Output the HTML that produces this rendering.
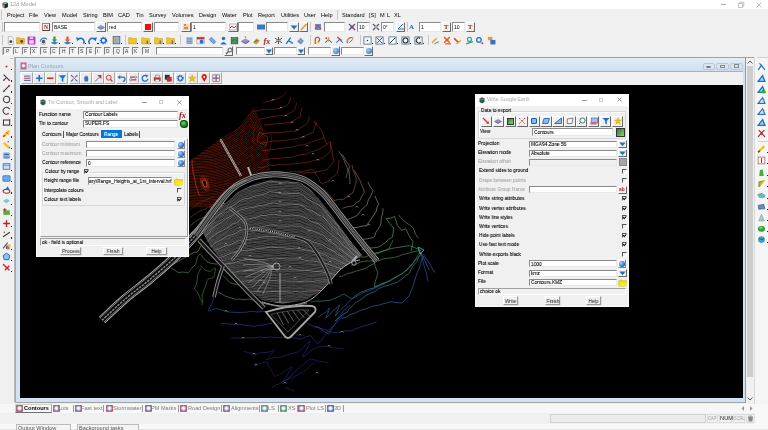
<!DOCTYPE html><html><head><meta charset="utf-8"><style>
html,body{margin:0;padding:0;width:768px;height:430px;overflow:hidden;background:#f0f0f0;}
body{position:relative;font-family:"Liberation Sans",sans-serif;}
div{position:absolute;box-sizing:border-box;}
.t{white-space:nowrap;line-height:1.2;will-change:transform;}
</style></head><body>
<div style="left:0px;top:0px;width:768px;height:9px;background:#fff"></div>
<svg style="position:absolute;left:0.5px;top:1px" width="8" height="8" viewBox="0 0 8 8"><path d="M1.5 2 L4.5 0.8 L7 2 L7 6 L4 7.5 L1.5 6Z" fill="#2f5a48"/><path d="M1.5 2 L4.5 0.8 L7 2 L4 3.2Z" fill="#8fb8a0"/><path d="M1 3 L3.5 4 L3.5 7 L1 6Z" fill="#d8a0a0" opacity="0.7"/><path d="M4 3.5 L6.5 2.5 L6.5 6 L4 7Z" fill="#1a2a22"/></svg>
<div class="t" style="left:10px;top:1.24px;font-size:5.6px;color:#9a9a9a;">12d Model</div>
<div style="left:720.5px;top:4px;width:5px;height:0.7px;background:#aaa"></div>
<svg style="position:absolute;left:737px;top:1px" width="8" height="7"><path d="M1.5 2.5 H5.5 V6.5 H1.5Z M2.8 2.5 V1.2 H6.8 V5.2 H5.5" stroke="#999" stroke-width="0.6" fill="none"/></svg>
<svg style="position:absolute;left:756px;top:1.5px" width="6" height="6"><path d="M0.5 0.5 L5.5 5.5 M5.5 0.5 L0.5 5.5" stroke="#999" stroke-width="0.6"/></svg>
<div style="left:0px;top:9px;width:768px;height:12px;background:#f0f0f0"></div>
<div style="left:1px;top:10px;width:1px;height:10px;background:#c8c8c8"></div>
<div class="t" style="left:6.5px;top:11.64px;font-size:5.6px;color:#000;">Project</div>
<div class="t" style="left:29.4px;top:11.64px;font-size:5.6px;color:#000;">File</div>
<div class="t" style="left:44px;top:11.64px;font-size:5.6px;color:#000;">View</div>
<div class="t" style="left:62px;top:11.64px;font-size:5.6px;color:#000;">Model</div>
<div class="t" style="left:83px;top:11.64px;font-size:5.6px;color:#000;">String</div>
<div class="t" style="left:103px;top:11.64px;font-size:5.6px;color:#000;">BIM</div>
<div class="t" style="left:118px;top:11.64px;font-size:5.6px;color:#000;">CAD</div>
<div class="t" style="left:136px;top:11.64px;font-size:5.6px;color:#000;">Tin</div>
<div class="t" style="left:149px;top:11.64px;font-size:5.6px;color:#000;">Survey</div>
<div class="t" style="left:172px;top:11.64px;font-size:5.6px;color:#000;">Volumes</div>
<div class="t" style="left:198.8px;top:11.64px;font-size:5.6px;color:#000;">Design</div>
<div class="t" style="left:222px;top:11.64px;font-size:5.6px;color:#000;">Water</div>
<div class="t" style="left:242.5px;top:11.64px;font-size:5.6px;color:#000;">Plot</div>
<div class="t" style="left:258px;top:11.64px;font-size:5.6px;color:#000;">Report</div>
<div class="t" style="left:280.8px;top:11.64px;font-size:5.6px;color:#000;">Utilities</div>
<div class="t" style="left:303.7px;top:11.64px;font-size:5.6px;color:#000;">User</div>
<div class="t" style="left:321.4px;top:11.64px;font-size:5.6px;color:#000;">Help</div>
<div class="t" style="left:342px;top:11.64px;font-size:5.6px;color:#000;">Standard</div>
<div class="t" style="left:369px;top:11.64px;font-size:5.6px;color:#000;">[S]</div>
<div class="t" style="left:379.5px;top:11.64px;font-size:5.6px;color:#000;">M</div>
<div class="t" style="left:387.3px;top:11.64px;font-size:5.6px;color:#000;">L</div>
<div class="t" style="left:394px;top:11.64px;font-size:5.6px;color:#000;">XL</div>
<div style="left:337px;top:10px;width:1px;height:10px;background:#c8c8c8"></div>
<div style="left:1.5px;top:22px;width:1px;height:10px;background:#c4c4c4"></div>
<div style="left:4px;top:22px;width:36px;height:10px;background:#fff;border-top:1px solid #8a8a8a;border-left:1px solid #8a8a8a;border-bottom:1px solid #e8e8e8;border-right:1px solid #e8e8e8;box-sizing:border-box;"></div>
<div style="left:42px;top:23px;width:8px;height:8px;background:#f4eeee;border:1px solid #a88080;border-right-color:#604040;border-bottom-color:#604040"></div>
<div class="t" style="left:43.6px;top:23.70px;font-size:5.5px;color:#a01010;font-weight:bold;font-family:'Liberation Serif',serif">N</div>
<div style="left:52px;top:22px;width:43px;height:10px;background:#fff;border-top:1px solid #8a8a8a;border-left:1px solid #8a8a8a;border-bottom:1px solid #e8e8e8;border-right:1px solid #e8e8e8;box-sizing:border-box;"></div>
<div class="t" style="left:54px;top:23.50px;font-size:5px;color:#000;">BASE</div>
<div style="left:96px;top:22px;width:10px;height:10px;background:#f0f0f0;border-top:1px solid #fff;border-left:1px solid #fff;border-bottom:1px solid #696969;border-right:1px solid #696969;box-sizing:border-box;"></div>
<svg style="position:absolute;left:97.0px;top:23.0px" width="8" height="8" viewBox="0 0 8 8"><path d="M0.5 4 L4 2 L7.5 4 L4 6Z" fill="#7a9ad0"/><path d="M0.5 4.8 L4 6.8 L7.5 4.8 L7.5 4 L4 6 L0.5 4Z" fill="#4a3a70"/></svg>
<div style="left:107px;top:22px;width:35px;height:10px;background:#fff;border-top:1px solid #8a8a8a;border-left:1px solid #8a8a8a;border-bottom:1px solid #e8e8e8;border-right:1px solid #e8e8e8;box-sizing:border-box;"></div>
<div class="t" style="left:109px;top:23.50px;font-size:5px;color:#000;">red</div>
<div style="left:143px;top:22px;width:10px;height:10px;background:#f0f0f0;border-top:1px solid #fff;border-left:1px solid #fff;border-bottom:1px solid #696969;border-right:1px solid #696969;box-sizing:border-box;"></div>
<div style="left:145px;top:24px;width:6px;height:6px;background:#ee1111"></div>
<div style="left:154px;top:22px;width:25px;height:10px;background:#fff;border-top:1px solid #8a8a8a;border-left:1px solid #8a8a8a;border-bottom:1px solid #e8e8e8;border-right:1px solid #e8e8e8;box-sizing:border-box;"></div>
<div style="left:181px;top:22px;width:10px;height:10px;background:#f0f0f0;border-top:1px solid #fff;border-left:1px solid #fff;border-bottom:1px solid #696969;border-right:1px solid #696969;box-sizing:border-box;"></div>
<svg style="position:absolute;left:182.0px;top:23.0px" width="8" height="8" viewBox="0 0 8 8"><rect x="1" y="1" width="6" height="6" fill="#f6d7a0"/><path d="M2 2h2M2 5h4" stroke="#c03020" stroke-width="1"/></svg>
<div style="left:191px;top:22px;width:35px;height:10px;background:#fff;border-top:1px solid #8a8a8a;border-left:1px solid #8a8a8a;border-bottom:1px solid #e8e8e8;border-right:1px solid #e8e8e8;box-sizing:border-box;"></div>
<div class="t" style="left:193px;top:23.50px;font-size:5px;color:#000;">1</div>
<div style="left:228px;top:22px;width:10px;height:10px;background:#f0f0f0;border-top:1px solid #fff;border-left:1px solid #fff;border-bottom:1px solid #696969;border-right:1px solid #696969;box-sizing:border-box;"></div>
<svg style="position:absolute;left:229.0px;top:23.0px" width="8" height="8" viewBox="0 0 8 8"><rect x="0.5" y="1" width="7" height="6" fill="#f4f4f4" stroke="#888" stroke-width="0.5"/><path d="M1 5 Q3 2 4 4 T7 3" stroke="#d02020" fill="none"/></svg>
<div style="left:238px;top:22px;width:16px;height:10px;background:#fff;border-top:1px solid #8a8a8a;border-left:1px solid #8a8a8a;border-bottom:1px solid #e8e8e8;border-right:1px solid #e8e8e8;box-sizing:border-box;"></div>
<svg style="position:absolute;left:256.5px;top:23.0px" width="8" height="8" viewBox="0 0 8 8"><rect x="0" y="1.5" width="8" height="5" fill="#3a78c0"/></svg>
<div style="left:266px;top:22px;width:22px;height:10px;background:#fff;border-top:1px solid #8a8a8a;border-left:1px solid #8a8a8a;border-bottom:1px solid #e8e8e8;border-right:1px solid #e8e8e8;box-sizing:border-box;"></div>
<div style="left:289px;top:22px;width:10px;height:10px;background:#f0f0f0;border-top:1px solid #fff;border-left:1px solid #fff;border-bottom:1px solid #696969;border-right:1px solid #696969;box-sizing:border-box;"></div>
<svg style="position:absolute;left:290px;top:24px" width="8" height="6"><path d="M0.5 1.5 L7.5 1.5 L4 5.5Z" fill="#1f6fc0"/></svg>
<div style="left:299px;top:22px;width:9px;height:10px;background:#f0f0f0;border-top:1px solid #fff;border-left:1px solid #fff;border-bottom:1px solid #696969;border-right:1px solid #696969;box-sizing:border-box;"></div>
<svg style="position:absolute;left:300px;top:23px" width="8" height="8"><path d="M1 7 L6.5 1" stroke="#d8a020" stroke-width="1.5"/></svg>
<div style="left:310px;top:22px;width:1px;height:10px;background:#c8c8c8"></div>
<svg style="position:absolute;left:314.0px;top:23.0px" width="8" height="8" viewBox="0 0 8 8"><rect x="1" y="1" width="6" height="6" fill="#6a8ad0"/><path d="M1 6 L4 2 L7 6" stroke="#e03020" fill="none"/></svg>
<div style="left:324px;top:22px;width:21px;height:10px;background:#fff;border-top:1px solid #8a8a8a;border-left:1px solid #8a8a8a;border-bottom:1px solid #e8e8e8;border-right:1px solid #e8e8e8;box-sizing:border-box;"></div>
<svg style="position:absolute;left:347.5px;top:23.0px" width="8" height="8" viewBox="0 0 8 8"><path d="M1 1 L7 7 M7 1 L1 7" stroke="#3060c0" stroke-width="1.3"/><circle cx="4" cy="4" r="1.5" fill="#e02020"/></svg>
<div style="left:357px;top:22px;width:13px;height:10px;background:#fff;border-top:1px solid #8a8a8a;border-left:1px solid #8a8a8a;border-bottom:1px solid #e8e8e8;border-right:1px solid #e8e8e8;box-sizing:border-box;"></div>
<div class="t" style="left:358.5px;top:23.50px;font-size:5px;color:#000;">10</div>
<svg style="position:absolute;left:372.0px;top:23.0px" width="8" height="8" viewBox="0 0 8 8"><path d="M1 1 L7 7 M7 1 L1 7" stroke="#3060c0" stroke-width="1.3"/><circle cx="4" cy="4" r="1.5" fill="#e0a020"/></svg>
<div style="left:381px;top:22px;width:13px;height:10px;background:#fff;border-top:1px solid #8a8a8a;border-left:1px solid #8a8a8a;border-bottom:1px solid #e8e8e8;border-right:1px solid #e8e8e8;box-sizing:border-box;"></div>
<div class="t" style="left:382.5px;top:23.50px;font-size:5px;color:#000;">0&deg;</div>
<div style="left:396px;top:22px;width:9px;height:10px;background:#f0f0f0;border-top:1px solid #fff;border-left:1px solid #fff;border-bottom:1px solid #696969;border-right:1px solid #696969;box-sizing:border-box;"></div>
<svg style="position:absolute;left:396.5px;top:23.0px" width="8" height="8" viewBox="0 0 8 8"><path d="M1 6 L7 6 M1 6 L6 1" stroke="#4070b0" stroke-width="1"/></svg>
<div style="left:407px;top:22px;width:1px;height:10px;background:#c8c8c8"></div>
<div class="t" style="left:409px;top:22.80px;font-size:7px;color:#1f5fb0;font-weight:bold;font-family:'Liberation Serif',serif">A</div>
<div style="left:419px;top:22px;width:22px;height:10px;background:#fff;border-top:1px solid #8a8a8a;border-left:1px solid #8a8a8a;border-bottom:1px solid #e8e8e8;border-right:1px solid #e8e8e8;box-sizing:border-box;"></div>
<div class="t" style="left:421px;top:23.50px;font-size:5px;color:#000;">1</div>
<div style="left:442px;top:22px;width:9px;height:10px;background:#f0f0f0;border-top:1px solid #fff;border-left:1px solid #fff;border-bottom:1px solid #696969;border-right:1px solid #696969;box-sizing:border-box;"></div>
<div class="t" style="left:443.5px;top:23.10px;font-size:6.5px;color:#a02010;font-weight:bold;font-family:'Liberation Serif',serif">T</div>
<div style="left:452px;top:22px;width:13px;height:10px;background:#fff;border-top:1px solid #8a8a8a;border-left:1px solid #8a8a8a;border-bottom:1px solid #e8e8e8;border-right:1px solid #e8e8e8;box-sizing:border-box;"></div>
<div class="t" style="left:453.5px;top:23.50px;font-size:5px;color:#000;">10</div>
<div style="left:466px;top:22px;width:9px;height:10px;background:#f0f0f0;border-top:1px solid #fff;border-left:1px solid #fff;border-bottom:1px solid #696969;border-right:1px solid #696969;box-sizing:border-box;"></div>
<div class="t" style="left:467.5px;top:23.10px;font-size:6.5px;color:#a02010;font-weight:bold;font-family:'Liberation Serif',serif">T</div>
<div style="left:1.5px;top:35px;width:1px;height:10px;background:#c4c4c4"></div>
<svg style="position:absolute;left:5.699999999999999px;top:35.5px" width="9" height="9" viewBox="0 0 8 8"><path d="M2 0.5 L5 0.5 L6.5 2 L6.5 7.5 L2 7.5Z" fill="#f4f4f4" stroke="#999" stroke-width="0.5"/><circle cx="4.3" cy="5" r="1.3" fill="#444"/></svg>
<svg style="position:absolute;left:15.8px;top:35.5px" width="9" height="9" viewBox="0 0 8 8"><path d="M0.5 1.5 L3 1.5 L3.5 2.2 L7.5 2.2 L7.5 7 L0.5 7Z" fill="#f0b830" stroke="#c09010" stroke-width="0.4"/><circle cx="5" cy="4.8" r="1.2" fill="#444"/></svg>
<svg style="position:absolute;left:26.9px;top:35.5px" width="9" height="9" viewBox="0 0 8 8"><rect x="0.5" y="0.5" width="7" height="7" rx="0.8" fill="#b040c0"/><rect x="2" y="3.8" width="4" height="3" fill="#f4d8f8"/><rect x="2.5" y="0.8" width="3" height="2" fill="#e8c0f0"/></svg>
<svg style="position:absolute;left:38.7px;top:35.5px" width="9" height="9" viewBox="0 0 8 8"><path d="M1 5 A3.5 3.5 0 0 1 7 3" stroke="#2a80d0" stroke-width="1" fill="none"/><circle cx="4" cy="5" r="1.6" fill="#555"/><path d="M1.5 6.5 A3 3 0 0 0 6 6.5" stroke="#aaa" stroke-width="0.8" fill="none"/></svg>
<svg style="position:absolute;left:49.7px;top:35.5px" width="9" height="9" viewBox="0 0 8 8"><path d="M0.5 6 L4 7.5 L7.5 6 L4 4.8Z" fill="#3a7ad0"/><path d="M3 0.5 L5 0.5 L5 3 L6.5 3 L4 5.5 L1.5 3 L3 3Z" fill="#30a040"/></svg>
<div style="left:58.7px;top:43px;width:1.2px;height:1.2px;background:#222"></div>
<svg style="position:absolute;left:63.0px;top:35.5px" width="9" height="9" viewBox="0 0 8 8"><path d="M0.5 6 L4 7.5 L7.5 6 L4 4.8Z" fill="#3a7ad0"/><path d="M3 0.5 L5 0.5 L5 3 L6.5 3 L4 5.5 L1.5 3 L3 3Z" fill="#e06020"/></svg>
<div style="left:72.0px;top:43px;width:1.2px;height:1.2px;background:#222"></div>
<svg style="position:absolute;left:76.0px;top:35.5px" width="9" height="9" viewBox="0 0 8 8"><path d="M6.5 7 A3 3 0 1 0 1.8 3.2" stroke="#1f6fd0" stroke-width="1.4" fill="none"/><path d="M0 1.2 L3.8 2 L1.2 4.6Z" fill="#1f6fd0"/></svg>
<div style="left:85.0px;top:43px;width:1.2px;height:1.2px;background:#222"></div>
<svg style="position:absolute;left:88.4px;top:35.5px" width="9" height="9" viewBox="0 0 8 8"><path d="M1.5 7 A3 3 0 1 1 6.2 3.2" stroke="#1f6fd0" stroke-width="1.4" fill="none"/><path d="M8 1.2 L4.2 2 L6.8 4.6Z" fill="#1f6fd0"/></svg>
<div style="left:97.4px;top:43px;width:1.2px;height:1.2px;background:#222"></div>
<svg style="position:absolute;left:99.2px;top:35.5px" width="9" height="9" viewBox="0 0 8 8"><circle cx="4" cy="4" r="2.4" stroke="#1f6fd0" stroke-width="1.8" fill="none" stroke-dasharray="1.1 0.6"/><circle cx="4" cy="4" r="2" stroke="#1f6fd0" stroke-width="0.9" fill="none"/></svg>
<svg style="position:absolute;left:111.6px;top:35.5px" width="9" height="9" viewBox="0 0 8 8"><rect x="1" y="0.5" width="6" height="6.5" fill="#80b8e8" stroke="#405070" stroke-width="0.6"/><rect x="2" y="2" width="3" height="3" fill="#e0a030"/></svg>
<div style="left:120.6px;top:43px;width:1.2px;height:1.2px;background:#222"></div>
<svg style="position:absolute;left:128.3px;top:35.5px" width="9" height="9" viewBox="0 0 8 8"><path d="M0.5 1.5 L3 1.5 L3.5 2.2 L7.5 2.2 L7.5 7 L0.5 7Z" fill="#f2c428" stroke="#c09010" stroke-width="0.4"/></svg>
<div style="left:137.3px;top:43px;width:1.2px;height:1.2px;background:#222"></div>
<svg style="position:absolute;left:141.3px;top:35.5px" width="9" height="9" viewBox="0 0 8 8"><path d="M0.5 1.5 L3 1.5 L3.5 2.2 L7.5 2.2 L7.5 7 L0.5 7Z" fill="#f2c428" stroke="#c09010" stroke-width="0.4"/><path d="M5.5 4 L5.5 7" stroke="#2050b0" stroke-width="0.9"/></svg>
<div style="left:150.3px;top:43px;width:1.2px;height:1.2px;background:#222"></div>
<svg style="position:absolute;left:153.8px;top:35.5px" width="9" height="9" viewBox="0 0 8 8"><path d="M0.5 1.5 L3 1.5 L3.5 2.2 L7.5 2.2 L7.5 7 L0.5 7Z" fill="#f2c428" stroke="#c09010" stroke-width="0.4"/><path d="M5.5 4 L5.5 7" stroke="#2050b0" stroke-width="0.9"/></svg>
<div style="left:162.8px;top:43px;width:1.2px;height:1.2px;background:#222"></div>
<svg style="position:absolute;left:166.1px;top:35.5px" width="9" height="9" viewBox="0 0 8 8"><path d="M0.5 1.5 L3 1.5 L3.5 2.2 L7.5 2.2 L7.5 7 L0.5 7Z" fill="#f2c428" stroke="#c09010" stroke-width="0.4"/><path d="M5.5 4 L5.5 7" stroke="#2050b0" stroke-width="0.9"/></svg>
<div style="left:175.1px;top:43px;width:1.2px;height:1.2px;background:#222"></div>
<svg style="position:absolute;left:184.5px;top:35.5px" width="9" height="9" viewBox="0 0 8 8"><rect x="1" y="1" width="6" height="6" fill="#c0d0e8"/><path d="M1.5 2 L6.5 2 M1.5 3.5 L6.5 3.5 M1.5 5 L6.5 5 M1.5 6.5 L6.5 6.5" stroke="#3a6aa0" stroke-width="0.6"/></svg>
<svg style="position:absolute;left:195.5px;top:35.5px" width="9" height="9" viewBox="0 0 8 8"><rect x="0.8" y="1" width="6.5" height="6" fill="#f0f0f0" stroke="#888" stroke-width="0.4"/><rect x="0.8" y="1" width="6.5" height="2" fill="#d03030"/><circle cx="5" cy="5" r="1.8" fill="#3070d0"/></svg>
<svg style="position:absolute;left:207.5px;top:35.5px" width="9" height="9" viewBox="0 0 8 8"><path d="M1 3 L3 1 L7 5 L5 7Z" fill="#70a8e8" stroke="#3a70c0" stroke-width="0.5"/></svg>
<svg style="position:absolute;left:218.5px;top:35.5px" width="9" height="9" viewBox="0 0 8 8"><circle cx="4" cy="2.2" r="1.6" fill="#2a70c0"/><path d="M1 7.5 Q4 3 7 7.5Z" fill="#2a70c0"/></svg>
<svg style="position:absolute;left:229.5px;top:35.5px" width="9" height="9" viewBox="0 0 8 8"><rect x="1" y="1.5" width="6" height="5.5" fill="#40a040" stroke="#334" stroke-width="0.5"/><path d="M1 5 L4 3 L7 5" stroke="#2060c0" stroke-width="0.8" fill="none"/></svg>
<svg style="position:absolute;left:240.5px;top:35.5px" width="9" height="9" viewBox="0 0 8 8"><path d="M0.5 4.2 L4 2.2 L7.5 4.2 L4 6.2Z" fill="#9a8acb"/><path d="M0.5 5 L4 7 L7.5 5 L7.5 4.2 L4 6.2 L0.5 4.2Z" fill="#503a80"/><path d="M3 0.5 L5 0.5 L4 2Z" fill="#888"/></svg>
<svg style="position:absolute;left:251.5px;top:35.5px" width="9" height="9" viewBox="0 0 8 8"><path d="M1 6 L4 2 L7 4 L4 7.5Z" fill="#c0a040"/><path d="M2 5 L5 4" stroke="#604020" stroke-width="0.6"/></svg>
<svg style="position:absolute;left:262.5px;top:35.5px" width="9" height="9" viewBox="0 0 8 8"><text x="0.5" y="6.8" font-size="7" font-family="Liberation Serif" font-style="italic" font-weight="bold" fill="#a02020">fx</text></svg>
<svg style="position:absolute;left:273.9px;top:35.5px" width="9" height="9" viewBox="0 0 8 8"><path d="M1 2 L7 6 M1 6 L7 2 M4 1 L4 7" stroke="#333" stroke-width="0.8"/><path d="M2 4 L6 4" stroke="#aaa" stroke-width="1.2"/></svg>
<svg style="position:absolute;left:284.5px;top:35.5px" width="9" height="9" viewBox="0 0 8 8"><path d="M1 7 L5 1.5 M3 4 L7 6.5" stroke="#1f6fd0" stroke-width="1.2"/></svg>
<svg style="position:absolute;left:295.5px;top:35.5px" width="9" height="9" viewBox="0 0 8 8"><path d="M1 5 L4 1.5 L7 4.5 L4.5 7.5Z" fill="#7090c0"/><path d="M2 2 L6 6" stroke="#c0c0d0" stroke-width="0.6"/></svg>
<svg style="position:absolute;left:313.0px;top:35.5px" width="9" height="9" viewBox="0 0 8 8"><path d="M2 7 L2 2.5 A2 2 0 1 1 4.5 5" stroke="#d05020" stroke-width="1.1" fill="none"/><path d="M1 6 L6 6" stroke="#e0a030" stroke-width="0.6"/></svg>
<svg style="position:absolute;left:323.5px;top:35.5px" width="9" height="9" viewBox="0 0 8 8"><path d="M1 6 L4 3 L7 6" stroke="#1f6fd0" stroke-width="0.9" fill="none"/><path d="M4 1 L4 5" stroke="#e0a030" stroke-width="1.2"/><circle cx="2" cy="2" r="0.8" fill="#d03030"/></svg>
<svg style="position:absolute;left:334.5px;top:35.5px" width="9" height="9" viewBox="0 0 8 8"><path d="M1 6 L4 3 L7 6" stroke="#1f6fd0" stroke-width="0.9" fill="none"/><path d="M2 1 L6 4" stroke="#e04020" stroke-width="1.2"/></svg>
<svg style="position:absolute;left:346.1px;top:35.5px" width="9" height="9" viewBox="0 0 8 8"><path d="M1.5 6.5 A3.5 3.5 0 0 1 6.5 2" stroke="#e06020" stroke-width="1.1" fill="none"/><path d="M3 6 L6 3" stroke="#1f6fd0" stroke-width="0.8"/></svg>
<svg style="position:absolute;left:362.8px;top:35.5px" width="9" height="9" viewBox="0 0 8 8"><rect x="0.8" y="0.8" width="6.4" height="6.4" fill="#f8f8f8" stroke="#4a6a90" stroke-width="0.7"/><circle cx="4" cy="4" r="0.7" fill="#333"/></svg>
<div style="left:371.8px;top:43px;width:1.2px;height:1.2px;background:#222"></div>
<svg style="position:absolute;left:375.0px;top:35.5px" width="9" height="9" viewBox="0 0 8 8"><rect x="0.8" y="0.8" width="6.4" height="6.4" fill="#f8f8f8" stroke="#4a6a90" stroke-width="0.7"/><path d="M1.5 1.5 L6.5 6.5 M6.5 1.5 L1.5 6.5" stroke="#222" stroke-width="0.7"/></svg>
<div style="left:384.0px;top:43px;width:1.2px;height:1.2px;background:#222"></div>
<svg style="position:absolute;left:388.0px;top:35.5px" width="9" height="9" viewBox="0 0 8 8"><rect x="0.8" y="0.8" width="6.4" height="6.4" fill="#f8f8f8" stroke="#4a6a90" stroke-width="0.7"/><path d="M1.5 6.5 L6.5 1.5" stroke="#222" stroke-width="0.8"/></svg>
<div style="left:397.0px;top:43px;width:1.2px;height:1.2px;background:#222"></div>
<svg style="position:absolute;left:401.1px;top:35.5px" width="9" height="9" viewBox="0 0 8 8"><rect x="0.8" y="0.8" width="6.4" height="6.4" fill="#f8f8f8" stroke="#4a6a90" stroke-width="0.7"/><circle cx="4" cy="4" r="2.2" stroke="#222" stroke-width="0.9" fill="none"/></svg>
<div style="left:410.1px;top:43px;width:1.2px;height:1.2px;background:#222"></div>
<svg style="position:absolute;left:414.1px;top:35.5px" width="9" height="9" viewBox="0 0 8 8"><rect x="0.8" y="0.8" width="6.4" height="6.4" fill="#f8f8f8" stroke="#4a6a90" stroke-width="0.7"/><path d="M5.5 2 A2.3 2.3 0 1 0 6 5.5" stroke="#222" stroke-width="0.9" fill="none"/></svg>
<div style="left:423.1px;top:43px;width:1.2px;height:1.2px;background:#222"></div>
<svg style="position:absolute;left:431.0px;top:35.5px" width="9" height="9" viewBox="0 0 8 8"><path d="M1 6 L5 2" stroke="#e0a020" stroke-width="1.3"/><path d="M3 7 L7 5" stroke="#1f6fd0" stroke-width="0.8"/></svg>
<svg style="position:absolute;left:442.5px;top:35.5px" width="9" height="9" viewBox="0 0 8 8"><path d="M1 1 L6 6 M1 6 L6 1" stroke="#e06020" stroke-width="1.3"/><path d="M2 7 L7 7" stroke="#b03020" stroke-width="0.8"/></svg>
<svg style="position:absolute;left:453.2px;top:35.5px" width="9" height="9" viewBox="0 0 8 8"><path d="M1 2 L5 6" stroke="#e04020" stroke-width="1.5"/><path d="M3 7 L7 4" stroke="#d0a030" stroke-width="1.0"/></svg>
<svg style="position:absolute;left:464.9px;top:35.5px" width="9" height="9" viewBox="0 0 8 8"><circle cx="4" cy="3" r="1.8" stroke="#30a0d0" stroke-width="1" fill="none"/><path d="M1 7 L7 5" stroke="#30a040" stroke-width="1.2"/></svg>
<svg style="position:absolute;left:475.3px;top:35.5px" width="9" height="9" viewBox="0 0 8 8"><circle cx="3.5" cy="3.5" r="2" stroke="#1f6fd0" stroke-width="1.1" fill="none"/><circle cx="6.5" cy="6.5" r="0.9" fill="#d03030"/></svg>
<svg style="position:absolute;left:487.0px;top:35.5px" width="9" height="9" viewBox="0 0 8 8"><rect x="0.8" y="0.8" width="4" height="3" fill="#e0a030"/><rect x="3" y="3.5" width="4.5" height="4" fill="#3a70c0"/></svg>
<div style="left:125px;top:35px;width:1px;height:10px;background:#c8c8c8"></div>
<div style="left:179.7px;top:35px;width:1px;height:10px;background:#c8c8c8"></div>
<div style="left:310px;top:35px;width:1px;height:10px;background:#c8c8c8"></div>
<div style="left:359.7px;top:35px;width:1px;height:10px;background:#c8c8c8"></div>
<div style="left:428px;top:35px;width:1px;height:10px;background:#c8c8c8"></div>
<div style="left:1.5px;top:47px;width:1px;height:8px;background:#c4c4c4"></div>
<div style="left:3px;top:47px;width:9px;height:7.5px;background:#f0f0f0;border-top:1px solid #808080;border-left:1px solid #808080;border-right:1px solid #fff;border-bottom:1px solid #fff"></div>
<div class="t" style="left:5.75px;top:49.26px;font-size:4.9px;color:#404040;">P</div>
<div style="left:13px;top:47px;width:7px;height:7.5px;background:#f0f0f0;border-top:1px solid #808080;border-left:1px solid #808080;border-right:1px solid #fff;border-bottom:1px solid #fff"></div>
<div class="t" style="left:14.9px;top:49.26px;font-size:4.9px;color:#404040;">L</div>
<div style="left:22px;top:47px;width:7px;height:7.5px;background:#f0f0f0;border-top:1px solid #808080;border-left:1px solid #808080;border-right:1px solid #fff;border-bottom:1px solid #fff"></div>
<div class="t" style="left:23.5px;top:49.26px;font-size:4.9px;color:#404040;">F</div>
<div style="left:30px;top:47px;width:8px;height:7.5px;background:#f0f0f0;border-top:1px solid #808080;border-left:1px solid #808080;border-right:1px solid #fff;border-bottom:1px solid #fff"></div>
<div class="t" style="left:32.3px;top:49.26px;font-size:4.9px;color:#404040;">X</div>
<div style="left:40px;top:47px;width:8px;height:7.5px;background:#f0f0f0;border-top:1px solid #808080;border-left:1px solid #808080;border-right:1px solid #fff;border-bottom:1px solid #fff"></div>
<div class="t" style="left:42.6px;top:49.26px;font-size:4.9px;color:#404040;">G</div>
<div style="left:50px;top:47px;width:8px;height:7.5px;background:#f0f0f0;border-top:1px solid #808080;border-left:1px solid #808080;border-right:1px solid #fff;border-bottom:1px solid #fff"></div>
<div class="t" style="left:51.8px;top:49.26px;font-size:4.9px;color:#404040;">C</div>
<div style="left:59px;top:47px;width:8px;height:7.5px;background:#f0f0f0;border-top:1px solid #808080;border-left:1px solid #808080;border-right:1px solid #fff;border-bottom:1px solid #fff"></div>
<div class="t" style="left:61.699999999999996px;top:49.26px;font-size:4.9px;color:#404040;">H</div>
<div style="left:69px;top:47px;width:8px;height:7.5px;background:#f0f0f0;border-top:1px solid #808080;border-left:1px solid #808080;border-right:1px solid #fff;border-bottom:1px solid #fff"></div>
<div class="t" style="left:71.30000000000001px;top:49.26px;font-size:4.9px;color:#404040;">T</div>
<div style="left:78px;top:47px;width:7px;height:7.5px;background:#f0f0f0;border-top:1px solid #808080;border-left:1px solid #808080;border-right:1px solid #fff;border-bottom:1px solid #fff"></div>
<div class="t" style="left:79.7px;top:49.26px;font-size:4.9px;color:#404040;">S</div>
<div style="left:86px;top:47px;width:7px;height:7.5px;background:#f0f0f0;border-top:1px solid #808080;border-left:1px solid #808080;border-right:1px solid #fff;border-bottom:1px solid #fff"></div>
<div class="t" style="left:88.525px;top:49.26px;font-size:4.9px;color:#404040;">E</div>
<div style="left:95px;top:47px;width:7px;height:7.5px;background:#f0f0f0;border-top:1px solid #808080;border-left:1px solid #808080;border-right:1px solid #fff;border-bottom:1px solid #fff"></div>
<div class="t" style="left:96.9px;top:49.26px;font-size:4.9px;color:#404040;">I</div>
<div style="left:104px;top:47px;width:7px;height:7.5px;background:#f0f0f0;border-top:1px solid #808080;border-left:1px solid #808080;border-right:1px solid #fff;border-bottom:1px solid #fff"></div>
<div class="t" style="left:105.55000000000001px;top:49.26px;font-size:4.9px;color:#404040;">D</div>
<div style="left:113px;top:47px;width:8px;height:7.5px;background:#f0f0f0;border-top:1px solid #808080;border-left:1px solid #808080;border-right:1px solid #fff;border-bottom:1px solid #fff"></div>
<div class="t" style="left:115.55000000000001px;top:49.26px;font-size:4.9px;color:#404040;">Q</div>
<div style="left:123px;top:47px;width:7px;height:7.5px;background:#f0f0f0;border-top:1px solid #808080;border-left:1px solid #808080;border-right:1px solid #fff;border-bottom:1px solid #fff"></div>
<div class="t" style="left:124.9px;top:49.26px;font-size:4.9px;color:#404040;">A</div>
<div style="left:132px;top:47px;width:7px;height:7.5px;background:#f0f0f0;border-top:1px solid #808080;border-left:1px solid #808080;border-right:1px solid #fff;border-bottom:1px solid #fff"></div>
<div class="t" style="left:134.20000000000002px;top:49.26px;font-size:4.9px;color:#404040;">K</div>
<div style="left:142px;top:47px;width:8px;height:7.5px;background:#f0f0f0;border-top:1px solid #808080;border-left:1px solid #808080;border-right:1px solid #fff;border-bottom:1px solid #fff"></div>
<div class="t" style="left:144.65px;top:49.26px;font-size:4.9px;color:#404040;">M</div>
<div style="left:156px;top:47px;width:67px;height:8px;background:#fff;border-top:1px solid #8a8a8a;border-left:1px solid #8a8a8a;border-bottom:1px solid #e8e8e8;border-right:1px solid #e8e8e8;box-sizing:border-box;"></div>
<div style="left:224px;top:46px;width:9px;height:10px;background:#f0f0f0;border-top:1px solid #fff;border-left:1px solid #fff;border-bottom:1px solid #696969;border-right:1px solid #696969;box-sizing:border-box;"></div>
<svg style="position:absolute;left:225px;top:47px" width="8" height="8"><circle cx="5" cy="3" r="2" fill="none" stroke="#555"/><path d="M3.5 4.5 L1 7" stroke="#555" stroke-width="1.2"/></svg>
<div style="left:236px;top:47px;width:29px;height:8px;background:#fff;border-top:1px solid #8a8a8a;border-left:1px solid #8a8a8a;border-bottom:1px solid #e8e8e8;border-right:1px solid #e8e8e8;box-sizing:border-box;"></div>
<div style="left:265px;top:47px;width:8px;height:8px;background:#f0f0f0;border-top:1px solid #fff;border-left:1px solid #fff;border-bottom:1px solid #696969;border-right:1px solid #696969;box-sizing:border-box;"></div>
<svg style="position:absolute;left:266px;top:49px" width="6" height="5"><path d="M0 0.5 L6 0.5 L3 4.5Z" fill="#1f6fc0"/></svg>
<div style="left:274px;top:47px;width:23px;height:8px;background:#fff;border-top:1px solid #8a8a8a;border-left:1px solid #8a8a8a;border-bottom:1px solid #e8e8e8;border-right:1px solid #e8e8e8;box-sizing:border-box;"></div>
<div style="left:297px;top:47px;width:8px;height:8px;background:#f0f0f0;border-top:1px solid #fff;border-left:1px solid #fff;border-bottom:1px solid #696969;border-right:1px solid #696969;box-sizing:border-box;"></div>
<svg style="position:absolute;left:298px;top:49px" width="6" height="5"><path d="M0 0.5 L6 0.5 L3 4.5Z" fill="#1f6fc0"/></svg>
<div style="left:307.6px;top:47px;width:23px;height:8px;background:#fff;border-top:1px solid #8a8a8a;border-left:1px solid #8a8a8a;border-bottom:1px solid #e8e8e8;border-right:1px solid #e8e8e8;box-sizing:border-box;"></div>
<div style="left:331px;top:46px;width:9px;height:10px;background:#f0f0f0;border-top:1px solid #fff;border-left:1px solid #fff;border-bottom:1px solid #696969;border-right:1px solid #696969;box-sizing:border-box;"></div>
<div style="left:332.5px;top:48px;width:6px;height:6px;background:radial-gradient(circle at 35% 35%,#9fd0ff,#1f5fb0);border-radius:50%"></div>
<div style="left:341px;top:47px;width:23px;height:8px;background:#fff;border-top:1px solid #8a8a8a;border-left:1px solid #8a8a8a;border-bottom:1px solid #e8e8e8;border-right:1px solid #e8e8e8;box-sizing:border-box;"></div>
<div style="left:364px;top:46px;width:9px;height:10px;background:#f0f0f0;border-top:1px solid #fff;border-left:1px solid #fff;border-bottom:1px solid #696969;border-right:1px solid #696969;box-sizing:border-box;"></div>
<div style="left:365.5px;top:48px;width:6px;height:6px;background:radial-gradient(circle at 35% 35%,#9fd0ff,#1f5fb0);border-radius:50%"></div>
<div style="left:15px;top:57px;width:740px;height:1px;background:#a0a0a0"></div>
<div style="left:755px;top:57px;width:13px;height:350px;background:#f5f5f5"></div>
<div style="left:757px;top:57px;width:11px;height:1px;background:#d0d0d0"></div>
<div style="left:15px;top:58px;width:731px;height:345px;background:#d3e2f2;border-left:1px solid #9aaabb;border-right:1px solid #8a98a8;border-bottom:1.5px solid #a0a4a8"></div>
<div style="left:16px;top:58px;width:729px;height:13px;background:linear-gradient(#e3edf8,#cfdff0)"></div>
<div style="left:19.5px;top:62px;width:7.5px;height:7.5px;background:radial-gradient(circle at 50% 45%,#f0f8ff 20%,#9070a0 60%,#c07080);border:1px solid #e0a0b0;border-radius:1px"></div>
<div class="t" style="left:28px;top:63.14px;font-size:5.6px;color:#9aa8b8;">Plan Contours</div>
<div style="left:702.5px;top:62.5px;width:12.5px;height:7px;border:1px solid #b8c8d8;border-radius:2px;background:#d8e4f0"></div>
<div style="left:716px;top:62.5px;width:12.5px;height:7px;border:1px solid #b8c8d8;border-radius:2px;background:#d8e4f0"></div>
<div style="left:730px;top:62.5px;width:12.5px;height:7px;border:1px solid #b8c8d8;border-radius:2px;background:#d8e4f0"></div>
<div style="left:706px;top:65.5px;width:5px;height:2px;border:1px solid #777;border-radius:1px"></div>
<div style="left:720px;top:64.5px;width:5px;height:3px;border:1px solid #888"></div>
<div style="left:734px;top:64px;width:5px;height:4px;border:1px solid #888"></div>
<div style="left:20px;top:71px;width:722.5px;height:1px;background:#a8b0b8"></div>
<div style="left:20px;top:72px;width:722.5px;height:12.5px;background:#f0f0f0"></div>
<div style="left:20px;top:84.5px;width:722.5px;height:313.5px;background:#000"></div>
<div style="left:746px;top:58px;width:8px;height:345px;background:#f0f0f0"></div>
<div style="left:746.5px;top:66px;width:6px;height:311px;background:#cdcdcd"></div>
<svg style="position:absolute;left:746px;top:59px" width="8" height="6"><path d="M1.5 4.5 L4 2 L6.5 4.5" stroke="#444" fill="none" stroke-width="0.9"/></svg>
<svg style="position:absolute;left:746px;top:396px" width="8" height="6"><path d="M1.5 1.5 L4 4 L6.5 1.5" stroke="#444" fill="none" stroke-width="0.9"/></svg>
<div style="left:754px;top:57px;width:1px;height:347px;background:#d8d8d8"></div>
<svg style="position:absolute;left:0;top:0" width="768" height="430"><defs><clipPath id="cv"><rect x="20" y="84.5" width="722.5" height="313.5"/></clipPath></defs><g clip-path="url(#cv)"><clipPath id="redclip"><path d="M180 168 L190.4 160.3 L204.3 150.5 L219 140 L228.7 129.3 L241.7 119.5 L249.9 113 L254 107 L262 125 L268 150 L270 170 L246 182 L226 198 L208 217 L196 230 L180 240Z"/></clipPath><g clip-path="url(#redclip)"><path d="M255.7 97.9 255.0 101.7 253.6 105.5 251.9 109.2 250.4 112.9 248.1 116.1 245.9 119.7 243.8 122.4 241.3 125.9 238.2 128.4 234.9 130.6 231.9 133.0 228.3 135.2 224.7 137.2 221.3 139.1 217.6 140.3 213.8 141.4 209.9 142.0 206.3 143.0 202.2 143.1 197.9 142.8 193.9 142.4 190.3 142.1 186.4 141.2 182.7 140.4 178.3 138.7 175.3 137.2 171.8 135.3 167.9 133.3" stroke="#922612" stroke-width="0.55" fill="none" /><path d="M257.4 98.0 256.0 102.0 255.3 106.2 253.3 109.7 251.5 113.2 249.8 116.8 247.4 120.4 244.7 123.8 241.9 126.8 238.9 129.5 235.9 132.0 233.0 134.7 229.2 136.9 225.5 138.6 222.1 140.4 217.9 142.0 214.0 142.7 210.3 143.6 206.0 144.0 201.8 144.6 197.8 144.6 193.8 144.2 190.1 143.7 185.9 143.0 181.7 141.5 178.3 140.5 174.2 138.4 170.9 137.0 167.1 134.8" stroke="#912511" stroke-width="0.55" fill="none" /><path d="M259.0 98.6 257.7 102.3 256.2 106.8 254.7 110.6 252.9 114.4 251.0 117.7 248.4 121.5 245.8 124.5 243.3 128.0 240.3 130.5 237.3 133.2 233.3 135.7 230.0 137.8 226.2 139.9 222.6 141.5 218.5 143.4 214.8 144.4 210.6 145.2 206.1 145.5 201.8 146.3 198.0 146.3 193.4 145.9 189.6 145.3 185.4 144.6 181.2 143.2 177.6 142.0 173.8 140.1 170.1 138.3 166.3 135.9" stroke="#912511" stroke-width="0.55" fill="none" /><path d="M260.5 99.0 259.2 103.2 258.2 107.1 256.4 111.0 254.5 115.0 252.0 118.8 250.2 122.5 247.4 125.6 244.5 128.9 241.2 132.0 237.7 134.7 234.2 137.2 230.8 139.2 227.1 141.4 223.2 143.4 218.9 144.3 214.8 145.9 210.5 146.5 206.7 147.4 202.1 147.8 197.7 147.7 193.4 147.3 189.5 147.0 185.3 145.7 181.0 144.5 176.7 143.2 173.2 141.6 169.3 139.7 165.4 136.9" stroke="#912511" stroke-width="0.55" fill="none" /><path d="M261.8 99.0 260.6 103.4 259.5 107.6 257.6 111.9 256.1 115.6 253.3 119.2 251.4 122.9 248.5 126.7 245.3 130.1 242.0 132.7 238.9 135.5 235.5 138.2 231.4 140.5 227.8 142.8 223.8 144.7 219.7 146.4 215.4 147.1 211.0 148.0 206.3 148.8 202.3 149.0 197.7 149.1 193.5 148.9 189.1 148.4 184.6 147.5 180.7 145.9 176.6 144.7 172.1 142.8 168.5 141.0 164.6 138.4" stroke="#912511" stroke-width="0.55" fill="none" /><path d="M263.6 99.6 262.5 103.8 260.9 108.0 259.3 112.5 257.3 116.5 254.7 120.6 252.7 124.3 249.6 127.8 246.5 131.2 243.5 134.0 239.6 137.0 236.2 139.8 232.4 141.8 228.6 143.9 224.4 145.8 219.9 147.8 215.4 148.6 211.3 149.9 207.0 150.5 202.5 150.7 198.0 150.5 193.1 150.4 188.6 149.9 184.4 148.8 180.2 147.6 175.6 146.0 171.8 144.4 167.4 142.3 164.1 139.7" stroke="#912511" stroke-width="0.55" fill="none" /><path d="M264.9 99.6 263.8 104.3 262.4 108.4 260.8 113.0 258.5 117.3 256.3 121.1 253.8 124.7 250.8 128.6 248.0 132.3 244.2 135.3 240.6 138.2 237.3 141.2 233.1 143.3 228.9 145.7 225.1 147.2 220.7 148.8 215.9 150.2 211.6 151.2 206.8 152.0 202.1 152.4 197.5 152.3 192.9 151.8 188.5 151.3 183.9 150.3 179.5 148.9 175.0 147.6 171.0 145.6 167.1 143.5 163.1 140.8" stroke="#902511" stroke-width="0.55" fill="none" /><path d="M266.5 100.3 265.5 104.6 263.6 109.5 261.8 113.9 260.1 117.6 257.4 122.1 254.7 125.6 252.2 129.6 249.0 132.9 245.3 136.5 241.5 139.3 238.1 142.5 234.2 144.5 229.7 147.1 225.4 149.0 220.8 150.3 216.2 151.6 211.8 152.8 207.1 153.3 202.2 153.6 197.8 154.1 193.2 153.2 188.0 153.1 183.6 152.0 178.9 150.5 174.6 148.9 170.3 146.7 166.2 145.0 161.9 142.2" stroke="#902511" stroke-width="0.55" fill="none" /><path d="M268.0 100.4 266.5 104.9 265.2 109.4 263.6 114.4 261.4 118.8 258.9 122.7 256.2 126.8 253.5 130.8 249.8 134.5 246.6 137.7 242.9 140.6 239.0 143.8 234.8 146.3 230.6 148.3 226.1 150.1 221.4 152.0 216.5 153.3 212.1 154.4 207.1 155.3 202.5 155.3 197.7 155.4 192.8 155.0 188.2 154.4 183.3 153.5 178.8 151.7 174.1 150.5 169.4 148.3 165.0 145.9 161.1 143.3" stroke="#902511" stroke-width="0.55" fill="none" /><path d="M269.3 101.0 268.2 105.6 267.0 110.3 265.1 114.9 262.8 119.1 260.2 123.8 257.1 128.0 254.1 131.6 250.8 135.3 247.5 138.5 243.9 141.9 239.7 144.9 235.4 147.3 231.2 149.8 226.4 151.9 221.8 153.2 217.0 154.6 212.1 156.0 207.4 156.8 202.6 156.6 197.8 157.2 192.3 156.8 187.6 155.9 183.1 154.7 178.1 153.7 173.6 151.8 169.2 150.0 164.6 147.2 160.4 144.8" stroke="#902511" stroke-width="0.55" fill="none" /><path d="M270.7 100.8 269.7 105.8 268.1 110.9 266.2 115.3 264.1 120.0 261.7 124.4 259.0 128.9 255.7 132.4 251.9 136.6 248.7 140.0 244.6 143.0 240.7 146.1 236.3 148.9 231.9 151.0 227.0 153.5 222.7 155.2 217.3 156.1 212.5 157.4 207.7 157.9 202.6 158.2 197.2 158.6 192.5 158.2 187.3 157.4 182.3 156.3 177.7 155.2 172.6 153.0 168.4 151.2 163.9 148.6 159.4 146.0" stroke="#902511" stroke-width="0.55" fill="none" /><path d="M272.6 101.3 271.3 106.7 269.5 111.4 267.8 116.4 265.3 120.7 262.6 125.5 259.7 129.3 256.8 133.6 253.4 137.3 249.7 140.8 245.4 144.4 241.2 147.3 237.2 150.2 232.3 152.3 227.7 154.8 222.8 156.2 218.0 157.9 213.1 159.2 208.0 159.6 202.8 159.9 197.3 159.9 192.5 159.9 187.0 158.8 182.0 157.8 177.1 156.4 172.1 154.7 167.7 152.6 163.2 150.2 158.4 147.5" stroke="#8f2411" stroke-width="0.55" fill="none" /><path d="M274.2 101.6 272.4 106.8 271.1 111.9 269.3 116.8 266.9 121.2 264.1 126.2 260.9 130.2 258.1 134.8 254.1 138.6 250.4 142.3 246.6 145.4 242.1 148.8 237.8 151.6 233.1 153.9 228.6 156.2 223.4 157.9 218.4 159.5 213.4 160.4 208.1 161.3 202.9 161.7 197.6 161.8 192.4 161.3 186.9 160.6 181.9 159.3 176.6 157.7 171.8 156.4 166.8 153.7 162.0 151.4 157.6 149.0" stroke="#8f2411" stroke-width="0.55" fill="none" /><path d="M275.2 101.9 273.9 107.4 272.7 112.2 270.2 117.4 268.2 122.5 265.1 126.6 262.2 131.2 258.9 135.7 255.6 139.4 251.4 143.2 247.3 146.9 243.0 150.0 238.8 152.8 233.7 155.6 229.1 157.4 223.9 159.6 218.7 160.7 213.1 162.2 208.2 162.7 202.7 163.1 197.2 163.4 192.0 162.6 186.3 162.0 181.3 161.0 176.3 159.4 170.9 157.3 166.1 155.2 161.6 152.8 156.9 150.3" stroke="#8f2411" stroke-width="0.55" fill="none" /><path d="M276.8 102.4 275.4 107.9 273.7 113.1 272.1 118.2 269.2 122.8 266.9 127.5 263.7 132.2 260.6 136.6 256.8 140.6 252.8 144.4 248.7 147.8 244.2 151.1 239.4 154.2 234.3 156.9 229.4 158.9 224.1 160.7 219.0 162.5 213.6 163.6 208.0 164.2 202.7 164.9 197.5 164.7 191.5 164.2 186.5 163.3 181.0 162.3 175.4 161.1 170.7 158.8 165.6 156.6 160.6 154.2 155.9 151.1" stroke="#8f2411" stroke-width="0.55" fill="none" /><path d="M278.4 102.8 277.0 107.9 275.5 113.3 273.6 118.7 271.0 123.6 268.3 128.3 264.7 132.9 261.6 137.7 257.5 141.7 253.9 145.7 249.2 149.1 244.7 152.3 240.1 155.2 235.4 158.1 230.1 160.5 225.0 162.5 219.3 163.8 213.9 164.7 208.3 165.9 203.1 166.4 197.3 166.3 191.3 165.7 186.0 165.1 180.3 163.8 175.2 162.5 170.1 160.5 164.6 158.3 160.1 155.5 155.0 152.5" stroke="#8f2411" stroke-width="0.55" fill="none" /><path d="M279.8 103.1 278.9 108.6 277.0 114.2 274.5 119.5 272.3 124.2 269.1 129.2 266.2 134.2 262.6 138.8 258.8 142.8 254.5 147.1 250.1 150.7 245.8 153.9 240.9 156.7 236.1 159.8 230.8 161.9 225.1 164.0 219.7 165.6 214.0 166.6 208.7 167.2 202.9 167.5 196.9 167.6 191.7 167.6 185.9 166.4 180.3 165.5 174.7 163.9 169.5 161.6 164.0 159.5 158.9 156.8 154.3 153.6" stroke="#8e2411" stroke-width="0.55" fill="none" /><path d="M281.5 103.2 280.2 108.9 278.4 114.2 276.2 119.7 273.9 125.2 270.7 130.1 267.5 135.1 264.0 139.7 259.9 144.2 256.0 148.2 251.3 151.6 246.6 155.3 241.7 158.2 236.5 161.2 231.1 163.0 225.9 165.5 220.3 166.9 214.6 168.0 208.8 168.6 202.7 169.3 197.1 169.2 191.0 169.0 185.5 167.9 179.7 166.8 174.1 165.0 169.0 163.6 163.6 161.1 158.3 158.4 153.2 155.2" stroke="#8e2411" stroke-width="0.55" fill="none" /><path d="M283.1 103.9 281.4 109.6 279.6 115.1 277.8 120.2 274.8 125.7 271.9 130.7 268.9 136.1 265.0 140.5 261.1 144.7 256.5 149.3 252.2 152.9 247.7 156.7 242.4 159.3 237.1 162.6 232.0 164.5 226.4 166.7 220.5 168.2 215.0 169.9 208.7 170.5 202.8 171.1 196.8 170.6 191.3 170.3 185.5 169.8 179.6 168.2 173.9 167.0 168.2 164.5 162.6 162.2 157.7 159.3 152.3 156.2" stroke="#8e2411" stroke-width="0.55" fill="none" /><path d="M284.7 104.1 283.0 109.9 281.5 115.6 278.8 121.0 276.6 126.7 273.2 131.9 269.7 137.1 266.2 141.6 262.2 145.8 257.9 150.1 253.1 154.3 248.1 157.5 243.4 160.7 237.8 163.7 232.2 166.4 227.0 167.9 220.9 170.0 214.9 171.4 209.0 171.8 203.1 172.5 196.9 172.5 191.1 172.0 185.0 171.3 179.2 169.9 173.6 168.0 167.8 166.0 162.2 163.5 156.7 161.0 151.8 157.8" stroke="#8e2411" stroke-width="0.55" fill="none" /><path d="M285.9 104.3 284.4 110.3 282.7 115.8 280.5 121.9 277.7 127.5 274.4 132.4 270.9 137.7 267.4 142.5 263.2 147.3 258.6 151.6 254.2 155.4 249.4 158.8 243.8 162.1 238.3 165.0 233.0 167.6 227.1 169.7 221.0 171.6 215.1 172.5 209.0 173.6 203.3 174.1 196.7 173.9 190.7 173.3 185.0 172.4 178.7 171.5 173.1 169.5 167.0 167.7 161.1 164.9 156.2 162.0 150.7 158.8" stroke="#8e2411" stroke-width="0.55" fill="none" /><path d="M287.5 104.4 285.8 111.0 284.3 116.8 281.6 122.3 279.1 127.9 275.9 133.7 272.4 138.5 268.9 143.6 264.1 148.1 260.0 152.3 255.0 156.7 250.3 160.3 245.0 163.5 239.2 166.7 233.5 169.2 227.5 171.1 221.5 172.9 215.3 174.0 209.2 175.0 203.0 175.5 197.2 175.6 190.9 174.9 184.4 173.9 178.5 172.8 172.2 170.9 166.3 168.9 160.7 166.7 155.4 163.4 149.8 160.0" stroke="#8d2310" stroke-width="0.55" fill="none" /><path d="M289.4 104.9 287.7 111.2 285.9 116.9 283.1 123.0 280.2 129.0 277.2 134.4 273.7 139.3 269.7 144.4 265.3 149.1 261.0 153.4 256.0 157.7 251.0 161.3 245.7 164.8 240.1 168.0 233.9 170.3 228.0 172.8 222.0 174.3 216.0 175.6 209.4 176.5 203.0 176.8 196.5 177.1 190.5 176.8 184.5 175.6 178.1 174.6 171.7 172.8 166.0 170.7 160.3 167.7 154.5 164.6 149.0 161.5" stroke="#8d2310" stroke-width="0.55" fill="none" /><path d="M290.4 105.2 289.0 111.5 286.9 117.5 284.6 123.7 281.6 129.6 278.4 134.9 274.9 140.4 270.8 145.6 266.8 150.4 262.1 154.6 257.0 158.9 251.5 162.8 246.1 166.2 240.7 169.3 234.6 171.8 228.3 174.0 222.6 175.9 215.9 177.3 209.5 178.1 203.3 178.9 196.7 178.6 190.6 178.3 184.0 177.3 177.5 175.8 171.2 174.3 165.5 171.8 159.6 169.0 153.5 166.2 148.1 162.7" stroke="#8d2310" stroke-width="0.55" fill="none" /><path d="M292.4 105.4 C292.1 106.4 291.0 109.7 290.4 111.8 C289.7 113.9 289.4 116.0 288.6 118.1 C287.9 120.1 286.7 122.3 285.8 124.3 C284.8 126.3 284.1 128.1 283.1 130.1 C282.1 132.0 281.0 134.1 279.9 136.0 C278.7 137.9 277.5 139.7 276.2 141.4 C275.0 143.2 273.6 145.1 272.2 146.7 C270.8 148.4 269.6 149.8 268.0 151.3 C266.5 152.9 264.6 154.7 262.9 156.2 C261.2 157.7 259.6 159.0 257.9 160.4 C256.2 161.7 254.5 163.0 252.8 164.2 C251.0 165.4 249.3 166.7 247.4 167.8 C245.4 168.9 243.1 169.8 241.1 170.7 C239.1 171.7 237.3 172.6 235.3 173.4 C233.3 174.2 231.1 174.8 229.0 175.5 C227.0 176.1 225.1 176.9 222.9 177.4 C220.8 177.9 218.4 178.3 216.2 178.6 C214.0 179.0 211.9 179.3 209.7 179.5 C207.6 179.7 205.5 179.9 203.3 179.9 C201.1 180.0 198.7 179.9 196.5 179.9 C194.2 179.9 192.1 180.0 189.9 179.8 C187.7 179.6 185.5 179.1 183.4 178.7 C181.3 178.3 179.5 177.9 177.4 177.4 C175.3 176.9 172.8 176.5 170.7 175.8 C168.6 175.1 167.0 173.9 164.9 173.1 C162.9 172.2 160.5 171.6 158.6 170.7 C156.6 169.7 154.9 168.6 153.1 167.5 C151.2 166.4 148.4 164.5 147.5 163.9" stroke="#8d2310" stroke-width="0.55" fill="none" /><path d="M293.8 105.8 C293.5 106.9 292.5 110.4 291.9 112.5 C291.3 114.7 290.9 116.9 290.2 118.9 C289.4 121.0 288.4 122.9 287.5 124.9 C286.6 126.9 285.7 129.0 284.7 131.0 C283.6 133.0 282.6 135.1 281.4 136.9 C280.2 138.8 278.6 140.5 277.2 142.2 C275.9 144.0 274.9 145.7 273.5 147.4 C272.0 149.1 270.2 150.5 268.7 152.2 C267.1 153.9 265.7 155.9 264.1 157.4 C262.5 158.9 261.0 159.9 259.2 161.2 C257.5 162.6 255.5 164.1 253.7 165.3 C251.8 166.6 249.9 167.7 248.0 168.9 C246.1 170.0 244.3 171.3 242.2 172.4 C240.2 173.4 237.7 174.2 235.6 174.9 C233.5 175.6 231.5 176.1 229.4 176.8 C227.3 177.5 225.1 178.5 223.0 179.0 C221.0 179.6 219.1 179.8 216.9 180.1 C214.7 180.4 212.2 180.7 209.9 180.9 C207.6 181.2 205.6 181.6 203.4 181.7 C201.1 181.8 198.8 181.6 196.6 181.6 C194.4 181.5 192.4 181.7 190.2 181.4 C187.9 181.2 185.5 180.6 183.2 180.2 C181.0 179.8 179.0 179.6 176.9 179.1 C174.8 178.5 172.8 177.7 170.7 177.0 C168.6 176.3 166.3 175.7 164.2 174.8 C162.2 173.9 160.3 172.9 158.2 171.8 C156.2 170.8 153.8 169.8 151.9 168.7 C150.0 167.6 147.6 165.8 146.7 165.2" stroke="#8d2310" stroke-width="0.55" fill="none" /><path d="M295.2 106.0 C294.9 107.1 294.0 110.4 293.4 112.5 C292.8 114.7 292.2 116.9 291.5 119.1 C290.7 121.2 289.9 123.3 289.0 125.4 C288.0 127.5 286.8 129.7 285.7 131.7 C284.7 133.7 283.7 135.5 282.4 137.4 C281.2 139.3 279.7 141.1 278.4 142.9 C277.2 144.8 276.2 146.7 274.8 148.4 C273.3 150.2 271.4 151.7 269.7 153.4 C268.1 155.1 266.8 157.0 265.1 158.6 C263.4 160.2 261.5 161.6 259.7 162.9 C257.9 164.2 256.2 165.4 254.4 166.6 C252.6 167.8 250.8 169.1 248.8 170.2 C246.8 171.3 244.4 172.5 242.4 173.5 C240.3 174.5 238.6 175.4 236.5 176.3 C234.5 177.2 232.1 178.1 229.9 178.8 C227.8 179.5 225.9 180.2 223.8 180.7 C221.6 181.2 219.1 181.7 216.9 182.0 C214.6 182.3 212.6 182.4 210.3 182.6 C208.0 182.7 205.4 183.0 203.1 183.0 C200.8 183.1 198.6 183.0 196.4 183.0 C194.1 183.0 192.0 183.1 189.7 182.9 C187.5 182.7 185.3 182.3 183.0 181.8 C180.7 181.4 178.3 180.8 176.2 180.2 C174.0 179.6 172.3 178.9 170.2 178.2 C168.1 177.6 165.7 177.2 163.6 176.4 C161.5 175.6 159.6 174.6 157.5 173.6 C155.5 172.6 153.2 171.6 151.3 170.4 C149.3 169.3 146.7 167.4 145.8 166.8" stroke="#8c2310" stroke-width="0.55" fill="none" /><path d="M297.0 106.3 C296.7 107.5 296.0 111.0 295.3 113.2 C294.6 115.4 293.8 117.5 293.0 119.7 C292.2 121.8 291.5 123.8 290.5 125.9 C289.6 128.0 288.5 130.2 287.3 132.2 C286.2 134.3 285.0 136.3 283.8 138.3 C282.6 140.3 281.4 142.4 280.1 144.3 C278.7 146.2 277.2 147.9 275.6 149.6 C274.1 151.3 272.6 152.9 271.0 154.5 C269.5 156.2 268.1 157.8 266.4 159.4 C264.7 160.9 262.4 162.4 260.6 163.8 C258.8 165.2 257.3 166.5 255.4 167.8 C253.6 169.1 251.6 170.5 249.6 171.6 C247.6 172.8 245.6 173.7 243.4 174.7 C241.3 175.6 239.0 176.6 236.8 177.4 C234.6 178.3 232.7 179.2 230.5 180.0 C228.3 180.7 225.8 181.4 223.6 181.9 C221.4 182.5 219.3 182.8 217.1 183.2 C214.9 183.7 212.7 184.3 210.4 184.6 C208.0 184.9 205.6 185.0 203.3 185.0 C201.0 185.1 198.7 185.0 196.4 184.9 C194.1 184.9 191.7 184.8 189.4 184.6 C187.2 184.4 185.0 184.1 182.8 183.6 C180.5 183.2 178.1 182.5 175.9 181.9 C173.7 181.2 171.8 180.5 169.6 179.8 C167.4 179.1 164.9 178.6 162.8 177.8 C160.7 176.9 159.0 175.8 156.9 174.7 C154.9 173.7 152.4 172.7 150.4 171.5 C148.4 170.4 145.9 168.4 145.0 167.7" stroke="#8c2310" stroke-width="0.55" fill="none" /><path d="M298.3 106.8 C298.0 107.9 297.2 111.2 296.6 113.5 C296.0 115.8 295.2 118.3 294.4 120.6 C293.6 122.8 292.9 124.8 291.9 126.9 C291.0 129.0 289.8 131.1 288.7 133.2 C287.5 135.3 286.1 137.4 284.9 139.4 C283.7 141.4 282.7 143.1 281.3 145.0 C280.0 146.8 278.5 148.7 277.0 150.5 C275.5 152.3 273.8 153.9 272.2 155.6 C270.5 157.3 269.0 159.1 267.2 160.7 C265.5 162.2 263.7 163.4 261.8 164.8 C260.0 166.3 258.1 167.8 256.2 169.2 C254.3 170.6 252.2 171.9 250.3 173.0 C248.3 174.1 246.4 175.0 244.3 176.0 C242.2 177.1 239.8 178.5 237.6 179.4 C235.4 180.3 233.4 180.7 231.2 181.4 C229.0 182.1 226.7 183.1 224.4 183.7 C222.1 184.3 219.7 184.7 217.4 185.1 C215.0 185.5 212.6 186.0 210.3 186.1 C208.0 186.3 205.8 186.1 203.5 186.2 C201.2 186.2 199.0 186.5 196.7 186.4 C194.4 186.4 192.1 186.3 189.8 186.0 C187.4 185.8 185.0 185.4 182.7 184.9 C180.5 184.4 178.3 183.7 176.0 183.2 C173.7 182.6 171.5 182.3 169.2 181.6 C166.9 181.0 164.4 180.2 162.2 179.3 C160.0 178.4 158.0 177.3 156.0 176.3 C153.9 175.2 152.1 173.9 150.0 172.8 C148.0 171.6 144.8 169.9 143.7 169.3" stroke="#8c2310" stroke-width="0.55" fill="none" /><path d="M299.5 107.2 C299.3 108.4 298.8 111.8 298.2 114.1 C297.5 116.4 296.5 118.8 295.6 121.0 C294.8 123.3 294.3 125.5 293.3 127.6 C292.4 129.8 291.2 132.1 290.0 134.1 C288.9 136.1 287.9 137.9 286.6 139.8 C285.4 141.7 283.9 143.7 282.4 145.7 C280.9 147.6 279.3 149.6 277.8 151.4 C276.3 153.3 275.2 155.3 273.6 157.0 C271.9 158.7 269.8 160.0 268.0 161.6 C266.2 163.2 264.5 165.0 262.7 166.5 C260.9 168.1 259.1 169.4 257.1 170.8 C255.1 172.1 252.8 173.4 250.7 174.6 C248.6 175.7 246.6 176.7 244.5 177.7 C242.5 178.7 240.6 179.8 238.4 180.7 C236.2 181.6 233.6 182.4 231.3 183.1 C229.0 183.7 226.9 184.1 224.6 184.6 C222.3 185.2 219.9 185.9 217.6 186.3 C215.3 186.7 213.1 187.0 210.7 187.3 C208.4 187.5 206.0 187.9 203.6 188.0 C201.2 188.1 198.6 187.8 196.3 187.7 C193.9 187.6 191.8 187.6 189.5 187.4 C187.1 187.1 184.4 186.6 182.1 186.2 C179.8 185.8 177.9 185.6 175.6 185.0 C173.3 184.4 170.7 183.5 168.4 182.8 C166.2 182.1 164.3 181.5 162.1 180.6 C159.9 179.8 157.6 178.6 155.4 177.5 C153.3 176.5 151.0 175.4 148.9 174.2 C146.8 173.1 143.8 171.2 142.8 170.6" stroke="#8c2310" stroke-width="0.55" fill="none" /><path d="M301.2 107.7 C300.9 108.8 300.1 112.2 299.4 114.5 C298.8 116.8 298.1 119.4 297.3 121.7 C296.4 124.0 295.5 126.1 294.5 128.2 C293.5 130.4 292.4 132.5 291.2 134.6 C290.1 136.8 288.9 139.0 287.6 141.1 C286.4 143.1 285.0 145.1 283.6 147.0 C282.2 149.0 280.9 150.7 279.4 152.5 C277.9 154.3 276.4 156.1 274.7 157.8 C273.0 159.6 271.2 161.4 269.4 163.0 C267.6 164.6 265.6 165.8 263.7 167.3 C261.8 168.7 259.8 170.2 257.8 171.7 C255.8 173.1 253.8 174.7 251.7 175.9 C249.6 177.2 247.4 178.2 245.2 179.1 C243.1 180.1 241.1 181.0 238.9 181.8 C236.7 182.7 234.2 183.5 231.9 184.2 C229.7 185.0 227.6 185.7 225.3 186.3 C222.9 186.9 220.3 187.4 217.9 187.8 C215.5 188.3 213.4 188.9 211.0 189.1 C208.6 189.4 206.1 189.4 203.7 189.5 C201.2 189.6 198.6 189.8 196.1 189.7 C193.7 189.6 191.3 189.1 188.9 188.9 C186.6 188.6 184.3 188.5 182.0 188.1 C179.6 187.6 177.3 186.9 175.1 186.3 C172.8 185.8 170.6 185.4 168.3 184.7 C165.9 184.0 163.2 183.0 160.9 182.0 C158.7 181.1 156.7 180.0 154.6 178.9 C152.5 177.9 150.3 176.7 148.2 175.5 C146.2 174.3 143.2 172.5 142.2 171.9" stroke="#8c2310" stroke-width="0.55" fill="none" /><path d="M303.0 108.1 C302.7 109.3 302.0 112.6 301.3 114.9 C300.6 117.2 299.8 119.7 298.9 122.0 C298.0 124.4 297.2 126.8 296.1 129.0 C295.0 131.2 293.7 133.2 292.5 135.3 C291.3 137.4 290.3 139.6 289.0 141.8 C287.7 143.9 286.3 146.1 284.8 148.0 C283.4 150.0 281.9 151.6 280.3 153.4 C278.7 155.3 277.0 157.2 275.4 158.9 C273.7 160.6 272.3 162.2 270.4 163.8 C268.6 165.5 266.4 167.3 264.5 168.9 C262.5 170.4 260.8 171.9 258.8 173.2 C256.8 174.6 254.5 175.9 252.4 177.2 C250.3 178.4 248.4 179.5 246.2 180.6 C244.0 181.6 241.5 182.5 239.1 183.4 C236.8 184.3 234.4 185.3 232.2 186.1 C229.9 186.9 228.0 187.6 225.7 188.2 C223.3 188.7 220.4 189.0 218.0 189.4 C215.5 189.8 213.4 190.2 211.0 190.5 C208.6 190.8 205.9 191.1 203.4 191.2 C201.0 191.2 198.7 191.1 196.2 191.0 C193.8 190.9 191.2 190.8 188.8 190.5 C186.3 190.2 183.9 189.7 181.5 189.2 C179.2 188.8 176.9 188.4 174.6 187.8 C172.3 187.2 170.0 186.5 167.7 185.8 C165.4 185.0 162.9 184.0 160.6 183.1 C158.3 182.2 156.0 181.4 153.8 180.4 C151.6 179.4 149.6 178.2 147.5 177.0 C145.5 175.7 142.5 173.5 141.5 172.9" stroke="#8b2210" stroke-width="0.55" fill="none" /><path d="M304.5 108.0 C304.2 109.2 303.5 113.0 302.8 115.4 C302.0 117.8 301.0 120.2 300.1 122.5 C299.3 124.9 298.6 127.4 297.6 129.6 C296.6 131.8 295.3 133.6 294.1 135.8 C292.8 137.9 291.5 140.5 290.2 142.7 C288.9 144.9 287.8 146.8 286.4 148.8 C284.9 150.8 283.1 152.7 281.5 154.5 C279.8 156.4 278.1 158.0 276.4 159.8 C274.7 161.6 273.0 163.8 271.2 165.5 C269.4 167.2 267.7 168.7 265.7 170.2 C263.7 171.7 261.4 173.0 259.3 174.3 C257.2 175.7 255.2 176.9 253.0 178.2 C250.9 179.5 248.7 181.0 246.5 182.1 C244.3 183.2 242.1 183.9 239.8 184.8 C237.6 185.8 235.3 186.8 233.0 187.6 C230.7 188.4 228.5 188.9 226.1 189.5 C223.6 190.1 221.0 190.8 218.5 191.2 C216.0 191.6 213.5 191.7 211.1 191.9 C208.6 192.1 206.3 192.3 203.9 192.4 C201.4 192.5 198.7 192.6 196.2 192.5 C193.7 192.4 191.3 192.2 188.8 191.9 C186.4 191.7 183.9 191.3 181.4 191.0 C179.0 190.6 176.4 190.2 173.9 189.6 C171.5 189.0 169.1 188.2 166.8 187.4 C164.5 186.6 162.4 185.7 160.1 184.8 C157.8 183.8 155.3 182.7 153.1 181.6 C150.9 180.5 148.7 179.4 146.6 178.2 C144.5 177.0 141.4 174.9 140.4 174.2" stroke="#8b2210" stroke-width="0.55" fill="none" /><path d="M305.9 108.5 C305.6 109.7 304.3 113.4 303.7 115.8 C303.0 118.1 302.7 120.3 301.9 122.7 C301.1 125.1 299.9 127.9 298.9 130.3 C297.8 132.6 296.6 134.7 295.4 136.8 C294.2 139.0 292.9 141.1 291.6 143.2 C290.3 145.3 289.0 147.6 287.6 149.6 C286.1 151.7 284.4 153.6 282.7 155.5 C281.1 157.5 279.6 159.5 277.8 161.3 C276.0 163.0 274.0 164.5 272.1 166.1 C270.2 167.8 268.3 169.5 266.4 171.1 C264.5 172.7 262.7 174.2 260.7 175.6 C258.6 177.0 256.5 178.3 254.3 179.6 C252.1 180.9 249.6 182.2 247.3 183.3 C244.9 184.5 242.5 185.7 240.3 186.6 C238.0 187.5 236.0 188.0 233.6 188.8 C231.3 189.5 228.5 190.5 226.1 191.1 C223.6 191.8 221.5 192.2 219.0 192.6 C216.5 193.0 213.6 193.5 211.0 193.7 C208.5 194.0 206.0 194.1 203.5 194.2 C201.0 194.3 198.7 194.5 196.3 194.3 C193.8 194.2 191.2 193.6 188.8 193.3 C186.3 193.0 184.0 193.1 181.5 192.7 C179.0 192.2 176.3 191.3 173.9 190.6 C171.4 190.0 169.1 189.5 166.7 188.8 C164.3 188.1 161.9 187.5 159.6 186.6 C157.3 185.6 155.1 184.1 152.8 182.9 C150.6 181.8 148.3 180.9 146.1 179.6 C143.9 178.4 140.7 176.3 139.7 175.6" stroke="#8b2210" stroke-width="0.55" fill="none" /><path d="M307.3 108.8 C306.9 110.0 305.9 113.7 305.2 116.1 C304.5 118.5 304.1 120.8 303.2 123.3 C302.4 125.7 301.0 128.4 300.0 130.8 C298.9 133.2 298.2 135.3 297.0 137.5 C295.8 139.7 294.2 141.7 292.8 143.9 C291.4 146.1 290.1 148.6 288.6 150.8 C287.2 152.9 285.7 154.9 284.1 156.8 C282.4 158.7 280.5 160.3 278.7 162.2 C277.0 164.0 275.3 166.0 273.4 167.7 C271.5 169.5 269.3 171.2 267.3 172.7 C265.3 174.2 263.4 175.3 261.3 176.7 C259.2 178.0 257.0 179.6 254.8 180.9 C252.6 182.3 250.5 183.7 248.2 184.9 C245.9 186.0 243.5 186.9 241.1 187.8 C238.7 188.8 236.3 189.7 233.8 190.5 C231.4 191.3 228.8 192.0 226.3 192.6 C223.8 193.2 221.4 193.7 218.8 194.1 C216.3 194.5 213.8 194.8 211.3 195.0 C208.8 195.2 206.1 195.4 203.6 195.5 C201.1 195.6 198.8 195.7 196.2 195.6 C193.7 195.6 191.0 195.4 188.5 195.1 C186.0 194.9 183.6 194.4 181.2 193.9 C178.7 193.5 176.0 193.0 173.5 192.4 C171.1 191.8 168.8 191.0 166.4 190.2 C164.0 189.4 161.5 188.5 159.0 187.6 C156.6 186.6 154.1 185.9 151.8 184.7 C149.5 183.6 147.4 182.1 145.2 180.9 C143.0 179.6 139.5 177.8 138.4 177.1" stroke="#8b2210" stroke-width="0.55" fill="none" /><path d="M308.7 109.3 C308.4 110.5 307.6 114.2 306.9 116.7 C306.2 119.2 305.4 121.9 304.6 124.3 C303.7 126.7 302.9 128.9 301.9 131.2 C300.8 133.5 299.5 135.8 298.2 138.1 C297.0 140.3 295.9 142.5 294.5 144.7 C293.1 147.0 291.5 149.4 289.9 151.6 C288.3 153.8 286.6 155.7 284.9 157.6 C283.3 159.6 281.8 161.5 280.1 163.3 C278.3 165.1 276.2 166.7 274.3 168.5 C272.5 170.2 270.8 172.2 268.8 173.8 C266.8 175.4 264.6 176.6 262.4 178.0 C260.2 179.4 258.1 180.8 255.8 182.2 C253.5 183.5 250.9 184.9 248.6 186.0 C246.2 187.1 244.1 187.9 241.7 188.9 C239.4 189.9 237.0 191.0 234.5 191.9 C232.1 192.7 229.7 193.6 227.2 194.2 C224.6 194.8 222.0 195.0 219.4 195.5 C216.9 195.9 214.5 196.5 211.9 196.8 C209.3 197.1 206.4 197.4 203.8 197.4 C201.1 197.4 198.8 197.2 196.3 197.0 C193.7 196.9 190.8 196.6 188.2 196.4 C185.6 196.1 183.2 195.8 180.7 195.4 C178.2 195.0 175.5 194.4 173.0 193.8 C170.4 193.2 167.9 192.6 165.4 191.8 C162.9 191.0 160.6 190.0 158.2 189.0 C155.8 188.1 153.4 187.1 151.1 186.0 C148.8 184.8 146.8 183.4 144.6 182.1 C142.4 180.9 139.1 179.1 138.0 178.4" stroke="#8b2210" stroke-width="0.55" fill="none" /><path d="M310.4 109.5 C310.1 110.8 309.3 114.6 308.6 117.1 C307.9 119.7 307.0 122.4 306.1 124.8 C305.2 127.3 304.3 129.3 303.2 131.7 C302.1 134.1 300.6 136.8 299.3 139.2 C298.1 141.6 296.9 143.8 295.6 145.9 C294.2 148.1 292.6 150.2 291.1 152.3 C289.6 154.4 287.9 156.6 286.3 158.6 C284.7 160.7 283.2 162.5 281.4 164.4 C279.6 166.2 277.5 167.9 275.5 169.7 C273.5 171.5 271.4 173.5 269.3 175.2 C267.2 176.8 265.0 178.4 262.8 179.8 C260.7 181.2 258.7 182.2 256.5 183.4 C254.3 184.7 252.1 186.0 249.7 187.1 C247.3 188.3 244.7 189.4 242.3 190.4 C239.9 191.4 237.6 192.4 235.2 193.2 C232.7 194.0 230.1 194.6 227.5 195.2 C224.9 195.8 222.4 196.3 219.7 196.8 C217.0 197.3 214.1 197.9 211.5 198.2 C208.9 198.6 206.8 198.7 204.2 198.8 C201.7 199.0 198.9 199.1 196.3 198.9 C193.6 198.7 190.9 198.3 188.2 197.9 C185.6 197.6 183.0 197.3 180.4 196.9 C177.8 196.5 175.3 196.0 172.7 195.4 C170.2 194.7 167.6 193.9 165.1 193.1 C162.7 192.3 160.3 191.5 157.9 190.5 C155.4 189.5 152.9 188.3 150.5 187.1 C148.2 186.0 145.8 185.0 143.6 183.7 C141.4 182.5 138.3 180.2 137.2 179.6" stroke="#8a2210" stroke-width="0.55" fill="none" /><path d="M311.6 109.7 C311.3 111.0 310.5 115.0 309.8 117.6 C309.2 120.3 308.6 122.9 307.7 125.4 C306.9 127.9 305.8 130.3 304.7 132.8 C303.6 135.2 302.5 137.6 301.2 139.9 C299.8 142.2 298.1 144.4 296.7 146.6 C295.3 148.8 294.1 151.2 292.6 153.3 C291.1 155.5 289.3 157.6 287.7 159.6 C286.0 161.5 284.4 163.2 282.5 165.2 C280.7 167.1 278.6 169.5 276.5 171.3 C274.5 173.0 272.2 174.2 270.1 175.9 C268.1 177.5 266.4 179.6 264.2 181.1 C262.0 182.6 259.2 183.4 256.9 184.7 C254.6 186.1 252.7 187.7 250.3 188.9 C248.0 190.1 245.3 191.1 242.8 192.1 C240.4 193.1 238.1 194.2 235.5 194.9 C232.9 195.7 229.9 196.0 227.4 196.7 C224.8 197.4 222.6 198.4 220.0 198.9 C217.5 199.4 214.8 199.5 212.2 199.7 C209.5 199.9 206.6 200.1 203.9 200.2 C201.2 200.3 198.4 200.5 195.7 200.4 C193.1 200.4 190.5 200.1 187.9 199.8 C185.3 199.5 182.7 199.0 180.2 198.5 C177.6 198.0 175.1 197.5 172.4 196.9 C169.8 196.3 167.1 195.8 164.5 195.0 C161.9 194.1 159.4 192.8 157.0 191.8 C154.5 190.8 152.1 189.9 149.7 188.8 C147.4 187.6 145.3 186.2 143.0 184.9 C140.7 183.6 137.1 181.6 135.9 180.9" stroke="#8a2210" stroke-width="0.55" fill="none" /><path d="M313.2 110.1 C312.9 111.5 312.0 115.6 311.3 118.2 C310.5 120.7 309.6 123.0 308.7 125.5 C307.8 128.0 306.8 130.5 305.8 133.0 C304.7 135.5 303.7 138.1 302.5 140.5 C301.3 142.9 300.0 145.1 298.5 147.4 C297.0 149.7 295.2 152.1 293.5 154.3 C291.9 156.4 290.3 158.2 288.6 160.3 C286.9 162.4 285.2 164.9 283.3 166.8 C281.5 168.8 279.4 170.2 277.5 172.0 C275.5 173.8 273.7 176.0 271.6 177.6 C269.5 179.3 267.0 180.4 264.7 181.9 C262.5 183.4 260.5 185.1 258.1 186.5 C255.8 188.0 253.2 189.2 250.7 190.3 C248.2 191.5 245.8 192.3 243.3 193.3 C240.9 194.3 238.4 195.5 235.9 196.4 C233.3 197.3 230.7 198.0 228.0 198.6 C225.4 199.3 222.5 199.7 219.8 200.1 C217.2 200.5 214.6 200.8 212.0 201.0 C209.5 201.3 207.0 201.4 204.3 201.6 C201.6 201.8 198.5 202.1 195.8 202.1 C193.1 202.0 190.8 201.8 188.2 201.5 C185.5 201.2 182.5 200.9 179.8 200.4 C177.0 199.9 174.3 199.3 171.7 198.6 C169.2 197.9 167.0 196.9 164.5 196.0 C161.9 195.2 158.9 194.5 156.4 193.6 C153.9 192.6 151.8 191.5 149.4 190.3 C147.1 189.1 144.7 187.8 142.3 186.3 C139.9 184.9 136.3 182.6 135.1 181.9" stroke="#8a2210" stroke-width="0.55" fill="none" /><path d="M314.7 110.7 C314.4 111.9 313.4 115.6 312.6 118.2 C311.9 120.7 311.2 123.3 310.3 125.9 C309.4 128.5 308.3 131.0 307.2 133.6 C306.0 136.1 304.7 138.7 303.5 141.2 C302.2 143.6 301.0 146.0 299.6 148.3 C298.2 150.6 296.7 152.9 295.2 155.1 C293.6 157.2 292.0 159.2 290.2 161.2 C288.4 163.3 286.3 165.3 284.3 167.3 C282.4 169.4 280.4 171.6 278.5 173.4 C276.5 175.3 274.7 176.9 272.6 178.6 C270.4 180.2 267.8 181.8 265.5 183.3 C263.2 184.8 261.1 186.2 258.8 187.6 C256.5 189.0 254.1 190.6 251.7 191.8 C249.2 193.1 246.5 194.0 244.0 195.0 C241.4 195.9 239.1 196.8 236.5 197.7 C233.9 198.6 230.9 199.6 228.2 200.2 C225.6 200.8 223.3 201.0 220.7 201.4 C218.0 201.8 215.2 202.4 212.4 202.7 C209.6 203.0 206.6 203.0 203.8 203.2 C201.0 203.3 198.4 203.6 195.7 203.5 C193.0 203.4 190.3 202.8 187.6 202.5 C184.8 202.2 182.1 202.3 179.4 201.8 C176.8 201.4 174.2 200.8 171.6 200.1 C169.0 199.3 166.3 198.4 163.7 197.5 C161.0 196.6 158.3 195.8 155.7 194.8 C153.1 193.8 150.6 192.6 148.2 191.4 C145.8 190.2 143.7 189.0 141.3 187.6 C139.0 186.3 135.5 184.1 134.3 183.4" stroke="#8a2210" stroke-width="0.55" fill="none" /><path d="M316.3 110.7 C316.0 112.0 315.4 116.2 314.6 118.8 C313.9 121.5 312.8 124.1 311.8 126.7 C310.8 129.3 309.8 131.8 308.7 134.3 C307.6 136.8 306.6 139.2 305.3 141.7 C304.1 144.2 302.6 146.9 301.2 149.3 C299.7 151.6 298.2 153.5 296.5 155.7 C294.8 158.0 293.0 160.7 291.2 162.8 C289.3 164.9 287.4 166.6 285.5 168.5 C283.6 170.4 281.8 172.4 279.8 174.3 C277.7 176.1 275.5 177.9 273.3 179.6 C271.2 181.3 269.2 182.9 266.8 184.5 C264.5 186.1 261.7 187.8 259.3 189.2 C256.8 190.6 254.5 191.8 252.1 193.0 C249.6 194.2 247.1 195.6 244.6 196.6 C242.0 197.6 239.5 198.3 236.8 199.1 C234.1 199.9 231.2 200.8 228.5 201.5 C225.8 202.2 223.2 202.8 220.5 203.2 C217.9 203.7 215.3 204.0 212.5 204.3 C209.7 204.6 206.7 204.8 203.9 204.9 C201.1 205.0 198.5 205.1 195.8 205.0 C193.2 204.9 190.6 204.6 187.8 204.2 C185.1 203.9 182.0 203.4 179.3 202.9 C176.6 202.5 174.0 201.9 171.4 201.3 C168.7 200.7 166.1 200.1 163.4 199.4 C160.7 198.6 157.9 197.7 155.3 196.6 C152.7 195.5 150.3 194.1 147.8 192.9 C145.4 191.7 142.9 190.7 140.5 189.3 C138.1 187.9 134.6 185.4 133.4 184.6" stroke="#8a2210" stroke-width="0.55" fill="none" /><path d="M317.8 111.3 C317.5 112.6 316.7 116.5 315.9 119.1 C315.1 121.8 314.0 124.4 313.1 127.1 C312.2 129.7 311.4 132.6 310.3 135.2 C309.3 137.8 308.1 140.4 306.7 142.8 C305.4 145.3 303.9 147.7 302.3 150.1 C300.8 152.4 299.3 154.8 297.7 157.0 C296.0 159.2 294.3 161.2 292.5 163.3 C290.7 165.4 288.9 167.5 286.9 169.6 C284.9 171.7 282.7 173.9 280.5 175.8 C278.3 177.7 276.1 179.3 273.9 181.0 C271.7 182.7 269.6 184.5 267.3 186.1 C265.1 187.7 262.7 189.3 260.3 190.6 C258.0 192.0 255.7 193.2 253.1 194.4 C250.5 195.6 247.6 196.8 244.9 197.9 C242.2 199.0 239.6 200.1 237.0 200.9 C234.4 201.8 232.1 202.2 229.4 202.9 C226.7 203.5 223.5 204.3 220.7 204.8 C218.0 205.4 215.5 205.9 212.8 206.2 C210.0 206.4 207.1 206.2 204.3 206.3 C201.5 206.3 198.7 206.2 195.9 206.2 C193.2 206.2 190.4 206.3 187.6 206.1 C184.8 205.8 182.0 205.4 179.2 204.9 C176.4 204.5 173.6 204.0 170.9 203.2 C168.1 202.5 165.5 201.6 162.8 200.6 C160.1 199.7 157.4 198.8 154.8 197.7 C152.1 196.6 149.3 195.4 146.9 194.1 C144.4 192.9 142.3 191.6 139.9 190.2 C137.5 188.9 133.9 186.8 132.7 186.1" stroke="#8a2210" stroke-width="0.55" fill="none" /><path d="M192.2 160.0 192.1 162.8 192.2 166.1 192.9 169.4 192.9 172.3 194.1 175.3 194.9 179.1 195.6 182.7 195.9 185.8 197.4 189.3 198.3 193.0 200.0 196.0" stroke="#b83416" stroke-width="0.8" fill="none" /></g><ellipse cx="204.8" cy="183.5" rx="3.6" ry="7.8" transform="rotate(-20 204.8 183.5)" stroke="#8a2810" stroke-width="0.6" fill="none"/><ellipse cx="204.8" cy="183.5" rx="2.6" ry="5.8" transform="rotate(-20 204.8 183.5)" stroke="#a83416" stroke-width="0.7" fill="none"/><ellipse cx="204.8" cy="183.5" rx="1.8" ry="3.8" transform="rotate(-20 204.8 183.5)" stroke="#d05020" stroke-width="0.9" fill="none"/><ellipse cx="204.8" cy="183.5" rx="1.3" ry="3" transform="rotate(-20 204.8 183.5)" fill="#050505"/><path d="M190.0 210.0 C190.5 209.6 192.1 208.3 193.0 207.7 C193.8 207.1 194.2 206.7 195.0 206.1 C195.8 205.4 196.6 204.6 197.7 203.8 C198.8 203.0 200.1 202.1 201.5 201.5 C202.8 200.8 204.3 200.6 205.8 200.0 C207.3 199.5 209.2 198.8 210.5 198.2 C211.9 197.5 213.4 196.4 214.0 196.0" stroke="#7a3418" stroke-width="0.55" fill="none" /><path d="M189.9 217.9 C190.3 217.6 191.4 216.7 192.3 216.0 C193.3 215.2 195.0 214.2 195.9 213.5 C196.8 212.9 196.8 212.8 197.9 212.2 C199.0 211.6 200.9 210.7 202.3 210.1 C203.7 209.4 204.8 209.3 206.2 208.5 C207.5 207.8 209.2 206.5 210.5 205.7 C211.8 204.9 213.4 204.3 214.0 204.0" stroke="#7a4a28" stroke-width="0.55" fill="none" /><path d="M190.0 226.6 C190.5 226.1 191.8 224.5 192.7 223.6 C193.6 222.8 194.8 222.1 195.7 221.5 C196.5 220.9 196.6 220.6 197.6 220.1 C198.6 219.5 200.3 219.0 201.7 218.3 C203.2 217.6 204.8 216.5 206.3 215.8 C207.7 215.1 209.0 214.8 210.3 214.2 C211.6 213.5 213.4 212.4 214.0 212.0" stroke="#8a6a48" stroke-width="0.55" fill="none" /><path d="M190.2 233.9 C190.6 233.5 191.7 232.1 192.6 231.5 C193.4 231.0 194.3 231.2 195.3 230.5 C196.3 229.9 197.4 228.3 198.5 227.5 C199.5 226.7 200.2 226.3 201.5 225.7 C202.8 225.1 204.9 224.6 206.2 223.9 C207.6 223.3 208.3 222.6 209.6 221.9 C210.8 221.3 213.3 220.3 214.0 220.0" stroke="#8a7050" stroke-width="0.55" fill="none" /><path d="M259 132 L268 137 L266 146 L257 141Z" stroke="#8a2210" stroke-width="0.7" fill="none"/><path d="M255 125 L272 135 L270 152 L252 142Z" stroke="#6a1a0a" stroke-width="0.6" fill="none"/><path d="M220.5 139.5 241.0 176.0" stroke="#c8c8c8" stroke-width="2.2" fill="none" /><path d="M220.5 139.5 241.0 176.0" stroke="#1a0a06" stroke-width="1.0" fill="none" /><path d="M220.5 139.5 241.0 176.0" stroke="#d8d8d8" stroke-width="1.0" fill="none" stroke-dasharray="0.7 0.9"/><path d="M248.0 167.0 252.5 179.0" stroke="#b0b0b0" stroke-width="2.0" fill="none" /><path d="M262.9 102.8 C263.7 102.6 266.2 101.8 268.0 101.3 C269.7 100.8 271.9 100.4 273.5 99.9 C275.1 99.4 276.1 99.1 277.5 98.5 C279.0 97.9 280.9 97.5 282.3 96.4 C283.7 95.3 285.4 92.8 286.0 92.1" stroke="#a02a14" stroke-width="0.55" fill="none" /><path d="M253.5 111.5 C254.3 111.3 256.6 111.0 258.4 110.7 C260.1 110.3 262.3 109.4 264.0 109.2 C265.7 109.1 267.1 109.6 268.5 109.6 C269.8 109.6 270.8 109.2 272.1 109.1 C273.3 109.0 274.7 109.3 276.0 109.1 C277.3 109.0 278.5 108.7 279.9 108.2 C281.2 107.8 282.6 107.2 284.0 106.4 C285.5 105.7 287.3 105.3 288.4 103.7 C289.5 102.1 290.3 98.0 290.7 96.8" stroke="#a02a14" stroke-width="0.55" fill="none" /><path d="M259.2 119.2 C260.0 119.1 262.1 118.7 263.7 118.4 C265.4 118.1 267.2 117.6 268.8 117.3 C270.4 117.0 271.5 116.8 273.2 116.5 C274.9 116.3 277.1 116.0 279.1 115.8 C281.0 115.6 283.3 115.7 285.0 115.3 C286.7 114.9 287.8 114.1 289.4 113.3 C290.9 112.5 293.1 111.8 294.2 110.7 C295.2 109.6 295.3 108.0 295.7 106.6 C296.1 105.3 296.4 103.3 296.5 102.6" stroke="#a42c14" stroke-width="0.55" fill="none" /><path d="M263.9 125.1 269.1 124.6 273.2 124.1 278.1 123.3 282.4 123.5 286.6 122.9 290.6 122.5 295.1 119.7 300.0 117.0 301.0 112.1 302.3 107.3" stroke="#a42c14" stroke-width="0.55" fill="none" /><path d="M261.6 133.9 C262.6 133.8 265.9 133.4 267.9 133.2 C269.9 133.0 271.5 132.6 273.4 132.5 C275.3 132.5 277.1 132.8 279.0 132.7 C280.9 132.6 282.7 132.3 284.6 132.1 C286.5 131.8 288.3 131.4 290.3 131.2 C292.3 131.0 295.2 131.3 296.8 130.8 C298.4 130.3 298.8 129.0 299.9 128.2 C301.1 127.5 302.5 126.8 303.7 126.1 C304.9 125.3 306.3 125.1 307.2 123.6 C308.2 122.0 309.0 117.8 309.3 116.6" stroke="#a82e16" stroke-width="0.55" fill="none" /><path d="M261.8 143.2 266.6 142.4 271.5 141.3 275.9 140.8 280.4 141.0 284.7 140.3 289.5 139.8 295.1 138.8 301.6 137.6 304.9 136.2 308.9 134.0 312.9 132.8 314.6 128.0 316.4 122.8 314.0 121.2" stroke="#a82e16" stroke-width="0.55" fill="none" /><path d="M313.9 121.4 C314.3 121.9 315.5 123.4 316.5 124.5 C317.5 125.7 319.0 127.0 320.0 128.4 C321.0 129.7 321.7 131.2 322.4 132.7 C323.1 134.2 323.5 135.4 324.2 137.4 C324.9 139.3 326.3 143.3 326.7 144.5" stroke="#b03418" stroke-width="0.55" fill="none" /><path d="M262.0 150.6 266.4 150.5 270.8 149.5 275.9 149.4 281.2 148.2 286.9 147.6 291.5 147.3 295.1 146.2 299.6 145.0 303.8 144.8 307.1 143.5 311.3 142.0 315.3 140.7 319.7 139.1 324.4 137.5" stroke="#a02a14" stroke-width="0.55" fill="none" /><path d="M261.9 160.3 266.6 159.6 271.5 158.7 275.4 158.5 279.9 158.5 284.7 157.6 289.4 157.6 293.9 156.6 297.4 155.4 301.9 154.4 306.1 154.1 310.2 152.1 314.9 150.8 319.4 149.2 322.9 147.1 326.7 144.6 329.0 142.0" stroke="#a02a14" stroke-width="0.55" fill="none" /><path d="M257.6 167.6 262.2 167.6 266.8 166.6 270.6 165.0 274.6 165.3 278.8 164.6 283.3 164.7 287.0 164.2 291.7 164.0 296.4 163.5 300.9 163.1 305.6 162.6 309.7 161.9 313.7 160.4 318.3 159.5 322.0 158.2 326.4 155.1 330.3 151.5 330.4 146.7 330.2 142.0" stroke="#9a2a14" stroke-width="0.55" fill="none" /><path d="M279.9 173.9 284.1 173.8 288.3 173.8 292.6 174.0 296.3 173.1 300.4 172.8 304.9 173.0 308.5 172.3 313.1 172.6 317.6 171.7 322.3 170.7 326.6 170.0 330.5 165.8 334.1 161.0 332.4 155.8 332.4 151.4 331.1 146.5 330.2 142.0" stroke="#9a3018" stroke-width="0.55" fill="none" /><path d="M338.7 151.4 C339.1 152.0 340.4 153.7 341.1 154.9 C341.9 156.1 342.8 157.4 343.4 158.7 C344.1 160.0 344.3 161.1 345.0 162.9 C345.7 164.7 347.5 167.7 347.8 169.6 C348.1 171.6 347.2 173.0 346.9 174.4 C346.6 175.8 346.2 177.4 346.0 178.0" stroke="#b09070" stroke-width="0.55" fill="none" /><path d="M341.8 154.0 C342.2 154.7 343.6 156.5 344.3 157.7 C345.0 159.0 345.4 160.2 346.2 161.5 C347.0 162.8 348.7 164.1 349.2 165.6 C349.6 167.0 348.8 168.5 348.8 170.0 C348.9 171.5 349.3 173.0 349.4 174.6 C349.6 176.1 349.7 177.9 349.8 179.5 C349.9 181.0 350.0 183.2 350.0 184.0" stroke="#b8a080" stroke-width="0.55" fill="none" /><path d="M289.6 171.7 C290.4 171.7 293.2 171.4 294.7 171.3 C296.3 171.3 297.3 171.5 298.8 171.4 C300.3 171.4 302.0 171.4 303.7 171.2 C305.3 171.0 306.9 170.3 308.5 170.0 C310.0 169.8 311.9 169.0 313.1 169.8 C314.4 170.5 315.1 173.1 316.1 174.5 C317.0 175.9 318.0 176.7 318.8 178.1 C319.6 179.6 319.4 182.5 321.0 183.1 C322.5 183.6 326.4 182.1 328.1 181.3 C329.8 180.5 330.0 179.1 331.1 178.2 C332.2 177.3 333.5 176.8 334.6 175.8 C335.7 174.8 336.9 173.4 337.5 172.1 C338.2 170.8 338.2 169.2 338.4 167.9 C338.6 166.6 338.6 165.5 338.7 164.2 C338.8 162.9 338.9 160.7 339.0 160.0" stroke="#8a4020" stroke-width="0.55" fill="none" /><path d="M323.0 188.2 325.5 191.4 328.6 194.2 331.3 197.0 334.0 200.6 338.5 199.4 343.9 199.2 347.8 195.9 352.6 193.1 354.3 188.8 355.6 184.1 356.4 179.2 355.1 174.5 353.0 169.8 352.0 165.0" stroke="#a07050" stroke-width="0.55" fill="none" /><path d="M342.2 208.4 347.1 206.8 353.2 205.9 356.1 202.8 359.9 200.6 361.8 196.1 364.4 192.2 363.0 187.5 361.2 183.7 359.6 179.6 356.6 174.4 354.0 170.0" stroke="#b08868" stroke-width="0.55" fill="none" /><path d="M345.8 220.3 349.8 218.7 353.8 217.1 357.0 215.6 360.2 211.5 363.2 207.9 367.0 204.8 368.3 199.9 370.9 195.7 373.0 190.6 370.0 186.3 368.0 182.0" stroke="#c0a888" stroke-width="0.55" fill="none" /><path d="M352.5 227.7 357.2 227.4 361.8 226.2 366.7 225.7 368.7 222.4 371.4 218.7 373.7 215.0 376.1 211.6 377.1 207.4 378.7 203.8 376.6 199.9 375.0 196.0" stroke="#c8b898" stroke-width="0.55" fill="none" /><path d="M360.2 239.5 C360.9 239.4 362.9 239.4 364.3 239.2 C365.8 239.0 367.3 238.8 369.0 238.4 C370.6 238.0 372.9 238.0 374.1 237.0 C375.2 236.0 375.1 234.0 375.8 232.6 C376.6 231.1 377.8 229.8 378.6 228.4 C379.4 226.9 380.4 225.6 380.9 223.9 C381.3 222.2 380.9 220.1 381.2 218.4 C381.5 216.7 382.2 215.3 382.6 213.7 C382.9 212.0 382.9 209.3 383.0 208.4" stroke="#a8b888" stroke-width="0.55" fill="none" /><path d="M271.8 100.4 L272.3 99.6 L273.7 99.6 L274.2 100.4" stroke="#c8c8c8" stroke-width="0.55" fill="none"/><path d="M279.8 108.4 L280.3 107.6 L281.7 107.6 L282.2 108.4" stroke="#c8c8c8" stroke-width="0.55" fill="none"/><path d="M284.8 116.4 L285.3 115.6 L286.7 115.6 L287.2 116.4" stroke="#c8c8c8" stroke-width="0.55" fill="none"/><path d="M290.8 122.9 L291.3 122.1 L292.7 122.1 L293.2 122.9" stroke="#c8c8c8" stroke-width="0.55" fill="none"/><path d="M295.8 130.4 L296.3 129.6 L297.7 129.6 L298.2 130.4" stroke="#c8c8c8" stroke-width="0.55" fill="none"/><path d="M301.8 137.4 L302.3 136.6 L303.7 136.6 L304.2 137.4" stroke="#c8c8c8" stroke-width="0.55" fill="none"/><path d="M305.8 146.4 L306.3 145.6 L307.7 145.6 L308.2 146.4" stroke="#c8c8c8" stroke-width="0.55" fill="none"/><path d="M311.8 154.4 L312.3 153.6 L313.7 153.6 L314.2 154.4" stroke="#c8c8c8" stroke-width="0.55" fill="none"/><path d="M316.8 160.4 L317.3 159.6 L318.7 159.6 L319.2 160.4" stroke="#c8c8c8" stroke-width="0.55" fill="none"/><path d="M331.8 181.4 L332.3 180.6 L333.7 180.6 L334.2 181.4" stroke="#c8c8c8" stroke-width="0.55" fill="none"/><path d="M347.8 197.4 L348.3 196.6 L349.7 196.6 L350.2 197.4" stroke="#c8c8c8" stroke-width="0.55" fill="none"/><path d="M355.8 207.4 L356.3 206.6 L357.7 206.6 L358.2 207.4" stroke="#c8c8c8" stroke-width="0.55" fill="none"/><path d="M361.8 215.4 L362.3 214.6 L363.7 214.6 L364.2 215.4" stroke="#c8c8c8" stroke-width="0.55" fill="none"/><path d="M367.8 225.4 L368.3 224.6 L369.7 224.6 L370.2 225.4" stroke="#c8c8c8" stroke-width="0.55" fill="none"/><path d="M361.6 249.5 366.3 248.8 370.1 248.0 374.8 247.7 378.5 247.1 382.4 244.7 385.5 242.5 388.5 239.6 392.4 237.0 393.2 232.3 393.6 227.8 389.8 223.5 386.2 218.7 391.0 218.1 394.5 216.4 396.0 220.8 397.3 225.5 401.7 230.3 405.8 228.8 408.0 233.4 410.5 238.3 413.1 241.6 412.2 246.4 411.0 251.4" stroke="#5a9a50" stroke-width="0.7" fill="none" /><path d="M374.4 254.2 C375.2 254.0 377.9 253.5 379.4 252.9 C381.0 252.3 382.2 251.3 383.7 250.7 C385.1 250.1 387.1 250.1 388.3 249.1 C389.5 248.1 390.2 246.1 390.9 244.6 C391.7 243.1 392.7 240.8 393.0 240.0" stroke="#4a8a40" stroke-width="0.7" fill="none" /><path d="M351.2 265.3 356.0 264.3 360.2 262.1 364.8 261.2 369.7 261.0 374.6 261.1 379.2 260.6 383.3 258.8 387.9 258.3 393.3 257.6 397.7 256.6 402.2 254.7 407.1 253.5 411.4 252.4 416.0 251.2 421.0 250.5" stroke="#4a8a48" stroke-width="0.7" fill="none" /><path d="M339.5 276.6 343.4 275.9 347.0 273.7 351.2 272.8 356.1 271.1 360.4 269.9 365.2 268.5 369.5 265.9 374.5 263.3 375.7 267.9 377.8 272.7 376.8 277.2 375.2 281.5 374.5 286.7 378.8 285.3 381.9 283.4 386.0 282.2 389.6 280.5 393.5 278.1 397.2 276.2 401.5 274.0 404.6 272.2 407.6 269.2 409.8 266.3 413.0 263.6 415.5 260.0 418.2 257.5 421.0 254.0" stroke="#4a8a58" stroke-width="0.7" fill="none" /><path d="M334.7 320.9 339.2 318.2 342.3 314.8 346.9 312.2 349.2 309.1 352.4 305.8 355.9 302.4 359.7 300.3 362.4 298.4 365.9 295.4 370.0 293.5 374.8 291.5 378.8 288.4 383.8 286.5 388.2 285.4 392.7 283.6 397.3 282.3 402.0 278.9 405.3 275.9 409.7 272.9 411.2 268.9 413.6 265.2 416.8 261.8 418.4 257.8 421.0 254.0" stroke="#3a7a90" stroke-width="0.7" fill="none" /><path d="M341.7 318.7 346.7 317.0 350.8 314.3 355.0 313.2 358.5 311.2 361.9 309.9 366.4 308.8 369.9 307.3 373.8 305.9 378.6 305.2 382.0 304.1 386.6 302.9 391.0 301.7 396.9 302.7 402.2 302.9 405.7 299.2 409.2 295.9 410.6 291.7 412.4 288.2 413.7 284.3 414.8 280.1 416.1 275.9 417.3 272.4 419.5 268.0 420.4 263.8 421.5 260.4 423.3 256.3" stroke="#3060a8" stroke-width="0.7" fill="none" /><path d="M307.4 323.3 311.4 325.5 316.1 327.2 320.9 328.4 324.6 329.7 328.7 331.2 332.8 332.5 337.3 332.7 341.6 331.5 346.0 330.9 351.3 330.8 354.8 329.1 359.7 327.4 363.4 326.0 368.0 325.0 372.3 323.4 376.7 321.4" stroke="#283e90" stroke-width="0.7" fill="none" /><path d="M421.4 251.7 C421.4 252.4 421.4 254.8 421.6 256.2 C421.8 257.7 422.3 259.0 422.6 260.3 C422.9 261.6 423.2 262.8 423.6 264.2 C424.0 265.6 424.4 267.0 424.9 268.6 C425.4 270.1 426.1 271.7 426.5 273.3 C426.9 274.9 427.1 276.6 427.4 278.0 C427.6 279.5 427.9 281.3 428.0 281.9" stroke="#3050b0" stroke-width="0.7" fill="none" /><path d="M423.6 254.1 C423.9 254.8 424.8 256.8 425.6 258.0 C426.4 259.2 427.4 259.9 428.1 261.1 C428.9 262.3 429.6 263.7 430.4 265.1 C431.1 266.4 431.9 267.8 432.7 269.1 C433.5 270.3 434.6 272.0 435.0 272.6" stroke="#3060b8" stroke-width="0.7" fill="none" /><path d="M420.2 251.5 C420.6 252.3 422.1 254.9 422.8 256.4 C423.5 257.9 423.9 258.9 424.6 260.3 C425.3 261.8 426.0 263.4 426.8 265.0 C427.6 266.6 429.0 269.2 429.5 270.0" stroke="#3a70c0" stroke-width="0.7" fill="none" /><path d="M398.5 214.8 C399.0 215.4 400.3 217.3 401.4 218.5 C402.5 219.6 403.8 220.7 405.1 221.8 C406.4 222.8 407.9 223.7 409.3 224.8 C410.7 225.9 412.4 226.9 413.3 228.3 C414.3 229.7 414.2 231.4 415.0 233.0 C415.8 234.7 417.5 237.2 418.0 238.0" stroke="#40a060" stroke-width="0.7" fill="none" /><path d="M311.2 302.0 C312.0 301.8 314.2 301.2 315.8 301.1 C317.5 301.0 319.5 301.2 321.2 301.1 C322.8 301.1 324.2 300.8 325.7 300.7 C327.2 300.5 328.7 300.6 330.2 300.2 C331.7 299.8 333.2 299.0 334.8 298.3 C336.4 297.7 338.2 296.9 339.7 296.2 C341.2 295.6 341.9 294.1 343.8 294.4 C345.8 294.7 349.3 298.0 351.2 298.2 C353.2 298.4 353.8 296.7 355.4 295.7 C357.0 294.7 359.4 292.9 360.8 292.2 C362.3 291.4 362.8 291.7 364.2 291.2 C365.6 290.7 367.6 289.6 369.1 289.1 C370.5 288.6 371.6 288.7 372.9 288.3 C374.2 287.8 375.9 286.9 377.1 286.2 C378.4 285.6 379.2 284.9 380.4 284.4 C381.6 283.9 383.1 283.9 384.6 283.4 C386.1 282.9 388.0 281.9 389.3 281.2 C390.7 280.5 391.4 280.1 392.6 279.4 C393.9 278.6 395.4 277.7 396.8 276.8 C398.3 275.9 400.0 275.0 401.4 274.0 C402.8 273.0 403.8 271.9 405.2 270.8 C406.5 269.8 408.2 268.9 409.3 267.9 C410.3 266.9 410.8 266.0 411.6 264.9 C412.4 263.8 413.4 262.4 414.2 261.3 C415.0 260.1 415.7 258.9 416.4 257.8 C417.1 256.7 417.4 255.8 418.2 254.8 C419.0 253.7 420.5 252.1 421.0 251.6" stroke="#3a8080" stroke-width="0.7" fill="none" /><path d="M317.9 317.5 321.6 314.6 326.4 311.7 329.5 307.8 327.9 312.8 325.6 318.1 329.8 314.6 332.7 311.1 336.0 308.5 339.7 305.2 338.6 308.3 336.4 312.1 335.3 316.2 337.8 312.8 340.9 309.6 344.3 306.2 347.3 303.6 350.1 300.5 354.2 297.7 358.0 295.7 361.6 293.6 364.8 291.9 369.3 290.6 372.7 289.2 377.4 287.2 380.6 285.4 385.0 284.0" stroke="#2a5a98" stroke-width="0.7" fill="none" /><path d="M351.8 257.9 356.8 257.8 361.0 256.9 364.7 257.2 369.8 255.1 374.6 253.2 379.9 252.0 384.9 250.7 389.8 248.9 395.2 247.8 400.0 247.2 404.8 246.2 409.8 245.8 414.6 247.5 420.0 250.0" stroke="#4a9a50" stroke-width="0.7" fill="none" /><path d="M418 247 L424 250 L420 254Z" stroke="#40c0c0" stroke-width="0.8" fill="none"/><path d="M171.2 268.2 C171.9 268.6 174.1 269.8 175.4 270.5 C176.6 271.2 177.3 272.3 178.5 272.5 C179.8 272.8 181.1 272.0 182.7 272.0 C184.3 272.0 186.8 273.2 188.2 272.6 C189.7 271.9 190.4 269.6 191.6 268.2 C192.8 266.8 194.6 266.0 195.6 264.2 C196.6 262.4 196.7 258.8 197.6 257.1 C198.4 255.4 199.4 254.0 200.5 254.3 C201.5 254.5 202.6 257.2 203.9 258.6 C205.2 259.9 206.8 261.5 208.3 262.4 C209.9 263.2 211.4 263.3 213.0 263.6 C214.5 263.9 216.8 264.1 217.6 264.2" stroke="#4a8a40" stroke-width="0.7" fill="none" /><path d="M200.4 265.5 C201.2 266.2 203.3 268.9 204.9 269.8 C206.6 270.8 208.6 271.5 210.3 271.2 C212.0 270.9 214.5 267.6 215.3 267.9 C216.0 268.2 215.0 271.5 214.7 273.1 C214.4 274.7 214.6 276.2 213.5 277.3 C212.4 278.3 209.0 278.2 207.9 279.3 C206.7 280.4 207.0 282.4 206.4 283.9 C205.9 285.5 205.1 286.8 204.4 288.8 C203.7 290.7 202.5 293.5 202.2 295.5 C201.9 297.5 202.6 299.3 202.6 300.9 C202.5 302.4 201.9 304.3 201.8 305.0" stroke="#3a7a3a" stroke-width="0.7" fill="none" /><path d="M201.2 267.6 C200.8 268.5 199.2 271.3 198.5 272.8 C197.9 274.3 197.8 275.0 197.5 276.7 C197.2 278.3 197.2 280.8 196.8 282.8 C196.3 284.7 194.7 286.8 194.7 288.3 C194.8 289.7 196.2 290.2 197.0 291.6 C197.7 292.9 198.9 295.0 199.5 296.3 C200.0 297.6 199.9 298.3 200.4 299.4 C201.0 300.6 202.4 302.6 202.8 303.2" stroke="#3a7a3a" stroke-width="0.7" fill="none" /><path d="M222.9 275.5 C223.5 276.1 225.2 277.6 226.4 278.9 C227.7 280.1 228.6 281.8 230.5 282.8 C232.4 283.7 235.9 284.0 237.9 284.7 C239.9 285.4 241.2 286.3 242.5 286.8 C243.9 287.4 245.4 287.8 246.0 288.0" stroke="#4a8a48" stroke-width="0.7" fill="none" /><path d="M218.1 292.4 221.0 293.6 225.0 296.0 229.8 297.5 234.9 299.3 238.6 299.0 243.8 299.8 249.4 299.0 253.0 300.0 258.0 301.6 262.0 302.0" stroke="#3a8070" stroke-width="0.7" fill="none" /><path d="M213.6 297.1 C213.4 298.0 213.1 301.0 212.6 302.5 C212.1 304.0 211.1 304.8 210.4 306.2 C209.8 307.6 207.7 310.5 208.6 310.9 C209.5 311.3 213.8 308.7 215.8 308.5 C217.8 308.4 219.0 309.5 220.5 309.9 C222.0 310.3 223.4 310.4 224.8 310.8 C226.3 311.2 227.7 311.9 229.3 312.1 C230.8 312.4 232.3 312.1 234.0 312.2 C235.6 312.3 237.6 312.7 239.2 312.7 C240.8 312.8 242.1 312.4 243.5 312.3 C245.0 312.2 246.3 312.2 247.8 312.0 C249.3 311.8 250.8 311.1 252.4 311.1 C254.0 311.2 255.8 312.1 257.5 312.1 C259.2 312.1 260.9 311.3 262.5 311.2 C264.1 311.2 266.3 311.7 267.0 311.8" stroke="#2a4a98" stroke-width="0.7" fill="none" /><path d="M172.5 264.3 C173.3 263.9 175.9 262.7 177.6 261.8 C179.4 260.8 181.5 259.3 182.9 258.5 C184.3 257.7 185.1 257.6 186.2 256.9 C187.4 256.3 188.7 255.5 190.0 254.7 C191.2 254.0 192.4 253.1 193.6 252.5 C194.9 252.0 196.5 252.6 197.7 251.5 C198.9 250.3 200.4 246.6 200.9 245.6" stroke="#8a9a50" stroke-width="0.7" fill="none" /><path d="M221.1 323.3 225.6 323.7 231.1 324.2 235.6 324.1 240.4 324.7 244.7 325.0 249.4 325.8 254.4 326.2 258.0 325.7 263.1 324.9 267.6 323.8 272.0 323.3" stroke="#243e88" stroke-width="0.7" fill="none" /><path d="M230.8 338.3 236.3 337.8 241.4 338.2 246.6 337.5 250.8 337.9 255.0 337.9 258.7 336.9 263.0 337.5 267.4 337.5 270.9 336.9 275.5 337.5 279.7 337.5 283.7 337.7 287.9 337.4 292.0 337.7 295.3 338.1 299.9 339.2 305.1 337.1 310.7 335.6 314.2 339.8 317.8 343.9 320.7 340.9 323.2 337.9 325.6 334.2 328.2 330.5 331.4 328.3 334.4 324.8 337.7 321.5 340.8 318.2 343.8 315.6" stroke="#1e3480" stroke-width="0.7" fill="none" /><path d="M243.6 351.3 C244.4 351.5 246.9 352.3 248.4 352.6 C249.9 352.9 251.2 353.0 252.6 353.3 C254.0 353.5 255.7 354.3 257.1 354.2 C258.4 354.1 259.3 353.0 260.7 352.7 C262.2 352.4 264.3 352.7 265.9 352.5 C267.5 352.3 269.2 351.9 270.6 351.5 C272.0 351.1 274.2 349.8 274.3 350.4 C274.3 350.9 272.2 353.2 270.9 354.8 C269.7 356.3 266.4 358.9 266.6 359.5 C266.8 360.0 270.3 358.4 272.1 358.0 C274.0 357.6 276.1 357.5 277.7 357.4 C279.3 357.2 280.5 357.2 281.9 356.9 C283.2 356.5 284.6 355.6 285.9 355.1 C287.2 354.7 288.5 354.6 289.8 354.2 C291.1 353.8 292.3 353.3 293.7 353.0 C295.1 352.6 296.8 352.6 298.1 352.0 C299.4 351.4 300.3 350.2 301.3 349.4 C302.2 348.5 302.9 347.6 303.9 346.7 C304.8 345.8 305.9 344.9 306.9 343.9 C307.9 343.0 309.7 340.8 310.1 340.9 C310.4 341.0 309.6 343.4 309.0 344.8 C308.5 346.1 307.7 347.6 306.9 349.0 C306.1 350.4 305.0 351.8 304.2 353.1 C303.5 354.5 301.9 356.9 302.4 357.1 C302.8 357.2 305.6 355.1 307.0 354.1 C308.3 353.1 309.2 352.0 310.4 351.1 C311.7 350.1 313.3 349.2 314.5 348.5 C315.8 347.8 316.3 347.2 318.2 346.8 C320.2 346.4 324.1 345.9 326.2 346.0 C328.3 346.1 329.2 346.9 330.7 347.3 C332.1 347.6 333.3 347.8 334.7 348.0 C336.2 348.1 337.9 348.1 339.4 348.3 C340.9 348.4 343.1 348.9 343.8 349.0" stroke="#1a2c78" stroke-width="0.7" fill="none" /><path d="M254.0 364.2 258.1 363.9 262.5 362.9 266.9 361.5 268.4 366.1 271.1 369.9 272.8 372.8 274.3 376.5 278.3 375.1 282.3 372.8 285.1 370.7 288.6 368.5 292.6 366.9 289.9 371.3 287.3 375.0 284.9 378.1 281.8 382.4 286.8 379.8 290.7 377.9 294.8 376.5 298.9 373.8 302.5 372.5 307.3 369.1 311.0 364.9 315.0 362.0" stroke="#162470" stroke-width="0.7" fill="none" /><path d="M271.9 387.8 275.4 385.3 279.2 383.9 283.4 381.2 287.3 379.4 290.5 376.6 293.9 372.9 296.9 369.7 299.9 367.3 303.3 364.7 306.7 361.7 310.8 358.7 315.1 360.2 319.7 361.5 324.2 361.8 328.5 363.0" stroke="#1a2a78" stroke-width="0.7" fill="none" /><path d="M284.7 387.4 C285.5 387.7 288.1 388.8 289.8 389.4 C291.5 390.1 294.1 391.0 295.0 391.3" stroke="#1a2a70" stroke-width="0.7" fill="none" /><path d="M315.2 326.2 319.8 328.1 323.8 331.5 328.8 334.0 330.9 330.2 333.3 326.1 336.6 321.8 338.2 317.8 340.8 314.7 343.9 310.5 346.5 308.1 350.0 305.4" stroke="#2a50a0" stroke-width="0.7" fill="none" /><path d="M224.8 311.4 L225.3 310.6 L226.7 310.6 L227.2 311.4" stroke="#c8c8c8" stroke-width="0.55" fill="none"/><path d="M234.8 324.4 L235.3 323.6 L236.7 323.6 L237.2 324.4" stroke="#c8c8c8" stroke-width="0.55" fill="none"/><path d="M241.8 338.4 L242.3 337.6 L243.7 337.6 L244.2 338.4" stroke="#c8c8c8" stroke-width="0.55" fill="none"/><path d="M252.8 354.4 L253.3 353.6 L254.7 353.6 L255.2 354.4" stroke="#c8c8c8" stroke-width="0.55" fill="none"/><path d="M254.8 365.4 L255.3 364.6 L256.7 364.6 L257.2 365.4" stroke="#c8c8c8" stroke-width="0.55" fill="none"/><path d="M298.8 335.4 L299.3 334.6 L300.7 334.6 L301.2 335.4" stroke="#c8c8c8" stroke-width="0.55" fill="none"/><path d="M315.8 373.4 L316.3 372.6 L317.7 372.6 L318.2 373.4" stroke="#c8c8c8" stroke-width="0.55" fill="none"/><path d="M283.8 383.4 L284.3 382.6 L285.7 382.6 L286.2 383.4" stroke="#c8c8c8" stroke-width="0.55" fill="none"/><path d="M327.8 346.4 L328.3 345.6 L329.7 345.6 L330.2 346.4" stroke="#c8c8c8" stroke-width="0.55" fill="none"/><path d="M340.8 332.4 L341.3 331.6 L342.7 331.6 L343.2 332.4" stroke="#c8c8c8" stroke-width="0.55" fill="none"/><path d="M102.0 320.0 C106.0 316.3 118.0 304.8 126.0 298.0 C134.0 291.2 141.7 286.0 150.0 279.0 C158.3 272.0 167.7 264.2 176.0 256.0 C184.3 247.8 192.0 238.8 200.0 230.0 C208.0 221.2 220.0 207.5 224.0 203.0" stroke="#b4b4b4" stroke-width="9.0" fill="none" /><path d="M102.0 320.0 C106.0 316.3 118.0 304.8 126.0 298.0 C134.0 291.2 141.7 286.0 150.0 279.0 C158.3 272.0 167.7 264.2 176.0 256.0 C184.3 247.8 192.0 238.8 200.0 230.0 C208.0 221.2 220.0 207.5 224.0 203.0" stroke="#0c0c0c" stroke-width="7.2" fill="none" /><path d="M104.0 322.0 C108.0 318.3 120.0 306.8 128.0 300.0 C136.0 293.2 143.7 288.0 152.0 281.0 C160.3 274.0 169.7 266.2 178.0 258.0 C186.3 249.8 194.0 240.8 202.0 232.0 C210.0 223.2 222.0 209.5 226.0 205.0" stroke="#9a9a9a" stroke-width="0.8" fill="none" /><path d="M100.0 318.0 C104.0 314.3 116.0 302.8 124.0 296.0 C132.0 289.2 139.7 284.0 148.0 277.0 C156.3 270.0 165.7 262.2 174.0 254.0 C182.3 245.8 190.0 236.8 198.0 228.0 C206.0 219.2 218.0 205.5 222.0 201.0" stroke="#9a9a9a" stroke-width="0.8" fill="none" /><path d="M102.2 320.2 C106.2 316.5 118.2 305.0 126.2 298.2 C134.2 291.4 141.9 286.2 150.2 279.2 C158.5 272.2 167.9 264.4 176.2 256.2 C184.5 248.0 192.2 239.0 200.2 230.2 C208.2 221.4 220.2 207.7 224.2 203.2" stroke="#8a8a8a" stroke-width="1.4" stroke-dasharray="2.5 1" fill="none"/><clipPath id="siteclip"><path d="M203 233 L220 208 L238 192 L256 183 L272 179 L289 180 L301 183 L310 189 L319 199 L330 213 L341 228 L352 243 L362 255 L352 262 L340 270 L322 290 L306 300 L282 304 L262 300 L246 288 L226 266 L210 246Z"/></clipPath><path d="M203 233 L220 208 L238 192 L256 183 L272 179 L289 180 L301 183 L310 189 L319 199 L330 213 L341 228 L352 243 L362 255 L352 262 L340 270 L322 290 L306 300 L282 304 L262 300 L246 288 L226 266 L210 246Z" fill="#1c1c1c"/><g clip-path="url(#siteclip)"><path d="M195.8 236.0 198.3 232.8 200.9 229.1 202.7 226.6 205.3 222.8 208.3 219.7 210.6 216.5 212.8 212.9 215.1 210.3 218.1 207.7 221.4 204.6 224.6 202.6 227.3 199.6 231.0 197.5 233.9 195.3 237.1 192.9 239.9 190.3 244.2 189.1 248.9 187.1 252.5 185.9 257.6 184.8 261.5 183.4 265.7 182.2 269.9 181.1 274.4 181.6 278.7 182.0 283.2 182.3 287.3 181.8 291.8 182.8 296.1 182.8 300.2 182.7 304.0 185.6 307.1 187.6 311.3 190.9 314.3 193.3 318.3 195.2 321.8 198.2 324.9 201.0 327.2 204.5 329.9 208.2 332.6 212.2 334.8 215.7 337.2 218.3 340.0 221.7 342.2 225.5 345.1 228.7 347.1 232.7 349.8 236.2 352.9 239.1 355.0 242.6 357.6 246.1 360.1 249.5 362.9 252.8 364.9 256.4 367.3 259.4 370.0 263.0" stroke="#a8a8a8" stroke-width="0.65" fill="none" /><path d="M196.4 236.8 198.8 232.7 201.4 229.6 203.7 225.9 207.0 221.8 209.7 218.5 212.4 214.7 215.2 211.4 218.1 208.0 222.3 205.9 225.5 202.7 229.4 199.7 232.7 196.9 236.3 194.3 239.8 191.3 244.5 189.8 248.6 189.1 252.7 187.4 257.4 186.1 261.1 185.1 265.9 183.5 269.8 182.4 274.6 182.8 278.9 182.8 282.7 183.6 287.5 183.7 291.2 183.7 295.7 184.0 300.3 184.9 303.4 186.8 307.6 189.6 311.3 191.8 314.3 194.2 318.6 196.7 321.9 199.2 324.5 202.6 327.5 205.8 329.2 209.9 332.6 213.3 334.7 216.7 337.7 219.4 340.1 223.4 342.6 226.5 344.8 229.7 347.3 232.8 350.1 236.4 352.8 239.5 355.4 243.4 357.9 247.0 360.4 250.0 362.1 253.5 364.7 256.5 367.6 260.0 370.0 263.3" stroke="#7a7a7a" stroke-width="0.5" fill="none" /><path d="M195.9 238.0 198.8 233.9 201.2 230.7 204.1 227.0 206.7 222.9 209.6 219.8 212.0 216.2 215.4 212.6 218.9 209.1 222.3 207.1 225.3 203.8 229.1 201.2 232.8 198.4 236.7 195.2 239.6 192.6 243.9 191.3 249.0 190.7 252.5 189.2 257.0 187.7 261.3 186.8 265.8 185.3 269.7 184.0 273.9 184.5 278.8 184.6 282.5 184.7 287.0 185.4 291.7 185.4 296.0 185.9 299.9 186.0 303.7 188.7 307.3 191.1 311.0 193.1 314.7 196.0 317.9 198.1 321.9 201.0 324.9 203.9 327.5 207.6 329.5 210.6 331.9 214.3 334.9 217.7 337.6 220.8 340.1 224.1 342.1 227.4 344.6 230.4 347.7 233.6 349.6 236.9 352.8 240.3 354.6 244.2 357.2 247.5 360.2 250.8 362.9 253.9 365.3 256.7 367.7 260.4 370.0 263.7" stroke="#7a7a7a" stroke-width="0.5" fill="none" /><path d="M196.2 238.1 198.9 235.3 201.0 231.1 204.2 228.0 206.6 223.9 209.3 220.7 212.5 217.0 214.9 213.4 218.4 210.7 221.8 208.0 226.1 205.2 229.5 202.2 233.0 200.0 236.6 197.1 240.0 194.5 244.6 192.8 248.2 192.1 253.2 190.7 257.1 189.6 261.1 188.0 265.4 187.0 269.8 185.5 274.5 186.4 278.4 186.5 282.8 186.9 287.2 186.6 291.2 186.7 295.7 187.3 299.7 187.5 303.5 190.3 307.0 192.9 311.0 194.9 314.6 197.5 318.6 199.6 322.0 202.1 324.9 205.1 327.3 208.9 329.6 211.6 332.0 215.3 334.9 218.8 337.7 221.4 339.6 224.8 342.2 228.4 345.3 231.9 347.3 235.1 349.8 238.0 352.7 240.9 354.6 244.8 357.3 247.7 360.1 251.2 362.1 254.1 364.9 257.5 367.2 260.9 370.0 264.0" stroke="#7a7a7a" stroke-width="0.5" fill="none" /><path d="M196.4 239.1 198.8 235.4 201.2 232.4 203.8 229.1 207.2 224.8 210.0 221.6 212.5 218.4 214.8 214.8 218.7 212.2 221.9 209.5 226.1 206.7 229.3 203.5 232.9 201.0 236.6 198.6 240.1 195.5 244.4 194.7 248.3 193.7 253.0 191.8 257.5 190.6 261.3 189.9 265.8 188.6 270.1 187.3 274.1 187.3 278.2 188.1 283.1 188.2 287.4 188.3 291.2 188.6 296.0 188.5 300.0 189.0 303.9 191.4 307.2 193.8 311.0 196.5 314.5 198.9 318.0 200.7 321.6 202.9 324.8 206.7 326.8 209.5 329.6 213.2 332.5 216.4 334.9 219.1 337.2 222.4 339.9 226.0 342.2 228.9 345.3 232.0 347.8 235.9 350.4 238.7 352.5 242.1 355.1 245.6 357.7 248.2 360.3 251.6 362.6 255.0 364.6 258.2 367.6 261.2 370.0 264.4" stroke="#7a7a7a" stroke-width="0.5" fill="none" /><path d="M196.0 240.0 198.4 236.6 201.0 233.1 204.3 229.6 206.9 226.6 209.9 222.4 212.5 219.4 214.6 215.7 218.3 212.8 222.2 210.9 225.6 208.2 229.5 204.9 233.2 202.6 236.8 200.1 240.2 197.1 244.6 196.4 248.9 194.8 253.1 193.6 256.8 192.1 261.0 191.0 265.4 190.1 270.2 188.9 274.2 189.3 278.4 189.4 283.1 189.6 286.9 190.3 291.6 190.1 295.6 190.5 300.1 190.5 303.2 192.8 307.6 195.1 311.0 197.4 314.4 199.7 318.2 202.0 321.6 204.2 324.3 207.8 326.7 210.5 329.6 214.1 332.4 216.9 334.7 220.4 336.9 224.1 339.6 226.5 342.4 229.8 345.1 233.1 347.2 236.0 350.2 239.3 352.8 242.6 355.4 245.6 357.3 248.8 360.3 252.2 362.4 254.9 365.2 258.8 367.6 261.1 370.0 264.7" stroke="#7a7a7a" stroke-width="0.5" fill="none" /><path d="M195.6 240.5 198.4 237.0 201.0 234.2 204.5 230.4 207.3 227.2 209.8 224.2 212.7 220.0 214.8 217.1 219.0 214.0 222.0 212.1 225.4 209.0 229.1 206.7 233.2 203.6 236.6 201.5 240.3 198.7 244.7 197.4 248.5 196.1 253.1 195.1 256.9 193.7 261.6 192.9 265.9 191.6 270.0 190.2 274.5 190.3 278.5 191.3 283.0 190.9 286.9 191.9 291.6 192.2 296.0 192.0 300.4 192.6 303.5 194.5 306.9 196.8 311.4 198.8 314.7 201.0 318.0 203.8 321.8 205.5 324.2 209.2 327.2 211.7 329.4 215.7 332.0 218.5 334.7 221.8 337.4 225.0 339.9 227.5 342.2 230.6 345.3 233.7 347.3 237.9 350.3 241.3 353.0 244.4 355.9 248.1 359.0 251.4 361.9 255.1 364.3 258.3 367.2 261.3 370.0 265.1" stroke="#7a7a7a" stroke-width="0.5" fill="none" /><path d="M196.3 241.8 199.0 238.0 201.5 234.9 204.3 231.2 206.7 228.2 209.2 224.9 212.5 221.4 215.1 218.2 218.3 215.4 222.6 212.8 225.7 210.0 229.0 207.5 233.2 205.5 236.8 203.1 240.1 200.5 244.3 198.9 249.0 198.2 253.3 196.6 257.4 195.4 261.9 194.7 265.5 193.6 269.7 191.7 274.5 192.2 278.6 192.7 282.4 193.1 286.9 193.1 291.3 193.6 295.9 193.4 299.6 193.7 303.6 195.7 307.0 198.6 311.2 201.0 315.1 203.1 318.2 204.7 321.8 207.2 324.6 210.3 327.0 213.7 329.5 216.4 332.6 219.8 334.6 222.4 337.6 225.3 339.6 228.8 342.5 231.6 344.6 234.7 348.0 238.3 351.0 242.0 353.8 244.7 355.8 248.0 358.8 251.7 361.3 255.3 364.1 258.5 367.0 262.3 370.0 265.4" stroke="#a8a8a8" stroke-width="0.65" fill="none" /><path d="M195.9 242.3 198.3 239.1 201.5 236.0 204.5 232.8 206.6 228.9 209.8 226.2 212.3 222.9 215.0 219.1 218.3 216.3 222.3 214.6 226.1 211.7 229.4 209.5 233.1 206.7 236.4 204.1 239.7 201.3 244.5 200.9 248.6 199.2 252.7 198.1 257.4 197.0 261.8 195.6 265.5 194.8 269.9 194.0 274.6 194.3 278.7 193.7 282.9 194.5 287.1 194.5 291.6 195.3 295.4 195.4 299.9 195.5 304.0 198.0 307.5 199.5 311.4 201.7 314.6 204.5 318.2 206.1 322.4 208.9 324.7 211.8 327.6 215.0 330.4 219.2 333.1 221.9 336.1 225.2 339.3 229.2 342.4 232.5 345.3 235.3 347.6 239.5 350.2 242.2 353.3 245.6 356.2 248.7 358.7 252.8 361.3 256.1 364.2 259.5 367.4 262.5 370.0 265.7" stroke="#7a7a7a" stroke-width="0.5" fill="none" /><path d="M195.7 242.9 198.9 239.7 201.1 237.1 204.5 233.1 207.3 230.3 209.5 226.6 212.2 224.2 214.8 220.1 218.3 217.6 222.0 215.9 225.3 212.7 229.7 210.9 233.3 207.8 236.3 205.9 240.0 203.2 244.1 201.4 248.4 201.0 253.1 199.7 257.1 198.6 261.4 197.5 266.0 196.1 270.1 195.6 274.6 195.2 279.0 196.1 282.6 195.8 286.9 195.9 291.9 196.4 296.0 196.4 299.6 197.3 303.9 199.6 307.5 201.3 311.2 203.1 314.7 205.5 318.0 207.8 321.8 209.9 324.8 213.0 327.6 216.6 331.1 220.3 333.8 223.5 336.2 227.0 339.0 229.6 342.1 233.5 344.9 236.8 347.6 240.3 350.5 243.2 353.4 246.8 356.5 249.7 358.8 253.1 361.3 256.2 364.8 259.8 366.8 263.1 370.0 266.1" stroke="#7a7a7a" stroke-width="0.5" fill="none" /><path d="M195.9 244.5 198.6 240.6 201.5 238.0 204.1 234.8 207.0 231.1 209.4 228.1 212.2 224.7 215.1 222.0 218.6 218.9 221.9 216.6 225.8 213.9 228.9 211.6 232.7 208.9 236.5 207.3 240.0 204.6 244.6 203.6 248.9 202.2 253.0 200.8 257.5 200.0 261.4 199.3 265.5 197.6 270.3 196.9 273.9 196.6 278.4 196.9 283.2 197.3 286.9 197.7 291.4 198.0 295.8 198.5 299.9 198.2 304.1 200.8 307.0 202.7 311.2 205.3 314.3 206.5 318.3 209.0 322.4 211.5 324.7 214.4 327.8 218.1 330.4 220.9 333.1 224.4 335.9 228.0 339.3 231.0 341.8 234.0 345.0 237.8 347.8 240.5 351.0 244.1 353.4 246.9 355.9 250.7 358.6 253.6 361.8 256.6 364.7 260.4 367.5 263.4 370.0 266.4" stroke="#7a7a7a" stroke-width="0.5" fill="none" /><path d="M195.7 244.5 198.7 241.6 201.2 238.9 203.9 235.7 207.3 231.9 209.9 229.0 212.0 225.7 214.6 222.8 218.5 220.7 222.4 217.6 225.6 215.5 229.0 212.9 232.6 210.9 236.3 207.9 239.7 205.8 244.3 204.6 248.8 203.5 253.0 202.8 256.9 201.8 261.3 200.6 265.8 199.6 269.9 198.0 274.5 199.0 278.6 199.0 282.6 199.5 287.3 199.1 291.7 200.1 295.6 200.3 300.0 199.8 303.9 202.0 307.5 204.3 310.6 206.3 315.0 208.3 318.4 210.7 322.0 212.5 324.9 216.0 327.5 218.6 330.9 222.2 333.3 225.8 336.7 228.7 339.7 232.2 342.3 234.9 344.6 238.5 348.0 241.4 350.5 244.7 353.1 248.0 356.2 250.9 358.5 254.2 361.5 257.5 364.1 260.3 366.9 263.5 370.0 266.8" stroke="#7a7a7a" stroke-width="0.5" fill="none" /><path d="M196.1 245.4 198.3 242.6 201.2 239.5 203.8 236.0 206.9 233.7 209.9 230.2 212.2 226.7 214.8 223.8 219.0 221.3 222.5 219.2 225.7 216.6 229.7 214.2 232.9 212.1 236.2 209.4 240.4 207.6 244.5 206.6 248.2 205.4 253.1 203.9 257.1 203.6 261.3 202.3 265.4 201.2 269.8 200.0 274.2 200.6 278.8 200.5 283.0 200.6 287.4 200.7 291.5 201.3 295.6 201.0 299.7 201.8 303.4 203.9 307.3 206.1 311.3 207.9 314.6 209.3 318.4 212.0 322.4 213.5 324.6 217.4 328.0 220.1 330.8 223.0 333.5 226.6 336.5 229.4 338.9 232.9 342.5 235.7 344.6 238.8 348.0 242.2 350.5 245.8 353.4 248.3 356.3 251.1 358.7 254.9 361.4 257.4 364.5 260.7 367.6 263.6 370.0 267.1" stroke="#7a7a7a" stroke-width="0.5" fill="none" /><path d="M196.3 246.4 199.0 243.4 201.6 240.3 203.9 237.3 207.1 234.2 209.3 231.2 211.9 228.0 215.1 225.2 218.7 222.6 221.7 220.0 225.6 217.8 229.3 215.6 233.1 213.5 236.6 211.3 240.0 208.7 244.1 207.3 248.8 206.7 252.5 206.1 257.2 204.8 261.4 203.3 266.2 202.3 269.9 202.0 273.9 201.8 278.6 201.8 283.2 202.2 286.7 202.5 291.0 203.0 296.0 203.4 299.6 203.4 303.5 205.2 307.2 207.0 310.7 209.3 314.3 211.6 317.9 213.6 321.7 214.7 325.1 218.3 328.0 221.3 330.7 224.1 333.7 227.6 336.8 230.2 338.9 234.0 342.5 236.8 345.2 240.1 347.7 243.0 350.6 245.7 353.2 249.4 355.9 252.2 358.7 255.1 361.8 258.5 364.9 261.3 367.0 264.2 370.0 267.4" stroke="#7a7a7a" stroke-width="0.5" fill="none" /><path d="M195.6 247.1 198.8 244.4 201.2 241.0 203.8 238.0 206.9 235.1 209.9 232.4 212.1 229.2 214.6 226.5 218.8 223.9 222.3 221.5 225.5 219.2 229.0 217.2 233.0 215.0 236.1 212.7 240.0 210.1 244.3 209.1 248.3 208.1 253.0 207.4 257.5 205.9 261.8 205.4 265.9 204.6 269.7 203.4 274.6 203.0 278.7 204.0 282.7 204.2 287.5 204.0 291.1 204.1 296.0 204.5 299.8 204.7 304.1 206.5 306.9 209.1 310.8 210.5 315.1 212.4 318.0 214.8 321.8 216.2 325.3 219.2 328.1 222.4 330.4 225.3 333.5 228.7 336.3 231.7 339.1 235.1 342.5 238.0 345.3 240.5 347.6 243.6 350.2 247.3 353.7 250.2 356.2 252.5 358.8 255.4 362.0 258.6 364.3 262.2 367.0 265.2 370.0 267.8" stroke="#a8a8a8" stroke-width="0.65" fill="none" /><path d="M195.8 248.3 198.4 245.6 201.3 242.1 204.3 239.4 206.6 236.0 209.6 233.0 212.6 230.3 214.7 227.3 218.2 225.0 222.2 222.9 225.6 220.5 229.3 218.7 232.8 216.4 236.4 213.6 239.7 212.0 244.3 210.6 248.6 210.0 252.7 208.6 257.0 207.3 261.5 206.7 265.7 205.7 270.0 204.9 274.0 205.4 278.2 205.5 282.6 205.7 286.9 205.3 291.5 206.2 296.0 206.5 300.4 206.0 303.6 207.9 307.6 210.1 311.2 212.3 315.1 214.1 318.7 215.9 321.6 218.1 324.5 220.4 328.0 223.5 330.8 226.3 333.2 229.9 336.0 232.7 339.6 235.5 342.3 238.9 345.1 242.0 348.0 244.2 350.3 247.6 353.8 250.3 356.2 253.1 359.2 256.3 361.7 259.5 364.1 262.5 367.5 265.5 370.0 268.1" stroke="#7a7a7a" stroke-width="0.5" fill="none" /><path d="M195.8 248.7 198.9 245.9 202.3 242.1 205.5 239.0 208.5 235.3 212.1 232.3 214.8 228.2 219.0 226.6 222.2 224.1 226.1 221.9 229.0 219.4 232.7 217.6 236.3 215.7 240.1 213.1 244.4 212.2 248.7 211.1 252.9 210.2 257.4 208.9 261.7 208.1 266.0 206.9 270.0 206.3 274.5 206.3 278.4 206.4 282.9 207.1 286.7 206.9 291.2 207.9 295.7 207.7 299.8 208.1 303.9 209.9 306.9 211.6 311.0 213.1 314.9 215.2 318.1 217.3 322.1 219.1 325.2 222.0 327.6 224.5 330.7 227.8 333.5 230.7 335.9 233.3 338.9 236.3 342.4 239.7 344.8 242.8 348.2 245.4 351.5 248.8 354.8 252.0 357.3 255.3 361.0 259.0 363.8 261.7 366.8 265.4 370.0 268.5" stroke="#7a7a7a" stroke-width="0.5" fill="none" /><path d="M195.6 250.2 199.5 246.8 202.5 243.2 205.9 239.6 208.5 236.1 211.5 233.4 214.6 230.0 218.5 228.0 222.4 225.6 226.0 222.8 229.1 221.0 232.8 219.0 236.8 216.9 240.4 214.7 244.2 213.6 248.8 212.9 252.7 211.6 257.2 210.5 261.8 209.3 265.8 208.8 269.7 208.0 274.3 208.5 278.9 208.4 283.2 208.9 286.8 209.1 291.7 209.5 295.9 209.1 299.7 209.6 303.4 211.5 307.4 213.4 310.9 214.7 315.0 216.9 318.2 218.6 321.9 220.5 324.9 223.1 328.2 226.5 330.9 228.8 333.2 232.1 336.7 234.9 339.0 237.9 342.1 240.4 345.1 243.4 348.3 246.8 351.7 249.4 354.4 253.3 357.6 256.2 360.9 258.9 364.0 262.6 367.0 265.5 370.0 268.8" stroke="#7a7a7a" stroke-width="0.5" fill="none" /><path d="M196.1 250.2 199.2 247.1 202.7 244.3 205.5 241.0 208.6 237.5 211.5 234.6 215.2 231.2 218.2 229.1 221.7 226.7 225.7 224.1 229.2 222.7 233.0 220.1 236.7 218.0 240.4 215.9 243.9 215.5 248.2 213.9 253.1 212.8 257.2 212.6 261.5 211.2 265.9 210.7 270.1 209.6 274.1 209.6 279.0 210.3 282.4 209.9 286.9 210.6 291.2 210.3 296.0 210.5 300.4 211.0 304.0 213.1 307.1 214.8 310.9 216.1 314.3 218.3 318.4 219.7 322.3 221.4 324.8 224.1 327.6 227.7 330.6 229.8 333.3 233.1 336.2 236.2 338.9 239.0 342.2 241.7 344.9 243.9 347.8 247.5 350.8 250.1 354.6 253.9 357.8 257.0 360.7 260.2 363.9 263.0 366.8 265.6 370.0 269.2" stroke="#7a7a7a" stroke-width="0.5" fill="none" /><path d="M195.6 251.2 199.1 247.8 202.8 245.0 205.7 242.1 208.4 238.9 212.2 235.1 214.7 232.4 218.9 230.3 222.1 228.0 225.4 225.6 229.2 223.9 232.5 222.0 236.0 219.9 239.8 217.7 244.6 216.9 248.5 215.8 252.7 215.0 256.8 214.1 261.5 212.5 266.1 211.8 269.6 210.8 273.9 211.1 278.8 211.9 283.0 212.0 287.4 212.1 291.3 211.9 295.4 212.4 299.7 212.8 303.5 214.4 307.4 216.2 310.7 217.6 314.8 219.3 318.5 221.7 321.9 223.4 325.4 226.6 328.6 229.6 332.0 232.2 335.2 235.7 338.4 238.9 342.1 242.2 345.3 244.8 348.3 248.3 351.6 250.8 354.1 254.7 357.4 257.5 360.7 260.3 363.7 263.5 367.3 266.5 370.0 269.5" stroke="#7a7a7a" stroke-width="0.5" fill="none" /><path d="M196.3 252.0 199.4 249.1 202.6 246.2 205.1 243.2 208.8 239.4 211.8 236.1 214.8 233.6 218.8 231.6 221.8 228.8 225.6 227.1 229.5 224.9 233.1 223.1 236.2 221.2 239.6 218.9 244.0 217.6 248.6 217.1 253.0 216.1 257.5 215.6 261.1 214.0 266.1 213.5 269.6 212.4 274.5 212.6 278.5 213.2 282.7 213.4 287.5 213.8 291.5 213.8 295.5 214.1 300.1 214.2 303.7 216.1 307.1 217.7 311.4 218.8 314.4 221.4 318.0 222.9 322.1 223.9 325.4 227.0 328.9 230.3 332.2 234.0 334.8 236.6 338.1 240.0 341.4 242.5 344.7 246.3 347.9 248.8 351.2 252.0 354.3 255.3 357.4 257.9 361.0 260.7 363.5 264.2 366.7 267.2 370.0 269.8" stroke="#7a7a7a" stroke-width="0.5" fill="none" /><path d="M196.3 252.9 199.0 249.6 202.7 246.8 205.4 243.4 208.4 241.0 211.5 237.6 215.1 234.5 218.6 232.3 221.9 230.7 226.1 228.4 229.1 226.7 232.6 224.1 236.5 222.6 240.1 220.0 244.7 219.1 248.4 219.0 253.1 217.9 256.8 217.1 261.3 215.5 266.0 215.5 269.6 214.2 274.6 214.3 278.4 214.9 282.8 215.3 287.5 215.4 291.6 215.0 295.9 215.6 300.0 215.8 303.5 217.1 307.7 218.9 310.6 221.1 314.7 222.5 318.2 223.7 321.8 225.9 325.1 229.0 328.4 232.0 331.6 234.7 334.8 237.4 338.4 240.6 341.7 243.5 344.8 246.6 348.5 249.4 351.2 253.0 354.4 255.4 357.9 258.1 360.3 261.0 363.7 264.7 366.7 267.1 370.0 270.2" stroke="#a8a8a8" stroke-width="0.65" fill="none" /><path d="M196.3 253.4 198.7 250.9 202.0 247.8 205.2 244.8 209.0 241.6 211.6 238.8 215.2 235.2 218.3 233.5 222.1 231.5 225.9 229.5 229.7 227.6 232.6 225.3 236.1 223.5 240.3 221.7 244.2 221.3 249.0 220.3 252.6 219.0 257.1 218.1 261.3 217.2 265.5 216.9 270.1 215.8 274.3 216.1 278.7 215.8 283.2 216.4 287.0 217.0 291.7 216.7 295.3 217.0 299.9 217.1 303.3 218.9 307.1 220.7 311.0 221.9 315.0 223.7 318.0 225.1 321.6 226.9 325.7 230.3 328.7 232.6 331.6 235.6 335.0 238.9 338.0 241.7 341.6 244.8 345.3 247.6 348.2 250.3 351.2 253.5 354.0 256.2 357.5 258.8 360.4 262.2 363.6 264.5 366.7 267.7 370.0 270.5" stroke="#7a7a7a" stroke-width="0.5" fill="none" /><path d="M195.9 254.5 199.0 251.4 202.3 248.8 205.1 245.8 208.5 243.2 212.2 239.4 215.2 236.6 218.2 235.2 222.5 233.2 225.8 231.4 229.3 229.2 233.0 227.4 236.7 225.0 239.7 223.2 244.4 222.2 248.9 221.8 253.0 220.7 257.3 219.6 261.7 218.7 266.1 218.3 269.8 217.1 274.4 217.6 278.7 217.4 283.2 217.9 287.1 218.4 291.5 218.4 295.5 218.6 299.6 218.6 304.7 220.4 308.4 222.9 313.1 224.5 317.7 226.6 321.8 228.5 324.8 231.5 328.4 234.2 331.7 237.2 335.0 239.9 338.3 243.0 342.0 245.3 345.2 248.9 347.9 251.0 351.6 254.5 354.0 257.1 357.9 259.5 360.9 262.3 364.0 265.3 366.9 267.7 370.0 270.9" stroke="#7a7a7a" stroke-width="0.5" fill="none" /><path d="M196.1 255.6 199.0 252.1 202.0 249.4 205.9 246.9 209.0 244.0 211.5 240.8 215.4 238.3 219.0 236.3 222.3 234.4 226.1 232.2 228.9 230.2 232.4 228.2 236.5 226.3 239.8 224.3 244.2 223.8 248.7 223.4 252.5 222.0 256.8 221.8 261.5 220.7 266.0 219.3 270.4 218.8 274.4 219.1 278.8 219.2 282.7 219.3 287.3 219.7 291.1 219.8 295.8 220.1 300.1 220.7 304.5 222.5 308.6 224.4 313.6 225.9 317.2 227.4 322.2 229.9 325.5 232.4 328.6 234.9 331.9 238.5 334.9 241.0 338.7 243.8 341.6 246.3 345.2 249.7 348.5 252.0 351.5 255.1 354.3 257.8 357.4 260.0 360.2 263.2 364.0 265.3 366.5 268.3 370.0 271.2" stroke="#7a7a7a" stroke-width="0.5" fill="none" /><path d="M195.7 256.5 198.9 253.5 202.4 250.4 205.8 247.6 208.7 245.0 211.7 241.7 215.4 239.3 218.6 237.2 222.2 235.2 225.3 233.6 229.6 231.3 233.3 229.7 236.9 228.2 239.8 225.8 244.6 225.7 248.8 224.6 252.9 224.0 257.4 223.2 261.2 222.4 266.1 221.4 269.6 220.3 274.4 220.7 278.9 221.1 283.0 220.8 287.2 221.5 291.8 221.9 295.5 221.7 300.4 221.6 304.0 223.4 309.0 225.4 313.4 227.6 317.9 228.7 322.2 231.2 325.5 234.0 328.9 236.5 332.2 239.2 334.8 241.7 338.8 244.5 341.7 247.8 345.2 250.5 348.1 252.9 350.9 255.3 354.1 258.2 357.5 260.5 360.7 263.2 363.6 265.8 366.9 268.6 370.0 271.5" stroke="#7a7a7a" stroke-width="0.5" fill="none" /><path d="M196.4 256.9 199.5 254.2 202.2 251.8 205.3 248.7 208.8 246.3 212.0 242.7 215.0 240.7 218.9 238.3 221.8 236.4 225.9 234.5 229.6 232.8 233.0 231.3 236.2 229.4 240.1 227.3 244.3 226.9 249.0 225.8 252.6 225.2 257.2 224.4 261.8 223.4 265.7 222.9 269.7 222.1 274.2 222.2 278.8 223.0 283.3 222.5 287.0 223.3 291.1 222.7 295.3 223.7 300.0 223.4 304.0 225.6 309.2 227.1 313.6 228.8 317.4 230.2 321.8 231.9 325.2 234.5 328.2 238.0 332.2 240.6 335.0 242.9 338.5 245.9 341.5 248.4 345.0 251.4 348.0 253.2 351.2 256.6 354.1 259.0 357.2 261.3 360.7 263.7 363.7 266.8 366.8 269.5 370.0 271.9" stroke="#7a7a7a" stroke-width="0.5" fill="none" /><path d="M196.3 257.7 199.4 255.4 202.4 252.5 205.6 249.9 208.8 246.7 212.0 244.4 215.0 241.8 219.0 239.4 223.4 237.4 227.2 235.4 231.3 233.2 235.8 231.2 240.3 229.4 244.0 228.6 248.5 227.5 252.4 227.0 256.9 225.8 261.3 225.0 265.5 224.3 270.0 223.6 274.5 224.3 279.0 224.0 283.0 224.5 287.3 224.4 291.2 224.9 295.9 224.7 300.1 224.6 304.7 227.1 309.2 228.1 313.4 230.4 317.3 231.9 321.7 233.3 324.9 236.0 328.9 238.9 332.1 241.8 334.8 244.3 338.8 246.8 341.6 249.0 344.9 251.8 347.9 254.6 351.4 256.8 354.1 259.5 357.7 262.2 360.8 265.0 364.0 267.1 367.1 269.8 370.0 272.2" stroke="#7a7a7a" stroke-width="0.5" fill="none" /><path d="M195.9 258.4 199.1 256.2 202.6 253.1 205.5 250.3 208.8 247.9 212.1 245.6 214.6 243.0 218.9 241.0 223.8 238.3 227.3 236.2 232.0 234.7 236.3 232.7 239.9 230.7 244.2 229.5 248.5 229.1 252.7 228.3 257.2 227.8 261.4 226.7 265.8 226.0 270.2 225.0 274.0 225.1 278.5 226.0 282.9 226.0 287.5 226.3 291.2 226.0 295.7 226.2 300.1 226.2 304.3 228.4 308.6 229.6 313.4 231.3 318.0 233.3 322.3 234.9 325.3 237.2 328.2 240.4 331.6 242.1 335.5 245.1 338.5 248.0 341.9 250.0 344.8 252.9 348.7 255.3 351.9 258.4 355.3 261.5 359.4 263.8 362.9 267.0 366.1 269.7 370.0 272.6" stroke="#a8a8a8" stroke-width="0.65" fill="none" /><path d="M196.3 259.5 199.4 256.6 202.8 254.4 205.6 251.2 208.5 248.6 211.8 246.1 214.8 243.6 218.8 241.6 223.3 239.5 227.6 238.2 231.9 236.2 235.5 234.0 239.8 232.2 244.3 231.3 248.8 230.1 252.5 230.0 257.4 229.0 261.0 227.9 266.0 227.8 269.9 227.0 274.6 226.6 278.8 227.7 283.2 227.8 287.1 227.7 291.1 228.1 295.9 227.9 299.6 227.9 304.3 230.1 308.8 231.7 312.9 232.7 317.4 234.4 322.3 236.1 325.1 238.8 328.5 241.5 332.0 243.9 335.1 246.0 338.4 249.1 342.1 251.2 345.0 253.2 348.9 256.5 352.1 258.8 355.7 262.1 359.1 264.4 362.9 267.4 366.0 269.8 370.0 272.9" stroke="#7a7a7a" stroke-width="0.5" fill="none" /><path d="M195.9 260.5 199.1 257.3 202.1 254.9 205.7 252.4 209.1 249.9 211.5 247.1 215.0 245.0 219.4 243.1 223.4 240.7 227.9 238.9 231.4 236.9 235.9 235.4 239.8 233.1 243.8 232.7 248.8 231.6 252.6 231.5 257.3 230.2 261.9 230.0 265.9 229.0 270.4 228.4 274.4 229.1 278.9 228.5 282.5 228.7 286.8 229.5 291.5 229.3 295.6 229.5 299.9 229.9 304.3 231.6 309.1 233.2 313.4 234.1 317.5 236.2 321.9 237.6 325.0 240.2 328.4 242.2 332.1 244.4 334.7 247.1 338.4 249.3 341.6 252.3 345.3 254.8 348.8 256.7 352.0 259.8 355.3 262.8 359.1 265.4 363.0 267.7 366.3 270.5 370.0 273.3" stroke="#7a7a7a" stroke-width="0.5" fill="none" /><path d="M195.7 260.7 199.1 258.4 202.1 256.4 205.7 253.5 208.2 251.3 211.6 248.2 215.2 246.5 218.9 244.2 223.7 242.3 227.4 240.1 231.2 238.9 236.1 236.3 240.1 234.5 244.5 234.0 248.7 233.4 252.5 232.8 257.3 231.6 261.0 231.2 265.9 231.1 270.0 230.4 274.5 230.0 278.5 230.7 282.8 230.6 287.3 230.4 291.4 230.9 295.8 231.3 299.8 231.2 304.4 232.4 309.1 234.7 313.3 235.7 317.5 237.3 321.9 238.6 325.7 241.0 328.3 243.7 331.4 245.7 335.2 248.5 338.3 250.2 342.1 252.5 344.9 255.3 349.0 257.8 351.9 260.3 355.6 262.8 359.6 265.8 363.1 268.2 366.6 271.4 370.0 273.6" stroke="#7a7a7a" stroke-width="0.5" fill="none" /><path d="M195.8 262.3 199.6 259.2 204.0 256.0 207.8 253.0 211.1 250.6 215.1 246.9 218.9 245.4 223.2 243.2 227.8 241.6 232.0 239.8 235.5 238.0 240.3 236.5 244.3 235.3 248.6 234.7 252.7 233.8 256.7 234.0 261.7 232.7 265.8 231.9 270.3 231.7 274.5 231.7 278.5 232.3 282.7 231.8 286.8 232.7 291.2 232.1 295.8 232.3 299.9 233.1 304.2 234.2 309.2 236.1 313.5 236.8 318.0 238.7 321.7 240.6 324.9 242.9 328.1 244.3 331.8 247.1 335.2 249.6 338.1 251.8 341.6 254.3 345.1 256.3 348.2 259.1 352.0 261.0 355.6 264.0 359.1 266.3 363.0 268.6 366.1 271.3 370.0 273.9" stroke="#7a7a7a" stroke-width="0.5" fill="none" /><path d="M196.2 262.9 199.5 260.0 203.9 257.2 207.1 253.7 211.6 251.5 214.8 248.6 219.2 246.7 223.2 245.0 227.4 242.9 231.5 241.4 236.2 239.2 239.6 237.4 244.5 236.9 248.1 236.7 252.8 235.3 257.4 235.1 261.7 234.8 266.0 234.2 269.9 233.5 274.3 233.5 278.3 233.7 282.5 234.0 286.9 233.9 291.7 234.3 296.0 234.1 299.6 234.8 304.2 236.1 308.7 237.2 313.2 238.7 317.9 240.1 321.7 241.5 325.5 244.4 329.4 246.5 333.6 249.1 337.7 252.1 341.0 254.3 345.2 257.0 348.7 259.3 352.2 262.0 356.1 264.3 359.6 266.6 362.7 269.1 366.8 271.4 370.0 274.3" stroke="#7a7a7a" stroke-width="0.5" fill="none" /><path d="M195.8 263.5 200.0 260.9 203.3 257.9 207.6 254.9 210.9 252.7 214.6 249.2 218.9 248.1 223.2 246.0 227.5 244.7 231.3 242.3 235.7 240.9 239.7 239.0 244.3 238.1 248.4 237.4 253.2 236.8 256.8 236.7 261.2 236.1 265.6 235.8 270.1 234.7 274.0 234.9 278.8 235.3 283.0 235.3 287.5 235.4 291.5 236.0 296.0 235.8 300.3 236.2 304.2 237.2 309.0 238.6 313.1 240.1 317.2 241.2 322.4 242.5 326.1 244.8 329.5 247.8 333.3 250.7 337.7 252.6 340.8 255.7 345.3 257.9 348.2 259.8 352.3 262.8 355.7 264.9 359.1 267.3 362.8 269.9 366.4 272.1 370.0 274.6" stroke="#7a7a7a" stroke-width="0.5" fill="none" /><path d="M195.8 264.5 200.2 261.4 203.8 259.0 207.2 255.9 211.5 253.2 214.7 250.4 219.4 248.9 222.9 247.1 227.5 245.6 231.3 244.2 236.0 242.0 239.8 240.3 243.9 240.0 248.4 239.5 253.2 238.6 257.0 238.0 261.4 237.2 265.6 236.8 269.6 236.7 274.5 236.5 278.2 236.9 282.7 237.2 287.3 236.8 291.7 237.3 295.6 237.6 299.8 237.2 304.0 238.9 308.6 239.8 312.8 241.7 317.4 243.1 322.4 244.4 325.6 246.9 329.8 249.3 333.9 251.2 337.2 254.2 341.0 255.9 344.6 258.7 348.4 261.4 351.7 263.2 355.9 265.8 359.6 268.1 363.2 270.7 366.8 272.7 370.0 275.0" stroke="#a8a8a8" stroke-width="0.65" fill="none" /><path d="M195.9 265.2 199.5 262.3 203.6 259.8 207.3 256.8 211.6 254.4 215.0 251.8 219.2 250.5 223.7 248.7 227.9 246.8 231.6 245.1 236.3 243.3 239.8 242.2 244.1 241.0 248.5 240.8 252.8 240.0 257.0 239.5 261.1 239.1 265.5 238.3 270.4 238.3 274.2 238.1 278.2 237.8 282.9 238.8 286.8 238.5 291.7 238.3 295.8 238.7 300.2 239.3 304.7 240.6 308.4 241.7 313.3 242.7 317.3 244.1 321.9 245.3 326.2 247.5 330.0 249.8 333.7 252.4 337.2 254.8 340.8 256.9 344.9 259.3 348.9 262.0 352.3 264.2 355.4 265.9 358.9 268.9 362.8 271.2 366.3 272.9 370.0 275.3" stroke="#7a7a7a" stroke-width="0.5" fill="none" /><path d="M196.1 266.3 199.7 263.4 203.5 260.6 207.8 258.6 211.1 255.3 215.3 253.1 219.4 251.4 223.0 250.1 227.1 248.6 231.4 246.5 235.4 244.8 240.1 243.0 243.9 242.4 248.1 242.3 252.6 242.0 257.3 241.2 261.8 241.1 265.5 240.3 270.2 239.3 274.5 239.3 278.7 240.2 283.0 240.2 287.3 240.1 291.1 240.2 295.5 240.7 300.3 241.0 304.2 242.2 309.2 242.6 313.2 243.9 317.2 245.4 322.2 246.4 325.7 249.0 329.7 250.9 333.2 253.1 337.2 256.3 340.9 258.3 345.1 260.7 348.8 262.2 352.0 265.0 355.8 267.2 358.9 269.4 362.8 271.5 366.5 273.3 370.0 275.6" stroke="#7a7a7a" stroke-width="0.5" fill="none" /><path d="M196.0 266.4 200.2 264.6 203.7 261.9 207.6 259.2 211.0 256.9 215.4 254.6 219.4 252.4 223.2 250.9 227.6 249.9 231.8 248.1 235.8 246.1 239.8 245.3 244.7 244.4 248.7 243.5 252.4 242.8 256.7 242.4 261.9 242.3 265.5 241.3 269.6 240.7 274.0 241.1 278.3 241.2 283.0 241.2 286.8 242.0 291.2 242.0 295.5 242.2 299.6 242.0 304.7 243.2 308.9 244.2 312.8 245.6 317.6 246.4 322.0 248.0 325.7 250.5 330.0 252.3 333.3 254.9 337.6 256.8 341.3 258.9 345.2 261.3 348.9 263.2 351.8 265.8 355.8 267.8 359.5 269.9 362.7 272.1 366.5 273.8 370.0 276.0" stroke="#7a7a7a" stroke-width="0.5" fill="none" /><path d="M195.7 267.2 199.6 265.0 203.4 262.8 207.8 260.3 211.3 257.4 215.2 255.4 219.4 253.8 223.5 252.4 227.8 250.8 232.0 249.7 235.9 247.8 240.2 246.3 244.7 246.2 248.6 245.4 252.5 245.1 257.2 243.8 261.0 244.0 266.0 243.3 269.9 242.5 274.3 243.2 278.7 242.6 282.6 242.8 287.5 243.6 291.8 243.4 295.5 243.2 299.8 243.6 304.3 244.7 309.0 246.3 313.1 247.4 317.4 248.0 322.3 249.0 325.5 251.9 329.6 253.5 333.7 256.1 337.2 258.1 340.8 260.3 344.9 262.0 348.1 263.7 352.0 265.8 355.9 268.6 359.1 270.4 362.9 272.4 366.7 274.3 370.0 276.3" stroke="#7a7a7a" stroke-width="0.5" fill="none" /><path d="M196.3 268.1 200.0 266.1 203.3 263.4 207.8 261.4 211.2 258.9 215.3 256.7 218.9 255.5 223.6 253.9 227.7 252.3 231.5 251.1 236.0 248.9 240.3 247.7 243.9 247.6 248.3 246.7 252.5 246.3 257.2 246.1 261.8 245.6 265.9 244.7 270.4 244.0 274.1 244.5 278.5 244.6 282.5 244.5 286.7 244.8 291.2 245.3 295.5 244.9 300.2 245.0 304.7 246.4 308.5 247.6 313.6 248.3 317.6 249.6 322.4 251.1 325.4 252.6 329.9 254.7 333.5 256.9 336.9 258.4 341.5 260.8 344.9 263.0 348.8 265.2 351.8 267.0 355.3 268.9 359.6 270.8 362.7 273.1 366.6 275.1 370.0 276.7" stroke="#7a7a7a" stroke-width="0.5" fill="none" /><path d="M196.0 269.0 200.0 266.9 203.2 264.3 207.8 262.5 210.8 260.3 215.2 257.3 219.6 256.0 223.3 255.1 227.5 253.3 231.6 252.1 236.2 250.9 240.4 249.4 244.3 248.6 248.9 248.6 252.7 248.0 257.0 246.9 261.4 247.2 265.7 246.6 270.3 246.1 274.1 246.4 278.2 246.2 282.5 246.2 287.5 246.7 291.9 246.6 295.7 246.4 300.0 247.2 304.3 248.2 308.6 249.2 312.9 250.3 317.3 250.6 322.1 252.2 326.0 253.9 329.9 255.6 333.3 257.7 337.1 259.4 340.9 261.8 345.1 263.6 348.7 265.5 352.4 267.1 356.0 269.8 359.4 271.5 363.3 272.9 366.1 275.1 370.0 277.0" stroke="#7a7a7a" stroke-width="0.5" fill="none" /><path d="M196.2 270.1 199.8 267.7 203.6 265.9 207.0 263.5 210.8 261.4 214.8 259.2 219.0 257.6 223.3 256.6 227.5 254.8 231.7 253.2 236.2 251.8 239.7 250.3 244.5 250.5 248.7 250.1 252.6 249.6 257.4 248.5 261.1 248.3 265.6 247.9 270.2 247.2 274.1 247.4 278.3 247.7 282.9 247.7 286.8 248.2 291.1 248.4 295.8 248.0 299.6 248.7 304.0 249.6 308.8 250.5 312.9 251.5 317.4 252.4 322.4 253.4 325.5 254.9 329.6 257.4 333.8 258.9 337.4 260.7 341.2 262.6 345.4 264.5 348.4 266.5 351.9 267.9 355.7 270.4 359.2 271.7 362.7 273.8 366.2 275.6 370.0 277.4" stroke="#a8a8a8" stroke-width="0.65" fill="none" /><path d="M196.0 270.4 199.6 269.0 203.3 266.8 207.0 264.4 211.1 262.4 214.6 259.7 219.1 259.1 223.3 257.7 227.5 256.5 231.3 255.1 235.6 253.1 240.0 252.0 244.7 252.0 248.8 251.0 252.6 250.7 257.0 250.1 261.2 249.7 265.5 249.1 269.8 249.4 274.6 249.3 279.0 249.7 282.5 249.0 287.0 249.6 291.9 249.3 295.9 250.1 299.8 250.2 304.7 250.5 308.9 251.8 313.4 252.4 317.7 253.2 321.6 254.5 325.7 256.4 329.4 258.7 333.4 260.0 337.2 262.2 340.9 264.0 344.7 265.8 349.1 267.6 353.1 269.8 357.2 271.8 361.8 274.0 366.3 275.9 370.0 277.7" stroke="#7a7a7a" stroke-width="0.5" fill="none" /><path d="M195.7 271.9 199.4 269.8 204.0 267.2 207.0 265.7 211.1 263.5 215.3 261.6 219.2 260.3 223.7 258.9 227.4 257.7 231.6 256.4 235.7 254.8 239.6 253.1 244.7 253.0 248.8 252.6 253.1 252.3 256.8 251.7 261.5 251.1 266.1 250.6 270.1 251.0 274.5 250.4 278.2 251.1 282.8 250.6 286.8 251.3 291.0 251.1 296.1 251.2 300.3 251.1 304.1 252.0 309.0 253.3 313.4 254.4 317.8 254.7 322.0 255.5 326.1 257.5 329.6 259.7 333.9 261.2 337.2 263.2 341.5 264.3 345.0 266.7 349.6 268.6 353.3 269.9 357.9 271.9 361.8 274.0 366.1 276.0 370.0 278.0" stroke="#7a7a7a" stroke-width="0.5" fill="none" /><path d="M195.9 272.8 200.0 270.9 203.3 268.1 207.6 266.4 211.6 264.4 214.6 262.4 218.9 261.4 223.6 260.2 227.1 258.7 231.4 257.9 235.5 256.3 240.2 254.7 244.4 254.2 248.2 254.0 252.5 253.7 257.3 253.8 261.2 253.0 265.9 252.4 269.8 252.1 274.6 252.2 278.8 252.1 282.7 252.4 286.9 252.4 291.3 253.1 295.9 253.4 299.8 252.9 304.2 253.9 308.5 255.0 313.1 255.2 317.6 256.3 321.7 257.1 326.0 259.3 329.8 260.3 333.1 262.0 337.1 263.8 341.1 265.3 344.7 267.6 349.6 269.2 353.7 271.0 357.7 272.7 361.8 275.0 366.0 276.8 370.0 278.4" stroke="#7a7a7a" stroke-width="0.5" fill="none" /><path d="M196.1 273.1 200.1 271.7 203.4 269.1 207.0 267.2 210.9 265.2 214.7 263.4 218.9 262.8 222.9 260.7 227.9 259.9 231.9 258.6 235.4 257.2 240.4 256.0 244.2 255.8 248.7 255.5 253.1 255.0 257.2 255.3 261.5 254.9 265.3 254.5 269.9 254.2 274.5 253.7 278.8 253.7 282.9 254.4 286.8 253.9 291.7 254.1 295.9 254.5 299.7 254.9 304.3 255.2 309.2 256.6 313.0 257.4 317.2 258.0 322.1 258.3 325.7 260.0 329.8 261.6 333.4 263.4 337.2 264.5 341.2 266.8 344.8 267.8 349.5 269.5 353.7 271.4 357.2 273.6 362.0 275.1 365.6 276.6 370.0 278.7" stroke="#7a7a7a" stroke-width="0.5" fill="none" /><path d="M195.6 274.3 200.0 272.0 203.6 270.6 207.6 268.6 211.6 266.4 215.4 264.8 219.0 263.7 223.2 262.4 227.8 261.6 231.8 260.4 236.2 258.9 239.6 258.2 243.9 257.4 248.2 257.2 253.1 256.4 257.1 256.3 261.6 256.4 265.9 255.3 269.9 255.3 274.0 255.8 278.4 255.5 282.6 255.7 287.4 255.5 291.4 255.8 295.3 256.0 300.1 256.3 304.8 257.1 309.2 257.9 313.4 258.8 317.9 259.4 321.8 259.7 326.2 260.9 329.6 263.2 333.3 264.4 337.2 266.0 341.5 267.0 344.9 269.2 349.1 271.0 353.1 272.3 357.2 274.3 361.6 276.0 366.0 277.1 370.0 279.1" stroke="#7a7a7a" stroke-width="0.5" fill="none" /><path d="M196.3 274.5 200.2 273.3 203.4 271.4 207.3 269.5 211.6 267.7 215.1 265.5 218.8 264.8 223.3 264.1 227.6 262.9 231.7 261.9 235.7 259.9 240.2 259.4 244.0 258.7 248.5 259.0 253.0 258.2 257.2 257.8 261.3 257.3 265.9 256.9 270.0 256.6 274.0 257.3 278.9 257.2 283.3 257.5 287.2 257.5 291.0 257.1 295.9 257.5 300.4 257.5 304.2 258.2 309.2 259.2 313.0 259.4 317.7 260.1 322.3 260.9 326.1 262.9 329.5 264.1 333.7 265.4 337.3 267.2 340.9 268.3 344.6 269.8 349.6 271.2 353.5 272.8 357.4 274.5 362.0 276.0 365.4 277.8 370.0 279.4" stroke="#7a7a7a" stroke-width="0.5" fill="none" /><path d="M196.1 275.8 199.8 273.8 203.8 272.0 207.2 270.2 210.8 268.5 215.2 267.0 219.1 265.8 223.1 265.1 227.9 263.6 231.8 263.2 235.9 262.1 239.7 261.0 243.9 260.1 248.2 259.6 253.1 259.6 257.0 259.7 261.2 259.5 265.4 259.3 270.3 258.5 274.7 259.0 279.0 258.6 282.8 258.7 287.1 259.0 291.8 258.9 295.8 259.0 300.0 258.9 304.4 260.0 308.9 260.9 313.2 261.0 318.0 261.8 321.7 262.5 326.0 263.6 329.4 264.8 333.6 266.4 337.6 267.6 341.3 268.9 344.7 270.2 349.3 272.3 353.3 273.9 357.8 275.5 361.8 276.6 365.8 278.5 370.0 279.7" stroke="#a8a8a8" stroke-width="0.65" fill="none" /><path d="M195.8 276.3 200.2 275.2 203.7 273.5 207.0 271.8 211.3 269.7 214.8 268.4 219.5 267.4 222.9 266.3 227.4 264.9 231.3 264.2 235.6 263.0 240.0 262.5 244.1 261.9 248.7 261.8 253.2 261.0 257.5 260.6 261.4 260.9 266.1 260.3 270.2 260.3 273.9 260.4 278.9 260.0 282.7 260.4 287.5 260.9 291.1 260.5 295.4 260.3 299.7 261.2 304.8 261.2 308.9 262.2 313.2 262.9 317.2 263.0 321.7 264.2 326.1 265.0 329.3 266.7 333.8 267.9 337.7 269.0 341.2 270.4 344.7 271.7 349.0 272.8 353.7 273.9 357.4 276.0 361.6 277.6 366.0 278.4 370.0 280.1" stroke="#7a7a7a" stroke-width="0.5" fill="none" /><path d="M196.0 277.2 199.9 275.9 203.6 273.8 207.7 272.3 211.3 271.3 215.0 269.0 219.2 268.1 223.0 267.2 227.2 266.6 231.9 265.5 236.2 264.2 239.8 263.4 244.3 263.5 248.4 263.0 252.8 262.6 256.7 262.7 261.0 262.2 265.5 261.9 270.2 262.0 274.6 261.9 278.4 261.5 282.5 262.3 287.0 262.0 291.3 262.1 295.4 262.1 300.0 262.4 304.0 262.6 308.4 263.5 313.3 264.4 317.5 264.7 322.3 265.2 325.9 266.0 329.8 267.7 333.3 268.8 337.1 269.5 341.0 271.1 344.9 272.0 349.6 273.8 353.1 274.6 357.7 276.7 361.9 277.9 366.3 279.2 370.0 280.4" stroke="#7a7a7a" stroke-width="0.5" fill="none" /><path d="M195.7 278.1 199.7 276.7 203.3 275.2 207.6 273.4 211.3 271.9 215.2 270.5 219.6 269.6 222.9 268.3 227.7 267.4 231.9 266.9 235.7 265.9 240.3 265.1 244.2 264.8 248.6 264.5 253.0 264.2 256.9 263.7 261.4 263.5 265.4 263.2 269.9 263.6 274.3 263.2 278.5 263.4 282.5 263.8 287.1 264.1 291.5 263.5 296.1 263.5 299.7 263.6 304.1 264.1 309.2 264.6 313.2 265.1 317.4 265.6 321.9 266.3 326.8 268.2 330.9 269.1 335.9 270.9 340.0 271.9 344.9 273.1 349.3 274.6 353.2 275.9 357.6 276.7 361.4 277.9 366.1 279.8 370.0 280.8" stroke="#7a7a7a" stroke-width="0.5" fill="none" /><path d="M195.7 279.0 199.4 277.1 203.8 276.1 207.3 274.5 211.2 273.1 214.8 272.1 218.8 270.9 223.0 269.9 227.1 268.8 231.8 267.8 235.8 267.5 240.1 266.1 244.2 266.1 248.8 266.3 252.9 266.0 257.1 266.0 261.6 265.7 265.4 265.3 270.2 265.0 274.6 264.7 278.2 265.1 282.6 265.6 287.5 265.2 291.7 265.4 296.1 265.5 299.7 266.0 304.2 265.6 309.1 266.6 313.5 266.6 318.0 267.6 322.1 267.3 326.8 268.9 330.9 270.1 336.2 271.3 340.4 273.1 345.2 273.8 349.0 275.2 353.4 276.5 357.6 277.2 362.0 279.0 365.8 279.6 370.0 281.1" stroke="#7a7a7a" stroke-width="0.5" fill="none" /><path d="M196.0 280.1 199.6 278.2 203.8 277.2 207.7 275.5 211.4 274.0 214.6 273.1 218.9 272.4 223.2 271.1 227.8 270.0 232.1 269.4 235.4 268.6 239.7 267.7 244.3 267.8 248.3 267.9 252.5 266.9 256.9 266.6 261.8 266.6 265.3 266.8 269.9 266.1 274.3 266.2 278.2 266.6 282.6 266.6 287.1 267.2 291.5 267.0 295.5 267.0 299.8 267.4 304.8 267.8 308.7 268.1 313.0 268.5 318.0 268.4 321.6 269.5 326.7 270.5 331.5 271.6 335.4 272.3 340.3 274.0 345.2 274.5 348.8 276.2 353.7 276.6 357.3 277.8 361.6 278.8 365.7 280.0 370.0 281.5" stroke="#7a7a7a" stroke-width="0.5" fill="none" /><path d="M195.6 281.0 199.5 279.6 203.8 277.8 207.3 276.5 211.0 275.4 214.7 274.1 219.2 273.0 223.7 272.3 227.6 271.9 231.9 271.0 235.8 270.1 240.2 269.0 244.3 269.5 248.5 269.0 253.0 269.0 257.0 268.7 261.7 268.5 265.5 268.7 269.9 268.2 273.9 268.3 278.6 268.6 282.6 267.9 287.0 268.3 291.6 268.3 296.0 268.9 299.6 269.1 304.0 268.8 308.4 269.6 313.6 269.5 317.7 270.5 322.2 270.2 326.6 271.8 331.5 272.5 335.9 273.2 340.3 274.9 344.6 275.4 349.2 276.2 353.0 277.9 357.2 278.7 362.1 279.8 366.0 280.4 370.0 281.8" stroke="#7a7a7a" stroke-width="0.5" fill="none" /><path d="M196.0 281.4 200.7 279.8 205.1 278.4 210.1 276.9 214.8 275.6 219.1 274.8 223.4 273.6 227.4 272.8 231.7 272.2 235.6 272.0 240.4 270.8 244.3 270.9 248.7 270.4 252.9 270.6 256.8 270.0 261.1 270.0 265.3 269.7 269.7 269.5 274.7 269.5 278.5 270.0 282.6 269.6 287.1 270.0 291.2 269.8 295.3 269.9 299.9 270.3 304.2 270.5 309.1 270.6 313.4 271.3 318.0 271.6 322.1 271.8 326.5 273.0 330.9 273.5 335.5 274.6 340.8 275.7 344.6 276.8 348.8 277.2 353.3 277.9 357.8 279.5 362.1 280.4 365.8 281.0 370.0 282.1" stroke="#a8a8a8" stroke-width="0.65" fill="none" /><path d="M195.8 282.3 201.0 280.4 205.5 279.4 210.0 278.0 214.8 276.2 218.9 276.1 222.9 274.8 227.6 274.3 231.4 273.6 235.8 273.0 239.9 272.0 244.5 271.9 248.8 271.8 253.2 271.6 257.3 272.1 261.2 271.8 265.8 270.9 270.1 271.1 273.9 271.5 278.7 271.7 282.5 271.3 287.2 271.4 291.1 271.5 295.7 271.7 299.9 271.7 304.4 272.2 308.6 272.2 313.5 272.8 317.9 273.2 322.0 273.3 326.9 273.8 331.4 274.7 335.9 275.3 340.6 276.3 344.9 277.4 349.4 278.6 353.7 279.2 357.3 279.9 361.8 280.6 366.2 281.5 370.0 282.5" stroke="#7a7a7a" stroke-width="0.5" fill="none" /><path d="M196.0 283.4 200.5 281.6 205.9 280.7 210.2 279.1 215.1 277.2 219.5 277.2 223.7 276.0 227.5 275.9 232.0 275.3 235.4 274.5 239.9 273.4 244.3 273.2 248.4 273.4 252.8 273.1 257.1 273.2 261.1 272.8 265.6 272.5 270.0 273.1 274.1 273.2 278.5 272.9 283.1 272.9 287.1 273.5 291.0 273.1 295.5 273.2 300.0 273.5 304.2 273.9 309.2 274.0 313.3 274.2 317.2 274.3 322.0 274.2 326.8 275.0 331.6 275.5 335.6 276.6 340.1 277.1 345.2 278.0 348.8 279.1 353.7 279.8 357.6 280.3 362.0 281.5 366.1 282.1 370.0 282.8" stroke="#7a7a7a" stroke-width="0.5" fill="none" /><path d="M195.8 283.8 200.6 282.6 205.2 281.0 210.3 279.7 214.7 278.7 219.1 278.4 223.8 277.6 227.6 276.9 231.8 276.2 236.2 275.7 239.8 275.1 244.6 274.6 249.0 275.1 252.9 274.6 256.9 274.6 261.6 274.7 265.7 274.4 269.9 274.0 274.2 274.6 278.1 274.9 282.4 274.5 287.0 274.7 291.2 274.8 295.3 275.1 300.4 275.2 304.6 274.7 308.9 275.3 313.5 275.3 317.9 275.3 321.6 275.4 327.0 276.2 330.9 276.7 336.2 278.0 340.3 278.0 345.3 278.6 349.4 279.7 353.2 280.0 357.6 281.4 361.6 282.1 365.5 282.3 370.0 283.2" stroke="#7a7a7a" stroke-width="0.5" fill="none" /><path d="M195.9 284.3 201.2 283.4 205.1 282.4 209.9 280.9 215.3 279.7 219.0 279.6 223.1 279.2 227.1 277.8 232.1 277.8 235.9 277.4 239.8 276.9 244.1 276.8 248.6 276.8 253.3 276.6 256.8 276.2 261.8 276.1 265.5 276.0 269.7 275.6 274.4 275.6 278.5 275.9 283.1 276.0 287.1 276.3 291.1 276.3 295.4 276.3 300.3 276.8 304.8 276.8 308.4 276.6 313.1 276.6 317.6 277.0 321.6 277.1 326.2 277.8 331.6 278.3 336.0 279.2 340.8 279.1 345.1 279.9 349.2 280.4 352.9 280.9 357.1 282.0 361.9 281.9 366.0 283.2 370.0 283.5" stroke="#7a7a7a" stroke-width="0.5" fill="none" /><path d="M196.1 285.6 200.7 284.2 205.4 282.9 210.1 281.9 214.9 280.9 219.0 281.0 223.1 279.9 227.8 279.4 231.3 279.1 235.7 278.8 239.8 277.9 244.3 278.1 248.2 277.5 253.1 277.6 257.5 278.0 261.5 277.3 265.5 277.2 270.1 277.6 274.5 277.5 278.9 278.0 283.0 277.7 287.5 277.8 291.0 278.2 295.3 277.8 299.9 278.3 304.5 278.1 309.2 278.5 313.3 278.1 317.4 278.6 322.2 278.7 326.5 279.2 330.8 279.1 336.2 280.0 340.1 280.1 344.7 280.9 349.3 281.3 353.2 281.4 357.3 282.7 361.9 282.9 365.9 283.2 370.0 283.8" stroke="#7a7a7a" stroke-width="0.5" fill="none" /><path d="M195.6 286.0 200.6 284.8 205.4 284.1 210.2 283.1 215.3 282.2 219.5 281.8 223.2 281.2 227.7 280.5 231.9 280.8 236.0 280.1 240.3 279.0 244.3 279.3 248.3 279.3 252.4 279.5 256.8 279.1 261.1 279.7 265.5 279.2 269.6 278.9 274.2 278.7 278.9 279.4 282.4 279.2 286.8 279.3 291.7 279.1 296.0 279.5 300.1 280.0 304.1 279.8 309.2 279.6 313.0 279.8 317.6 279.2 322.4 279.3 326.8 279.7 331.2 280.4 335.6 280.9 340.8 281.0 345.1 282.0 348.8 282.4 353.7 282.6 357.1 282.7 361.4 283.3 365.6 284.1 370.0 284.2" stroke="#7a7a7a" stroke-width="0.5" fill="none" /><path d="M196.4 286.7 201.0 286.1 205.5 285.2 210.1 284.3 215.1 283.2 218.9 282.8 223.1 282.7 227.5 282.4 231.8 281.8 235.6 281.2 239.6 281.2 244.7 281.0 248.6 280.7 252.9 281.1 257.1 280.9 261.0 280.5 265.8 281.1 269.8 280.7 274.1 280.4 278.4 281.0 282.7 280.8 287.2 281.0 291.5 281.1 296.1 281.2 300.1 281.5 304.3 281.1 308.4 281.1 313.3 281.4 317.2 280.7 322.2 281.2 326.8 281.0 331.6 281.6 336.1 282.1 340.5 282.1 345.1 282.1 349.4 283.2 353.4 283.3 357.7 283.6 361.3 284.1 366.1 283.9 370.0 284.5" stroke="#a8a8a8" stroke-width="0.65" fill="none" /><path d="M196.0 287.5 200.5 286.9 205.5 286.4 210.6 285.6 214.8 284.4 218.8 284.2 223.2 283.9 227.4 283.6 231.9 283.0 235.8 282.9 239.7 282.5 243.9 282.2 248.5 282.3 252.8 282.7 256.9 282.6 261.6 282.0 265.5 282.5 270.1 282.4 274.6 282.0 278.3 282.8 282.7 282.5 286.9 282.1 291.7 282.8 295.5 282.2 300.2 282.4 304.6 282.3 309.2 282.2 313.1 282.2 317.7 282.6 321.7 282.3 327.0 282.4 331.4 282.9 335.6 283.2 340.7 283.0 344.7 282.9 349.5 283.6 353.4 283.7 357.1 283.8 361.3 284.7 366.2 284.5 370.0 284.9" stroke="#7a7a7a" stroke-width="0.5" fill="none" /><path d="M196.1 288.7 201.2 288.3 205.2 287.6 210.4 286.3 215.3 285.3 219.4 285.7 223.0 284.9 227.9 285.1 231.8 284.8 235.5 284.0 240.3 283.4 244.1 283.5 248.7 284.3 252.9 284.1 256.8 283.8 261.8 284.3 265.5 283.5 269.8 284.2 273.9 283.7 278.4 283.9 283.1 284.0 287.4 284.0 291.7 284.0 295.8 284.0 299.9 283.9 304.7 283.9 309.2 284.1 312.8 284.2 317.9 283.8 321.8 283.9 326.4 284.0 331.5 283.4 335.7 284.3 340.7 283.8 344.9 284.5 348.7 284.0 353.5 284.4 357.6 284.6 361.7 285.0 366.0 284.7 370.0 285.2" stroke="#7a7a7a" stroke-width="0.5" fill="none" /><path d="M196.1 289.9 201.2 288.4 205.5 287.9 210.7 287.3 215.4 286.8 219.5 286.2 223.4 286.4 227.4 285.9 232.0 285.4 236.1 285.9 240.3 285.4 244.2 285.2 248.3 285.1 252.9 284.9 256.7 285.5 261.8 285.6 265.3 285.1 269.6 285.5 274.5 285.4 278.2 285.9 283.1 285.3 287.5 286.0 291.2 285.7 295.3 285.6 299.7 286.2 304.6 285.4 309.0 285.1 312.8 285.2 317.9 285.4 321.8 284.7 326.5 284.8 331.4 284.9 335.6 284.7 340.5 284.6 344.7 284.7 348.9 284.7 353.4 285.3 357.3 285.7 361.5 285.4 366.0 285.6 370.0 285.6" stroke="#7a7a7a" stroke-width="0.5" fill="none" /><path d="M196.4 289.9 200.4 289.3 205.1 289.0 210.3 288.8 215.3 288.1 219.2 287.8 223.1 287.3 227.4 287.0 231.8 286.9 236.3 286.8 240.2 286.5 244.0 286.7 248.6 287.2 252.6 286.4 256.8 287.2 261.0 287.3 265.4 287.3 269.9 287.4 274.2 286.9 278.1 287.0 282.8 287.5 287.2 287.5 291.4 287.3 295.8 286.9 300.1 287.5 304.3 286.8 308.5 286.8 313.6 286.6 317.4 286.4 322.2 286.5 326.3 286.1 330.8 285.9 335.8 285.7 340.1 286.2 344.7 286.1 348.8 285.5 353.1 286.1 357.1 285.6 361.8 285.8 366.2 285.7 370.0 285.9" stroke="#7a7a7a" stroke-width="0.5" fill="none" /><path d="M195.6 291.3 200.7 290.6 205.2 290.5 210.5 289.4 214.9 288.9 219.6 288.7 223.2 288.6 227.5 288.8 231.4 288.6 236.0 288.1 240.4 288.0 244.3 288.6 248.4 287.8 252.6 288.0 256.8 288.8 261.6 288.2 265.6 288.4 269.7 288.4 273.9 289.0 278.5 288.7 283.2 288.8 287.1 289.0 291.5 288.6 295.9 288.5 300.1 288.6 304.4 288.3 308.8 288.2 313.4 287.9 317.2 287.9 321.9 287.7 326.7 286.9 331.3 286.7 336.2 287.1 340.5 286.7 344.6 286.5 349.0 286.3 353.8 286.3 357.5 286.2 362.0 286.0 366.3 286.0 370.0 286.2" stroke="#7a7a7a" stroke-width="0.5" fill="none" /><path d="M195.8 291.8 200.6 291.1 205.8 290.7 210.1 290.3 214.6 290.2 219.2 289.8 223.3 290.0 227.9 290.4 231.8 290.0 235.4 289.7 240.4 289.9 244.5 289.9 249.0 289.8 252.6 290.0 256.9 290.3 261.2 290.3 265.9 290.2 269.7 290.1 274.3 290.7 278.8 290.5 283.3 290.2 287.3 290.4 291.4 290.2 295.6 290.0 300.4 290.2 304.7 290.0 308.6 289.4 313.2 289.2 317.5 289.4 322.4 288.4 326.8 288.9 331.5 288.6 336.0 288.0 340.0 287.5 345.3 287.4 349.1 287.5 353.2 287.0 357.3 287.4 361.6 287.1 366.0 286.6 370.0 286.6" stroke="#7a7a7a" stroke-width="0.5" fill="none" /><path d="M195.9 292.7 200.8 292.5 205.2 292.1 210.5 291.6 214.9 291.8 219.3 291.5 223.0 291.5 227.7 290.9 231.4 291.5 235.8 291.4 239.6 291.4 244.4 290.9 248.7 291.2 252.6 291.8 256.7 291.3 261.7 291.9 265.4 292.1 269.6 291.6 274.6 291.5 278.4 291.7 282.9 291.7 286.9 291.9 291.4 292.1 295.4 291.5 300.2 292.1 304.6 291.7 308.4 290.9 313.6 290.9 317.5 290.7 321.8 290.6 326.8 289.6 331.4 289.4 335.6 288.8 340.1 288.7 344.9 288.7 349.0 288.2 353.7 288.1 357.6 288.0 361.8 287.7 366.0 286.9 370.0 286.9" stroke="#a8a8a8" stroke-width="0.65" fill="none" /><path d="M196.1 293.7 200.9 293.2 205.1 293.2 210.5 293.2 215.1 292.7 218.9 292.4 223.6 292.2 227.4 292.4 231.6 293.0 235.4 292.7 240.2 292.1 244.0 292.4 248.3 292.6 253.1 293.3 257.2 292.9 261.5 292.9 265.8 293.0 270.0 293.3 274.3 293.4 278.7 293.3 282.7 293.3 287.2 293.1 291.6 293.6 295.5 293.9 300.2 293.9 304.3 293.5 308.6 292.7 313.2 292.1 317.6 292.3 321.6 291.7 326.3 291.1 331.4 290.6 336.1 290.4 340.0 289.4 345.2 289.4 349.2 288.5 353.0 288.4 357.5 288.4 361.4 288.0 366.0 287.5 370.0 287.3" stroke="#7a7a7a" stroke-width="0.5" fill="none" /><path d="M196.3 294.1 201.0 294.0 205.7 294.0 210.1 294.3 214.9 294.1 219.2 293.5 223.2 293.6 227.2 293.4 231.7 293.9 236.0 293.8 239.6 294.2 244.5 294.4 248.5 294.0 253.2 294.0 257.2 294.1 261.3 295.0 266.1 294.8 269.6 294.9 274.7 295.3 278.2 294.8 282.8 294.6 287.0 295.1 291.2 295.3 296.1 294.9 300.0 295.3 304.1 294.7 308.9 294.5 313.3 294.1 317.8 292.9 322.2 292.8 326.7 292.2 331.3 291.6 335.7 291.5 340.1 290.5 344.9 289.6 348.8 289.6 353.8 289.3 357.3 288.4 361.5 288.8 365.7 288.3 370.0 287.6" stroke="#7a7a7a" stroke-width="0.5" fill="none" /><path d="M196.1 294.8 201.1 295.1 205.1 295.4 210.4 294.7 214.9 294.9 218.9 295.2 223.7 295.3 227.2 295.6 231.8 294.9 236.1 295.7 240.3 295.8 244.3 295.1 248.9 295.8 253.3 296.3 257.3 295.7 261.8 295.8 265.6 296.3 269.7 296.3 274.5 296.2 278.7 296.3 282.5 297.0 286.9 296.1 291.5 296.6 295.8 297.1 299.8 296.7 304.7 295.9 308.9 295.5 313.6 294.7 317.3 294.8 321.6 294.2 326.5 293.6 331.3 293.0 336.2 291.9 340.0 291.4 344.6 290.8 349.6 290.2 353.2 289.5 357.7 289.4 361.7 289.3 365.6 288.6 370.0 287.9" stroke="#7a7a7a" stroke-width="0.5" fill="none" /><path d="M195.8 296.3 201.2 295.9 205.9 295.8 209.8 296.0 214.8 295.9 219.0 296.0 223.2 296.6 227.3 296.6 232.0 296.6 235.5 296.5 239.7 296.6 244.5 297.1 248.5 296.7 252.9 297.7 257.1 297.6 261.5 297.7 266.1 297.5 269.9 298.5 273.9 298.5 278.6 298.1 283.2 298.6 286.8 297.9 291.0 298.0 295.8 298.1 300.1 297.8 304.0 297.6 308.6 297.0 313.3 296.6 317.2 295.6 321.6 295.6 327.0 295.0 331.2 294.2 335.9 292.8 340.0 292.7 345.0 291.9 349.1 291.0 353.1 290.6 357.5 290.1 361.6 289.7 365.5 289.2 370.0 288.3" stroke="#7a7a7a" stroke-width="0.5" fill="none" /><path d="M195.7 296.7 200.5 296.5 205.1 296.6 210.3 296.9 215.1 297.4 219.5 297.3 223.1 297.8 227.8 298.1 232.0 298.2 235.4 298.1 240.2 298.6 244.3 298.2 248.2 298.4 252.5 298.8 256.8 299.4 261.1 299.4 265.5 299.3 269.7 299.6 274.5 299.7 278.6 299.4 282.7 300.0 286.8 299.9 291.7 299.8 295.6 299.5 300.2 299.9 304.1 299.0 309.1 298.2 313.6 298.1 317.3 297.7 321.9 296.9 326.6 295.6 331.1 294.8 336.0 294.7 340.0 293.2 344.9 292.7 349.1 292.1 353.8 290.9 357.2 290.6 361.8 290.2 365.8 289.6 370.0 288.6" stroke="#7a7a7a" stroke-width="0.5" fill="none" /><path d="M196.4 297.9 200.6 298.2 205.6 298.3 210.5 297.8 215.4 298.8 219.3 298.9 223.2 298.9 227.4 298.9 231.6 299.2 236.1 299.4 239.7 299.9 244.5 300.3 248.7 299.7 252.5 300.7 257.3 300.5 261.8 300.4 266.0 300.8 269.6 301.6 274.6 300.8 278.7 301.7 283.2 301.3 287.4 301.6 291.4 301.7 295.4 301.0 299.9 301.7 304.0 300.5 308.8 300.4 313.2 299.8 317.2 298.6 321.7 297.8 326.9 297.0 331.2 296.2 335.4 295.7 340.5 294.8 344.7 293.6 349.4 292.9 353.3 292.2 357.9 291.4 361.9 290.2 365.9 289.9 370.0 289.0" stroke="#7a7a7a" stroke-width="0.5" fill="none" /><path d="M195.7 298.6 200.4 298.9 205.4 298.6 210.1 299.6 214.9 299.7 219.1 299.5 223.3 300.1 227.7 300.2 231.2 300.9 236.0 300.4 239.7 301.4 244.1 301.2 248.7 302.0 253.0 301.4 257.1 302.5 261.6 302.4 265.9 302.8 269.6 303.2 274.0 302.8 278.3 302.4 282.6 302.8 287.3 302.8 291.4 303.2 295.8 303.0 300.1 302.7 304.8 302.0 308.5 301.8 313.2 301.0 317.6 299.8 321.9 299.2 326.5 298.3 330.8 297.1 336.0 296.3 340.2 295.6 344.8 294.7 349.6 293.5 353.3 293.0 357.6 291.4 361.7 291.3 366.1 290.4 370.0 289.3" stroke="#a8a8a8" stroke-width="0.65" fill="none" /><path d="M195.8 299.5 201.0 299.5 205.8 299.9 210.0 300.5 215.3 301.1 219.4 301.5 223.6 301.8 227.4 301.5 231.5 301.9 235.7 302.2 239.6 302.6 244.4 302.7 248.4 303.5 253.1 303.6 257.3 303.2 261.2 304.1 266.0 303.9 270.1 304.6 274.6 304.1 278.8 304.5 283.3 304.0 287.3 304.8 291.7 304.2 295.7 304.9 300.1 304.4 304.3 303.7 308.4 302.8 313.6 302.5 317.3 301.6 322.4 300.4 326.4 299.6 331.0 298.6 336.0 297.3 340.7 296.7 344.7 295.3 348.8 294.4 352.9 293.2 357.7 292.5 361.6 291.2 366.1 290.6 370.0 289.7" stroke="#7a7a7a" stroke-width="0.5" fill="none" /><path d="M195.7 300.3 201.0 300.7 205.4 301.2 209.9 301.3 215.2 301.9 219.0 301.9 223.1 302.9 227.1 303.1 231.6 303.2 235.7 304.1 240.4 304.0 244.6 304.3 248.9 305.0 252.7 304.9 257.0 305.3 261.2 305.7 266.1 305.4 270.2 305.6 273.9 305.6 278.6 306.3 282.5 306.4 287.1 305.7 291.6 306.3 295.7 306.0 300.3 306.4 304.1 305.3 309.2 304.8 312.9 304.0 317.7 303.2 321.9 302.4 326.8 300.6 331.2 299.2 336.0 298.5 340.2 297.3 345.4 295.8 349.1 294.8 353.6 293.7 357.9 293.1 362.1 291.8 365.7 290.8 370.0 290.0" stroke="#7a7a7a" stroke-width="0.5" fill="none" /></g><path d="M196.0 236.0 C198.8 232.0 207.0 219.8 213.0 212.0 C219.0 204.2 225.5 194.7 232.0 189.0 C238.5 183.3 245.7 180.4 252.0 178.0 C258.3 175.6 263.9 174.9 270.0 174.5 C276.1 174.1 283.1 174.7 288.6 175.4 C294.1 176.2 298.9 177.4 303.0 179.0 C307.1 180.6 309.6 182.5 313.0 185.0 C316.4 187.5 319.9 190.2 323.5 194.0 C327.1 197.8 330.8 202.8 334.5 207.5 C338.2 212.2 341.8 217.2 345.5 222.0 C349.2 226.8 352.9 231.5 356.5 236.0 C360.1 240.5 363.6 244.8 367.0 249.0 C370.4 253.2 375.3 259.0 377.0 261.0" stroke="#9a9a9a" stroke-width="6.0" fill="none" /><path d="M196.0 236.0 C198.8 232.0 207.0 219.8 213.0 212.0 C219.0 204.2 225.5 194.7 232.0 189.0 C238.5 183.3 245.7 180.4 252.0 178.0 C258.3 175.6 263.9 174.9 270.0 174.5 C276.1 174.1 283.1 174.7 288.6 175.4 C294.1 176.2 298.9 177.4 303.0 179.0 C307.1 180.6 309.6 182.5 313.0 185.0 C316.4 187.5 319.9 190.2 323.5 194.0 C327.1 197.8 330.8 202.8 334.5 207.5 C338.2 212.2 341.8 217.2 345.5 222.0 C349.2 226.8 352.9 231.5 356.5 236.0 C360.1 240.5 363.6 244.8 367.0 249.0 C370.4 253.2 375.3 259.0 377.0 261.0" stroke="#242424" stroke-width="4.2" fill="none" /><path d="M196.0 236.0 C198.8 232.0 207.0 219.8 213.0 212.0 C219.0 204.2 225.5 194.7 232.0 189.0 C238.5 183.3 245.7 180.4 252.0 178.0 C258.3 175.6 263.9 174.9 270.0 174.5 C276.1 174.1 283.1 174.7 288.6 175.4 C294.1 176.2 298.9 177.4 303.0 179.0 C307.1 180.6 309.6 182.5 313.0 185.0 C316.4 187.5 319.9 190.2 323.5 194.0 C327.1 197.8 330.8 202.8 334.5 207.5 C338.2 212.2 341.8 217.2 345.5 222.0 C349.2 226.8 352.9 231.5 356.5 236.0 C360.1 240.5 363.6 244.8 367.0 249.0 C370.4 253.2 375.3 259.0 377.0 261.0" stroke="#8a8a8a" stroke-width="2.0" fill="none" /><path d="M196.0 236.0 C198.8 232.0 207.0 219.8 213.0 212.0 C219.0 204.2 225.5 194.7 232.0 189.0 C238.5 183.3 245.7 180.4 252.0 178.0 C258.3 175.6 263.9 174.9 270.0 174.5 C276.1 174.1 283.1 174.7 288.6 175.4 C294.1 176.2 298.9 177.4 303.0 179.0 C307.1 180.6 309.6 182.5 313.0 185.0 C316.4 187.5 319.9 190.2 323.5 194.0 C327.1 197.8 330.8 202.8 334.5 207.5 C338.2 212.2 341.8 217.2 345.5 222.0 C349.2 226.8 352.9 231.5 356.5 236.0 C360.1 240.5 363.6 244.8 367.0 249.0 C370.4 253.2 375.3 259.0 377.0 261.0" stroke="#2a2a2a" stroke-width="0.8" fill="none" /><path d="M190.0 238.0 C192.8 234.0 201.0 221.8 207.0 214.0 C213.0 206.2 219.5 196.7 226.0 191.0 C232.5 185.3 242.7 181.8 246.0 180.0" stroke="#8a8a8a" stroke-width="1.2" fill="none" /><path d="M199.0 240.0 C201.2 242.3 206.8 248.5 212.0 254.0 C217.2 259.5 224.0 266.7 230.0 273.0 C236.0 279.3 242.3 286.2 248.0 292.0 C253.7 297.8 261.3 305.3 264.0 308.0" stroke="#8a8a8a" stroke-width="4.5" fill="none" /><path d="M199.0 240.0 C201.2 242.3 206.8 248.5 212.0 254.0 C217.2 259.5 224.0 266.7 230.0 273.0 C236.0 279.3 242.3 286.2 248.0 292.0 C253.7 297.8 261.3 305.3 264.0 308.0" stroke="#141414" stroke-width="2.5" fill="none" /><path d="M262.0 302.0 C265.3 302.7 274.7 306.0 282.0 306.0 C289.3 306.0 299.3 304.7 306.0 302.0 C312.7 299.3 316.3 295.3 322.0 290.0 C327.7 284.7 335.0 274.7 340.0 270.0 C345.0 265.3 348.7 263.7 352.0 262.0 C355.3 260.3 358.7 260.3 360.0 260.0" stroke="#b0b0b0" stroke-width="1.0" fill="none" /><path d="M229.9 208.0 C232.1 209.9 240.1 216.1 242.9 219.2 C245.7 222.3 246.1 223.5 246.6 226.6 C247.1 229.7 246.9 233.8 245.7 237.8 C244.5 241.8 241.5 247.1 239.2 250.8 C236.9 254.5 232.9 258.5 231.7 260.0" stroke="#a0a0a0" stroke-width="2.6" fill="none" /><path d="M229.9 208.0 C232.1 209.9 240.1 216.1 242.9 219.2 C245.7 222.3 246.1 223.5 246.6 226.6 C247.1 229.7 246.9 233.8 245.7 237.8 C244.5 241.8 241.5 247.1 239.2 250.8 C236.9 254.5 232.9 258.5 231.7 260.0" stroke="#262626" stroke-width="1.2" fill="none" /><path d="M250.3 228.5 C253.7 229.0 263.4 229.9 270.8 231.3 C278.2 232.7 288.8 235.1 295.0 236.9 C301.2 238.7 304.2 239.0 308.0 242.0 C311.8 245.0 314.7 249.8 318.0 255.0 C321.3 260.2 325.5 268.7 327.7 273.5 C329.9 278.3 330.4 282.2 331.0 284.0" stroke="#8a8a8a" stroke-width="3.4" fill="none" /><path d="M250.3 228.5 C253.7 229.0 263.4 229.9 270.8 231.3 C278.2 232.7 288.8 235.1 295.0 236.9 C301.2 238.7 304.2 239.0 308.0 242.0 C311.8 245.0 314.7 249.8 318.0 255.0 C321.3 260.2 325.5 268.7 327.7 273.5 C329.9 278.3 330.4 282.2 331.0 284.0" stroke="#1a1a1a" stroke-width="2.0" fill="none" /><path d="M250.3 228.5 C253.7 229.0 263.4 229.9 270.8 231.3 C278.2 232.7 291.0 236.0 295.0 236.9" stroke="#e0e0e0" stroke-width="1.2" stroke-dasharray="0.9 1.3" fill="none"/><path d="M273.0 266.0 C272.4 268.2 271.1 274.4 269.4 279.1 C267.7 283.8 263.8 291.7 262.7 294.2" stroke="#b0b0b0" stroke-width="0.55" fill="none" /><path d="M273.0 266.0 C271.9 268.0 269.2 273.5 266.6 277.7 C263.9 282.0 258.7 289.2 257.1 291.4" stroke="#b0b0b0" stroke-width="0.55" fill="none" /><path d="M273.0 266.0 C271.5 267.6 267.6 272.2 264.1 275.8 C260.6 279.4 254.1 285.6 252.2 287.6" stroke="#b0b0b0" stroke-width="0.55" fill="none" /><path d="M273.0 266.0 C271.2 267.2 266.2 270.6 262.1 273.4 C257.9 276.2 250.5 281.2 248.1 282.8" stroke="#b0b0b0" stroke-width="0.55" fill="none" /><path d="M273.0 266.0 C270.9 266.8 265.2 268.7 260.6 270.6 C256.0 272.5 247.8 276.1 245.2 277.2" stroke="#b0b0b0" stroke-width="0.55" fill="none" /><path d="M273.0 266.0 C270.8 266.3 264.7 266.7 259.7 267.6 C254.8 268.5 246.2 270.6 243.5 271.2" stroke="#b0b0b0" stroke-width="0.55" fill="none" /><path d="M273.0 266.0 C270.8 265.7 264.5 264.7 259.5 264.5 C254.5 264.3 245.8 264.9 243.0 265.0" stroke="#b0b0b0" stroke-width="0.55" fill="none" /><path d="M273.0 266.0 C270.8 265.2 264.8 262.6 259.9 261.4 C255.1 260.2 246.6 259.2 243.9 258.7" stroke="#b0b0b0" stroke-width="0.55" fill="none" /><path d="M280.0 273.0 280.0 302.0" stroke="#b0b0b0" stroke-width="0.9" fill="none" /><circle cx="276.5" cy="266.5" r="3.5" stroke="#c0c0c0" stroke-width="0.8" fill="none"/><path d="M352.0 262.0 357.0 256.0" stroke="#aaa" stroke-width="2.2" fill="none" /><circle cx="354" cy="263" r="2.2" stroke="#c0c0c0" stroke-width="0.8" fill="#111"/><path d="M214.0 297.0 C214.7 294.3 216.5 286.2 218.0 281.0 C219.5 275.8 222.2 268.5 223.0 266.0" stroke="#909090" stroke-width="3.6" fill="none" /><path d="M214.0 297.0 C214.7 294.3 216.5 286.2 218.0 281.0 C219.5 275.8 222.2 268.5 223.0 266.0" stroke="#151515" stroke-width="1.8" fill="none" /><path d="M266 312 Q290 304.5 312 306 Q317 307 315 312 L291 336.5 Q288 339.5 285 336.5 Z" stroke="#a8a8a8" stroke-width="1.8" fill="#060606"/><path d="M271 314.5 Q291 309 309 310 L288 332 Z" stroke="#5a5a5a" stroke-width="0.7" fill="none"/><path d="M277.0 312.5 283.5 325.0" stroke="#9a9a9a" stroke-width="0.6" fill="none" /><path d="M282.2 311.9 288.7 323.2" stroke="#9a9a9a" stroke-width="0.6" fill="none" /><path d="M287.4 311.3 293.9 321.4" stroke="#9a9a9a" stroke-width="0.6" fill="none" /><path d="M292.6 310.7 299.1 319.6" stroke="#9a9a9a" stroke-width="0.6" fill="none" /><path d="M297.8 310.1 304.3 317.8" stroke="#9a9a9a" stroke-width="0.6" fill="none" /><path d="M303.0 309.5 309.5 316.0" stroke="#9a9a9a" stroke-width="0.6" fill="none" /><path d="M262.0 303.0 C265.8 303.7 277.5 307.0 285.0 307.0 C292.5 307.0 303.3 303.7 307.0 303.0" stroke="#909090" stroke-width="0.8" fill="none" /><path d="M278.8 183.9 L279.3 183.1 L280.7 183.1 L281.2 183.9" stroke="#c8c8c8" stroke-width="0.55" fill="none"/><path d="M278.8 193.4 L279.3 192.6 L280.7 192.6 L281.2 193.4" stroke="#c8c8c8" stroke-width="0.55" fill="none"/><path d="M278.8 202.4 L279.3 201.6 L280.7 201.6 L281.2 202.4" stroke="#c8c8c8" stroke-width="0.55" fill="none"/><path d="M278.8 212.4 L279.3 211.6 L280.7 211.6 L281.2 212.4" stroke="#c8c8c8" stroke-width="0.55" fill="none"/><path d="M278.8 221.4 L279.3 220.6 L280.7 220.6 L281.2 221.4" stroke="#c8c8c8" stroke-width="0.55" fill="none"/><path d="M307.8 231.4 L308.3 230.6 L309.7 230.6 L310.2 231.4" stroke="#c8c8c8" stroke-width="0.55" fill="none"/><path d="M328.8 240.4 L329.3 239.6 L330.7 239.6 L331.2 240.4" stroke="#c8c8c8" stroke-width="0.55" fill="none"/><path d="M297.8 248.4 L298.3 247.6 L299.7 247.6 L300.2 248.4" stroke="#c8c8c8" stroke-width="0.55" fill="none"/><path d="M298.8 258.4 L299.3 257.6 L300.7 257.6 L301.2 258.4" stroke="#c8c8c8" stroke-width="0.55" fill="none"/><path d="M288.8 267.4 L289.3 266.6 L290.7 266.6 L291.2 267.4" stroke="#c8c8c8" stroke-width="0.55" fill="none"/><path d="M293.8 278.4 L294.3 277.6 L295.7 277.6 L296.2 278.4" stroke="#c8c8c8" stroke-width="0.55" fill="none"/><path d="M262.8 283.4 L263.3 282.6 L264.7 282.6 L265.2 283.4" stroke="#c8c8c8" stroke-width="0.55" fill="none"/><path d="M260.8 271.4 L261.3 270.6 L262.7 270.6 L263.2 271.4" stroke="#c8c8c8" stroke-width="0.55" fill="none"/><path d="M248.8 256.4 L249.3 255.6 L250.7 255.6 L251.2 256.4" stroke="#c8c8c8" stroke-width="0.55" fill="none"/><path d="M328.8 262.4 L329.3 261.6 L330.7 261.6 L331.2 262.4" stroke="#c8c8c8" stroke-width="0.55" fill="none"/><path d="M243.8 244.4 L244.3 243.6 L245.7 243.6 L246.2 244.4" stroke="#c8c8c8" stroke-width="0.55" fill="none"/><path d="M238.8 228.4 L239.3 227.6 L240.7 227.6 L241.2 228.4" stroke="#c8c8c8" stroke-width="0.55" fill="none"/><path d="M224.8 244.4 L225.3 243.6 L226.7 243.6 L227.2 244.4" stroke="#c8c8c8" stroke-width="0.55" fill="none"/></g></svg>
<div style="left:21.3px;top:72px;width:11.5px;height:11.5px;background:#ececec;border-top:1px solid #fff;border-left:1px solid #fff;border-right:1px solid #a8a8a8;border-bottom:1px solid #a8a8a8"></div>
<svg style="position:absolute;left:22.8px;top:73.5px" width="8.5" height="8.5" viewBox="0 0 8 8"><path d="M1 2 L7 2 M1 6 L7 6" stroke="#2a5ab0" stroke-width="0.9"/><path d="M1 4 L7 4" stroke="#d03030" stroke-width="0.9"/></svg>
<div style="left:33.1px;top:72px;width:11.5px;height:11.5px;background:#ececec;border-top:1px solid #fff;border-left:1px solid #fff;border-right:1px solid #a8a8a8;border-bottom:1px solid #a8a8a8"></div>
<svg style="position:absolute;left:34.6px;top:73.5px" width="8.5" height="8.5" viewBox="0 0 8 8"><path d="M4 1 L4 7 M1 4 L7 4" stroke="#1f6fd0" stroke-width="1.5"/></svg>
<div style="left:44.900000000000006px;top:72px;width:11.5px;height:11.5px;background:#ececec;border-top:1px solid #fff;border-left:1px solid #fff;border-right:1px solid #a8a8a8;border-bottom:1px solid #a8a8a8"></div>
<svg style="position:absolute;left:46.400000000000006px;top:73.5px" width="8.5" height="8.5" viewBox="0 0 8 8"><path d="M1 4 L7 4" stroke="#d03020" stroke-width="1.5"/></svg>
<div style="left:56.7px;top:72px;width:11.5px;height:11.5px;background:#ececec;border-top:1px solid #fff;border-left:1px solid #fff;border-right:1px solid #a8a8a8;border-bottom:1px solid #a8a8a8"></div>
<svg style="position:absolute;left:58.2px;top:73.5px" width="8.5" height="8.5" viewBox="0 0 8 8"><path d="M0.5 1.5 L7.5 1 L5 4.5 L5 7.5 L3.5 6.5 L3.5 4Z" fill="#1f6fd0"/></svg>
<div style="left:68.5px;top:72px;width:11.5px;height:11.5px;background:#ececec;border-top:1px solid #fff;border-left:1px solid #fff;border-right:1px solid #a8a8a8;border-bottom:1px solid #a8a8a8"></div>
<svg style="position:absolute;left:70.0px;top:73.5px" width="8.5" height="8.5" viewBox="0 0 8 8"><path d="M1 1 L3 3 M7 1 L5 3 M1 7 L3 5 M7 7 L5 5" stroke="#1f6fd0" stroke-width="1.1"/><path d="M3 3 L5 5 M5 3 L3 5" stroke="#d03030" stroke-width="0.6"/></svg>
<div style="left:80.3px;top:72px;width:11.5px;height:11.5px;background:#ececec;border-top:1px solid #fff;border-left:1px solid #fff;border-right:1px solid #a8a8a8;border-bottom:1px solid #a8a8a8"></div>
<svg style="position:absolute;left:81.8px;top:73.5px" width="8.5" height="8.5" viewBox="0 0 8 8"><path d="M2.5 7 L2 3.5 L3 1.5 L4 3 L4.5 1 L5.5 2.5 L6 4.5 L5.5 7Z" fill="#3a70c0"/></svg>
<div style="left:92.10000000000001px;top:72px;width:11.5px;height:11.5px;background:#ececec;border-top:1px solid #fff;border-left:1px solid #fff;border-right:1px solid #a8a8a8;border-bottom:1px solid #a8a8a8"></div>
<svg style="position:absolute;left:93.60000000000001px;top:73.5px" width="8.5" height="8.5" viewBox="0 0 8 8"><path d="M1 7 L5 3" stroke="#3a70c0" stroke-width="0.9"/><path d="M3 1 L7 1 L7 5Z" fill="#d03030"/></svg>
<div style="left:103.9px;top:72px;width:11.5px;height:11.5px;background:#ececec;border-top:1px solid #fff;border-left:1px solid #fff;border-right:1px solid #a8a8a8;border-bottom:1px solid #a8a8a8"></div>
<svg style="position:absolute;left:105.4px;top:73.5px" width="8.5" height="8.5" viewBox="0 0 8 8"><circle cx="3.5" cy="3.5" r="2.3" stroke="#c04040" stroke-width="0.9" fill="#fde"/><path d="M5 5 L7 7" stroke="#c04040" stroke-width="1.2"/></svg>
<div style="left:115.7px;top:72px;width:11.5px;height:11.5px;background:#ececec;border-top:1px solid #fff;border-left:1px solid #fff;border-right:1px solid #a8a8a8;border-bottom:1px solid #a8a8a8"></div>
<svg style="position:absolute;left:117.2px;top:73.5px" width="8.5" height="8.5" viewBox="0 0 8 8"><path d="M2.5 3 L5.5 3 A2 2 0 0 1 5.5 7" stroke="#1f6fd0" stroke-width="1.2" fill="none"/><path d="M0.5 3 L3 1 L3 5Z" fill="#1f6fd0"/></svg>
<div style="left:127.5px;top:72px;width:11.5px;height:11.5px;background:#ececec;border-top:1px solid #fff;border-left:1px solid #fff;border-right:1px solid #a8a8a8;border-bottom:1px solid #a8a8a8"></div>
<svg style="position:absolute;left:129.0px;top:73.5px" width="8.5" height="8.5" viewBox="0 0 8 8"><path d="M1 3 L6 3 M2 5.5 L7 5.5" stroke="#d03030" stroke-width="1.1"/><path d="M6 1.5 L7.5 3 L6 4.5 M2 4 L0.5 5.5 L2 7" stroke="#2a5ab0" stroke-width="0.7" fill="none"/></svg>
<div style="left:139.3px;top:72px;width:11.5px;height:11.5px;background:#ececec;border-top:1px solid #fff;border-left:1px solid #fff;border-right:1px solid #a8a8a8;border-bottom:1px solid #a8a8a8"></div>
<svg style="position:absolute;left:140.8px;top:73.5px" width="8.5" height="8.5" viewBox="0 0 8 8"><path d="M6.5 4.5 A2.7 2.7 0 1 1 5 1.6" stroke="#1f6fd0" stroke-width="1.2" fill="none"/><path d="M4 0.5 L7 1.5 L5 3.5Z" fill="#1f6fd0"/></svg>
<div style="left:151.10000000000002px;top:72px;width:11.5px;height:11.5px;background:#ececec;border-top:1px solid #fff;border-left:1px solid #fff;border-right:1px solid #a8a8a8;border-bottom:1px solid #a8a8a8"></div>
<svg style="position:absolute;left:152.60000000000002px;top:73.5px" width="8.5" height="8.5" viewBox="0 0 8 8"><rect x="0.8" y="3" width="6.4" height="3.5" fill="#c03030"/><rect x="2" y="1" width="4" height="2.5" fill="#e0e0f0" stroke="#555" stroke-width="0.4"/><rect x="2" y="5" width="4" height="2.5" fill="#fff" stroke="#555" stroke-width="0.4"/></svg>
<div style="left:162.90000000000003px;top:72px;width:11.5px;height:11.5px;background:#ececec;border-top:1px solid #fff;border-left:1px solid #fff;border-right:1px solid #a8a8a8;border-bottom:1px solid #a8a8a8"></div>
<svg style="position:absolute;left:164.40000000000003px;top:73.5px" width="8.5" height="8.5" viewBox="0 0 8 8"><rect x="0.8" y="0.8" width="4.5" height="4.5" fill="#203050"/><rect x="2.7" y="2.7" width="4.5" height="4.5" fill="#e02020"/></svg>
<div style="left:174.70000000000002px;top:72px;width:11.5px;height:11.5px;background:#ececec;border-top:1px solid #fff;border-left:1px solid #fff;border-right:1px solid #a8a8a8;border-bottom:1px solid #a8a8a8"></div>
<svg style="position:absolute;left:176.20000000000002px;top:73.5px" width="8.5" height="8.5" viewBox="0 0 8 8"><circle cx="4" cy="4" r="2.4" stroke="#1f6fd0" stroke-width="1.8" fill="none" stroke-dasharray="1.1 0.6"/><circle cx="4" cy="4" r="2" stroke="#1f6fd0" stroke-width="0.9" fill="none"/></svg>
<div style="left:186.50000000000003px;top:72px;width:11.5px;height:11.5px;background:#ececec;border-top:1px solid #fff;border-left:1px solid #fff;border-right:1px solid #a8a8a8;border-bottom:1px solid #a8a8a8"></div>
<svg style="position:absolute;left:188.00000000000003px;top:73.5px" width="8.5" height="8.5" viewBox="0 0 8 8"><path d="M4 0.5 L5 3 L7.6 3 L5.5 4.7 L6.3 7.4 L4 5.8 L1.7 7.4 L2.5 4.7 L0.4 3 L3 3Z" fill="#f0c010" stroke="#c09000" stroke-width="0.3"/></svg>
<div style="left:198.3px;top:72px;width:11.5px;height:11.5px;background:#ececec;border-top:1px solid #fff;border-left:1px solid #fff;border-right:1px solid #a8a8a8;border-bottom:1px solid #a8a8a8"></div>
<svg style="position:absolute;left:199.8px;top:73.5px" width="8.5" height="8.5" viewBox="0 0 8 8"><path d="M4 7.5 L1.8 3.8 A2.5 2.5 0 1 1 6.2 3.8Z" fill="#d02020"/><circle cx="4" cy="2.8" r="0.9" fill="#fff"/></svg>
<div style="left:210.10000000000002px;top:72px;width:11.5px;height:11.5px;background:#ececec;border-top:1px solid #fff;border-left:1px solid #fff;border-right:1px solid #a8a8a8;border-bottom:1px solid #a8a8a8"></div>
<svg style="position:absolute;left:211.60000000000002px;top:73.5px" width="8.5" height="8.5" viewBox="0 0 8 8"><rect x="0.8" y="0.8" width="2.8" height="2.8" stroke="#c04040" stroke-width="0.6" fill="none"/><rect x="4.4" y="0.8" width="2.8" height="2.8" stroke="#4060b0" stroke-width="0.6" fill="none"/><rect x="0.8" y="4.4" width="2.8" height="2.8" stroke="#4060b0" stroke-width="0.6" fill="none"/><rect x="4.4" y="4.4" width="2.8" height="2.8" stroke="#c04040" stroke-width="0.6" fill="none"/></svg>
<div style="left:10px;top:58px;width:3px;height:1px;background:#c0c0c0"></div>
<svg style="position:absolute;left:1.5px;top:61.5px" width="9" height="9" viewBox="0 0 8 8"><circle cx="4" cy="4" r="0.9" fill="#d02828"/></svg>
<div style="left:11px;top:69.0px;width:1.3px;height:1.3px;background:#222"></div>
<svg style="position:absolute;left:1.5px;top:72.72px" width="9" height="9" viewBox="0 0 8 8"><path d="M1.5 1.5 L6.5 6.5 M1.5 6.5 L4 4" stroke="#333" stroke-width="0.9"/><circle cx="1.5" cy="6.5" r="0.7" fill="#d02828"/><circle cx="6.5" cy="6.5" r="0.7" fill="#d02828"/></svg>
<div style="left:11px;top:80.22px;width:1.3px;height:1.3px;background:#222"></div>
<svg style="position:absolute;left:1.5px;top:83.94px" width="9" height="9" viewBox="0 0 8 8"><path d="M1.5 6.5 L6.5 1.5" stroke="#333" stroke-width="0.9"/><circle cx="1.5" cy="6.5" r="0.8" fill="#d02828"/><circle cx="6.5" cy="1.5" r="0.8" fill="#d02828"/></svg>
<div style="left:11px;top:91.44px;width:1.3px;height:1.3px;background:#222"></div>
<svg style="position:absolute;left:1.5px;top:95.16px" width="9" height="9" viewBox="0 0 8 8"><circle cx="4" cy="4" r="2.8" stroke="#333" stroke-width="0.9" fill="none"/><circle cx="1.5" cy="4" r="0.6" fill="#d02828"/></svg>
<div style="left:11px;top:102.66px;width:1.3px;height:1.3px;background:#222"></div>
<svg style="position:absolute;left:1.5px;top:106.38px" width="9" height="9" viewBox="0 0 8 8"><path d="M6.5 2.5 A3 3 0 1 0 5.5 6.8" stroke="#333" stroke-width="0.9" fill="none"/><circle cx="6.5" cy="2.5" r="0.7" fill="#d02828"/><circle cx="5.5" cy="6.8" r="0.7" fill="#d02828"/></svg>
<div style="left:11px;top:113.88px;width:1.3px;height:1.3px;background:#222"></div>
<svg style="position:absolute;left:1.5px;top:117.6px" width="9" height="9" viewBox="0 0 8 8"><rect x="1.3" y="1.8" width="5.5" height="4.5" stroke="#333" stroke-width="0.9" fill="none"/><circle cx="6.8" cy="1.8" r="0.7" fill="#d02828"/><circle cx="1.3" cy="6.3" r="0.7" fill="#d02828"/></svg>
<div style="left:11px;top:125.1px;width:1.3px;height:1.3px;background:#222"></div>
<svg style="position:absolute;left:1.5px;top:128.82px" width="9" height="9" viewBox="0 0 8 8"><path d="M1.5 6.5 L6.5 1.5" stroke="#f0c020" stroke-width="2.2"/><path d="M1 7 L2.5 5.5" stroke="#d02828" stroke-width="1.2"/><path d="M4 3 L6 5" stroke="#d02828" stroke-width="0.7"/></svg>
<div style="left:11px;top:136.32px;width:1.3px;height:1.3px;background:#222"></div>
<svg style="position:absolute;left:1.5px;top:140.04000000000002px" width="9" height="9" viewBox="0 0 8 8"><path d="M1.5 2.5 L6 6.5" stroke="#f0c020" stroke-width="2.2"/><path d="M6 6.5 L7 7.3" stroke="#a06010" stroke-width="1.2"/><circle cx="5.5" cy="1.5" r="0.7" fill="#1f6fd0"/></svg>
<div style="left:11px;top:147.54000000000002px;width:1.3px;height:1.3px;background:#222"></div>
<svg style="position:absolute;left:1.5px;top:151.26px" width="9" height="9" viewBox="0 0 8 8"><rect x="0.8" y="1" width="6.4" height="6" rx="1.5" fill="#9ab8e0"/><path d="M2 3 L6 3" stroke="#2050a0" stroke-width="0.9"/><path d="M1.8 5.5 L6.2 5.5" stroke="#2050a0" stroke-width="0.6"/></svg>
<div style="left:11px;top:158.76px;width:1.3px;height:1.3px;background:#222"></div>
<svg style="position:absolute;left:1.5px;top:162.48000000000002px" width="9" height="9" viewBox="0 0 8 8"><rect x="1" y="1.5" width="6" height="5" fill="#c8dcf4" stroke="#1f6fd0" stroke-width="0.7"/><path d="M1 3 L7 3" stroke="#1f6fd0" stroke-width="0.5"/></svg>
<div style="left:11px;top:169.98000000000002px;width:1.3px;height:1.3px;background:#222"></div>
<svg style="position:absolute;left:1.5px;top:173.7px" width="9" height="9" viewBox="0 0 8 8"><rect x="0.8" y="1.5" width="6.4" height="5" rx="0.8" fill="#6aa8e8" stroke="#2060b0" stroke-width="0.6"/></svg>
<div style="left:11px;top:181.2px;width:1.3px;height:1.3px;background:#222"></div>
<svg style="position:absolute;left:1.5px;top:184.92000000000002px" width="9" height="9" viewBox="0 0 8 8"><ellipse cx="4" cy="5.5" rx="3" ry="1.8" stroke="#b02020" stroke-width="0.9" fill="none"/><path d="M3 4 L5 1 L6.5 3.5Z" fill="#1f6fd0"/></svg>
<div style="left:11px;top:192.42000000000002px;width:1.3px;height:1.3px;background:#222"></div>
<svg style="position:absolute;left:1.5px;top:196.14000000000001px" width="9" height="9" viewBox="0 0 8 8"><path d="M0.8 4.5 L4 2.5 L7.2 4.2 L4 6.5Z" fill="#80c8d0"/></svg>
<div style="left:11px;top:203.64000000000001px;width:1.3px;height:1.3px;background:#222"></div>
<svg style="position:absolute;left:1.5px;top:207.36px" width="9" height="9" viewBox="0 0 8 8"><rect x="1.2" y="3" width="5.8" height="4" fill="#50b040"/><path d="M2.5 0.8 L2.5 4.2 M0.8 2.5 L4.2 2.5" stroke="#d02828" stroke-width="0.9"/></svg>
<div style="left:11px;top:214.86px;width:1.3px;height:1.3px;background:#222"></div>
<svg style="position:absolute;left:1.5px;top:218.58px" width="9" height="9" viewBox="0 0 8 8"><path d="M4 1 L4 7 M1 4 L7 4" stroke="#c02020" stroke-width="1.2"/></svg>
<div style="left:11px;top:226.08px;width:1.3px;height:1.3px;background:#222"></div>
<svg style="position:absolute;left:1.5px;top:229.8px" width="9" height="9" viewBox="0 0 8 8"><path d="M1 6 L7 2" stroke="#333" stroke-width="0.9"/><circle cx="2" cy="2" r="0.7" fill="#d02828"/></svg>
<div style="left:11px;top:237.3px;width:1.3px;height:1.3px;background:#222"></div>
<svg style="position:absolute;left:1.5px;top:241.02px" width="9" height="9" viewBox="0 0 8 8"><path d="M1 6.5 L5 1.5" stroke="#2060c0" stroke-width="1"/><rect x="3.5" y="4" width="3" height="3" fill="#e03030"/><rect x="5" y="3" width="2.5" height="2.5" fill="#f0c020"/><rect x="4.5" y="5.5" width="2" height="2" fill="#30a0e0"/></svg>
<div style="left:11px;top:248.52px;width:1.3px;height:1.3px;background:#222"></div>
<svg style="position:absolute;left:1.5px;top:252.24px" width="9" height="9" viewBox="0 0 8 8"><path d="M4 1 L7 3.2 L6 6.8 L2 6.8 L1 3.2Z" fill="#8ac4f0" stroke="#1a4a90" stroke-width="0.7"/></svg>
<div style="left:11px;top:259.74px;width:1.3px;height:1.3px;background:#222"></div>
<svg style="position:absolute;left:1.5px;top:263.46000000000004px" width="9" height="9" viewBox="0 0 8 8"><path d="M2 2 L6.5 6.5 M6.5 2.5 L2.5 6.5" stroke="#d02020" stroke-width="1.2"/><circle cx="1.5" cy="1.5" r="0.8" fill="#d02828"/></svg>
<div style="left:11px;top:270.96000000000004px;width:1.3px;height:1.3px;background:#222"></div>
<div style="left:14px;top:57px;width:1px;height:345px;background:#b8b8b8"></div>
<svg style="position:absolute;left:757px;top:61.5px" width="9" height="9" viewBox="0 0 8 8"><path d="M1 7 L4 3 L7 7 M2 1 L4 3" stroke="#1f6fd0" stroke-width="1.1" fill="none"/><circle cx="2" cy="1.5" r="0.7" fill="#aaa"/></svg>
<svg style="position:absolute;left:757px;top:73.5px" width="9" height="9" viewBox="0 0 8 8"><path d="M1 6.5 L5 1.5 L7 6.5Z" stroke="#1f6fd0" stroke-width="1.2" fill="#a8d0f0"/></svg>
<svg style="position:absolute;left:757px;top:84.5px" width="9" height="9" viewBox="0 0 8 8"><path d="M1 6.5 L5 1.5 L7 6.5Z" stroke="#1f6fd0" stroke-width="1.2" fill="#a8d0f0"/><circle cx="5.8" cy="5.8" r="1.8" fill="#30b030"/></svg>
<svg style="position:absolute;left:757px;top:95.5px" width="9" height="9" viewBox="0 0 8 8"><path d="M1 6.5 L5 1.5 L7 6.5Z" stroke="#1f6fd0" stroke-width="1.1" fill="none"/><path d="M4 5 L7 3" stroke="#d0a040" stroke-width="0.7"/></svg>
<svg style="position:absolute;left:757px;top:106.5px" width="9" height="9" viewBox="0 0 8 8"><path d="M1 6.5 L5 1.5 L7 6.5Z" stroke="#1f6fd0" stroke-width="1.1" fill="none"/><path d="M4 5 L7 3" stroke="#d0a040" stroke-width="0.7"/></svg>
<svg style="position:absolute;left:757px;top:117.5px" width="9" height="9" viewBox="0 0 8 8"><path d="M1 6.5 L5 1.5 L7 6.5Z" stroke="#1f6fd0" stroke-width="1.2" fill="#a8d0f0"/></svg>
<svg style="position:absolute;left:757px;top:128.5px" width="9" height="9" viewBox="0 0 8 8"><path d="M1 7 L4 3.5 L7 7 M1.5 1 L4 3.5 L6.5 1" stroke="#c02020" stroke-width="1.1" fill="none"/><circle cx="4" cy="4.5" r="1" fill="#1f6fd0"/></svg>
<svg style="position:absolute;left:757px;top:144.5px" width="9" height="9" viewBox="0 0 8 8"><path d="M1 6.5 L6.5 1" stroke="#f0c020" stroke-width="2"/><path d="M1 6.5 L2.5 5" stroke="#2a2a2a" stroke-width="1"/></svg>
<div style="left:766.5px;top:152px;width:1.2px;height:1.2px;background:#222"></div>
<svg style="position:absolute;left:757px;top:155.5px" width="9" height="9" viewBox="0 0 8 8"><rect x="1" y="1" width="6" height="6" fill="#fff" stroke="#c04040" stroke-width="0.6"/><path d="M4 2 L4 6" stroke="#c02020" stroke-width="1"/></svg>
<div style="left:766.5px;top:163px;width:1.2px;height:1.2px;background:#222"></div>
<svg style="position:absolute;left:757px;top:167.5px" width="9" height="9" viewBox="0 0 8 8"><path d="M2 7 L2.5 2 L5 1 L6 7Z" fill="#40b040"/></svg>
<div style="left:766.5px;top:175px;width:1.2px;height:1.2px;background:#222"></div>
<svg style="position:absolute;left:757px;top:178.5px" width="9" height="9" viewBox="0 0 8 8"><path d="M1 7 L1.5 2 L6.5 1 L6 2.5 L2.5 7Z" fill="#80b030"/><path d="M3 5 L7 1" stroke="#f0c020" stroke-width="1.2"/></svg>
<div style="left:766.5px;top:186px;width:1.2px;height:1.2px;background:#222"></div>
<svg style="position:absolute;left:757px;top:190.5px" width="9" height="9" viewBox="0 0 8 8"><ellipse cx="4.3" cy="4.5" rx="3.2" ry="2" fill="#70b8b8"/><path d="M1 4.5 L1 3 L5 2" stroke="#4a8a8a" stroke-width="0.7" fill="none"/></svg>
<div style="left:766.5px;top:198px;width:1.2px;height:1.2px;background:#222"></div>
<svg style="position:absolute;left:757px;top:201.5px" width="9" height="9" viewBox="0 0 8 8"><path d="M1 3 L6 2 L7 6 L1.5 6.5Z" fill="#6a8ab0" stroke="#2a4a70" stroke-width="0.5"/></svg>
<div style="left:766.5px;top:209px;width:1.2px;height:1.2px;background:#222"></div>
<svg style="position:absolute;left:757px;top:212.5px" width="9" height="9" viewBox="0 0 8 8"><path d="M4 1 L6.5 7 L1.5 7Z" fill="#a8c8c8" stroke="#7a9a9a" stroke-width="0.5"/></svg>
<div style="left:766.5px;top:220px;width:1.2px;height:1.2px;background:#222"></div>
<svg style="position:absolute;left:757px;top:223.5px" width="9" height="9" viewBox="0 0 8 8"><ellipse cx="4" cy="4.3" rx="3.2" ry="2.6" fill="#30a030"/><ellipse cx="3.5" cy="3.5" rx="1.5" ry="1" fill="#70d070"/></svg>
<div style="left:766.5px;top:231px;width:1.2px;height:1.2px;background:#222"></div>
<svg style="position:absolute;left:757px;top:234.5px" width="9" height="9" viewBox="0 0 8 8"><circle cx="4" cy="4" r="3" fill="#40a0c0"/><path d="M2 3 Q4 5 6 3" stroke="#208040" stroke-width="1" fill="none"/></svg>
<div style="left:766.5px;top:242px;width:1.2px;height:1.2px;background:#222"></div>
<div style="left:758px;top:141px;width:10px;height:1px;background:#d0d0d0"></div>
<div style="left:0px;top:403.5px;width:755px;height:9.5px;background:#f7f7f7"></div>
<div style="left:15px;top:403.5px;width:37px;height:9.5px;background:#f8f8f8;border:1px solid #d0d0d0;border-bottom:1px solid #707070;border-right:1px solid #a0a0a0"></div>
<div style="left:16px;top:404.5px;width:7px;height:7px;background:radial-gradient(circle at 50% 45%,#f8fcff 25%,#a0a8d0 60%,#c04040);border:0.8px solid #c0404099;border-radius:1px"></div>
<div class="t" style="left:24px;top:404.94px;font-size:5.6px;color:#000;font-weight:bold">Contours</div>
<div style="left:53.4px;top:404.5px;width:7px;height:7px;background:radial-gradient(circle at 50% 45%,#f8fcff 25%,#a0a8d0 60%,#c04040);border:0.8px solid #c0404099;border-radius:1px"></div>
<div class="t" style="left:58px;top:404.94px;font-size:5.6px;color:#7a7a7a;">Lots</div>
<div style="left:74.5px;top:404.5px;width:7px;height:7px;background:radial-gradient(circle at 50% 45%,#f8fcff 25%,#a0a8d0 60%,#c04040);border:0.8px solid #c0404099;border-radius:1px"></div>
<div class="t" style="left:81px;top:404.94px;font-size:5.6px;color:#7a7a7a;">Fast text</div>
<div style="left:106px;top:404.5px;width:7px;height:7px;background:radial-gradient(circle at 50% 45%,#f8fcff 25%,#a0a8d0 60%,#c04040);border:0.8px solid #c0404099;border-radius:1px"></div>
<div class="t" style="left:113px;top:404.94px;font-size:5.6px;color:#7a7a7a;">Stormwater</div>
<div style="left:144.8px;top:404.5px;width:7px;height:7px;background:radial-gradient(circle at 50% 45%,#f8fcff 25%,#a0a8d0 60%,#c04040);border:0.8px solid #c0404099;border-radius:1px"></div>
<div class="t" style="left:151px;top:404.94px;font-size:5.6px;color:#7a7a7a;">PM Marks</div>
<div style="left:179.8px;top:404.5px;width:7px;height:7px;background:radial-gradient(circle at 50% 45%,#f8fcff 25%,#a0a8d0 60%,#c04040);border:0.8px solid #c0404099;border-radius:1px"></div>
<div class="t" style="left:188px;top:404.94px;font-size:5.6px;color:#7a7a7a;">Road Design</div>
<div style="left:223.4px;top:404.5px;width:7px;height:7px;background:radial-gradient(circle at 50% 45%,#f8fcff 25%,#a0a8d0 60%,#c04040);border:0.8px solid #c0404099;border-radius:1px"></div>
<div class="t" style="left:231px;top:404.94px;font-size:5.6px;color:#7a7a7a;">Alignments</div>
<div style="left:261.4px;top:404.5px;width:7px;height:7px;background:radial-gradient(circle at 50% 45%,#f8fcff 25%,#a0a8d0 60%,#30a030);border:0.8px solid #30a03099;border-radius:1px"></div>
<div class="t" style="left:268px;top:404.94px;font-size:5.6px;color:#7a7a7a;">LS</div>
<div style="left:280px;top:404.5px;width:7px;height:7px;background:radial-gradient(circle at 50% 45%,#f8fcff 25%,#a0a8d0 60%,#30a030);border:0.8px solid #30a03099;border-radius:1px"></div>
<div class="t" style="left:288px;top:404.94px;font-size:5.6px;color:#7a7a7a;">XS</div>
<div style="left:298.4px;top:404.5px;width:7px;height:7px;background:radial-gradient(circle at 50% 45%,#f8fcff 25%,#a0a8d0 60%,#c04040);border:0.8px solid #c0404099;border-radius:1px"></div>
<div class="t" style="left:306px;top:404.94px;font-size:5.6px;color:#7a7a7a;">Plot LS</div>
<div style="left:326.5px;top:404.5px;width:7px;height:7px;background:radial-gradient(circle at 50% 45%,#f8fcff 25%,#a0a8d0 60%,#3050c0);border:0.8px solid #3050c099;border-radius:1px"></div>
<div class="t" style="left:334px;top:404.94px;font-size:5.6px;color:#7a7a7a;">3D</div>
<div style="left:72.8px;top:405px;width:1px;height:7px;background:#999"></div>
<div style="left:103px;top:405px;width:1px;height:7px;background:#999"></div>
<div style="left:142px;top:405px;width:1px;height:7px;background:#999"></div>
<div style="left:178px;top:405px;width:1px;height:7px;background:#999"></div>
<div style="left:221px;top:405px;width:1px;height:7px;background:#999"></div>
<div style="left:259px;top:405px;width:1px;height:7px;background:#999"></div>
<div style="left:278px;top:405px;width:1px;height:7px;background:#999"></div>
<div style="left:297px;top:405px;width:1px;height:7px;background:#999"></div>
<div style="left:325px;top:405px;width:1px;height:7px;background:#999"></div>
<div style="left:343px;top:405px;width:1px;height:7px;background:#999"></div>
<svg style="position:absolute;left:740px;top:405px" width="14" height="7"><path d="M4 1 L1.5 3.5 L4 6Z" fill="#999"/><path d="M10 1 L12.5 3.5 L10 6Z" fill="#999"/></svg>
<div style="left:0px;top:413px;width:768px;height:12px;background:#f0f0f0"></div>
<div style="left:550px;top:414px;width:156px;height:9px;border:1px solid #d0d0d0;background:#ececec"></div>
<div style="left:707px;top:414px;width:11px;height:9px;border:1px solid #dcdcdc"></div>
<div class="t" style="left:708.0px;top:415.4px;font-size:5.6px;line-height:6px;color:#a0a0a0;transform:scaleX(0.718);transform-origin:0 50%">CAP</div>
<div style="left:718.5px;top:414px;width:13.5px;height:9px;border:1px solid #dcdcdc"></div>
<div class="t" style="left:719.5px;top:415.4px;font-size:5.6px;line-height:6px;color:#222;transform:scaleX(1.026);transform-origin:0 50%">NUM</div>
<div style="left:732.5px;top:414px;width:12.5px;height:9px;border:1px solid #dcdcdc"></div>
<div class="t" style="left:733.5px;top:415.4px;font-size:5.6px;line-height:6px;color:#a0a0a0;transform:scaleX(0.705);transform-origin:0 50%">SCRL</div>
<div style="left:745.5px;top:414px;width:9.5px;height:9px;border:1px solid #dcdcdc"></div>
<svg style="position:absolute;left:747px;top:415px" width="7" height="7" viewBox="0 0 7 7"><path d="M1 1.5 L6 1.5 L5.4 6.5 L1.6 6.5Z" fill="#8a8a8a"/><rect x="2.5" y="0.5" width="2" height="1" fill="#8a8a8a"/></svg>
<div style="left:755px;top:404px;width:13px;height:24.5px;background:#f8f8f8"></div>
<div style="left:0px;top:424px;width:768px;height:6px;background:#f8f8f8"></div>
<div style="left:0px;top:429px;width:768px;height:1px;background:#e4e4e4"></div>
<div style="left:16px;top:424px;width:55px;height:7px;border:1px solid #bbb;background:#f4f4f4"></div>
<div class="t" style="left:18px;top:424.64px;font-size:5.6px;color:#555;">Output Window</div>
<div style="left:77px;top:424px;width:62px;height:7px;border:1px solid #bbb;background:#f4f4f4"></div>
<div class="t" style="left:79px;top:424.64px;font-size:5.6px;color:#555;">Background tasks</div>
<div style="left:36px;top:96.4px;width:153.3px;height:160.2px;background:#f0f0f0;border:1px solid #fafafa"></div>
<div style="left:37px;top:97.4px;width:151.3px;height:11.5px;background:#fff"></div>
<svg style="position:absolute;left:40px;top:99.4px" width="6" height="7"><path d="M0.5 1.5 L3 0.3 L5.5 1.5 L5.5 5 L3 6.5 L0.5 5Z" fill="#2f5a48"/><path d="M0.5 1.5 L3 2.7 L5.5 1.5" stroke="#8fb0a0" stroke-width="0.6" fill="none"/></svg>
<div class="t" style="left:48px;top:99.24px;font-size:5.6px;color:#a5a5a5;;transform:scaleX(0.9);transform-origin:0 50%">Tin Contour, Smooth and Label</div>
<div style="left:142.3px;top:102.4px;width:4.5px;height:0.8px;background:#999"></div>
<div style="left:159.3px;top:100.4px;width:4px;height:4px;border:0.7px solid #ccc"></div>
<svg style="position:absolute;left:176.8px;top:99.9px" width="5" height="5"><path d="M0.5 0.5 L4.5 4.5 M4.5 0.5 L0.5 4.5" stroke="#666" stroke-width="0.7"/></svg>
<div class="t" style="left:38.6px;top:109.84px;font-size:6.1px;color:#000;;-webkit-text-stroke:0.1px #000;transform:scaleX(0.79);transform-origin:0 50%">Function name</div>
<div style="left:83.3px;top:111px;width:94.5px;height:7.5px;background:#fff;border-top:1px solid #8a8a8a;border-left:1px solid #8a8a8a;border-bottom:1px solid #e8e8e8;border-right:1px solid #e8e8e8;box-sizing:border-box;"></div>
<div class="t" style="left:85px;top:110.14px;font-size:6.1px;color:#000;;-webkit-text-stroke:0.1px #000;transform:scaleX(0.79);transform-origin:0 50%">Contour Labels</div>
<div class="t" style="left:179.3px;top:109.50px;font-size:8.5px;color:#9a1010;font-family:'Liberation Serif',serif;font-weight:bold"><i>fx</i></div>
<div class="t" style="left:38.6px;top:119.14px;font-size:6.1px;color:#000;;-webkit-text-stroke:0.1px #000;transform:scaleX(0.79);transform-origin:0 50%">Tin to contour</div>
<div style="left:83.3px;top:120px;width:94.5px;height:7.5px;background:#fff;border-top:1px solid #8a8a8a;border-left:1px solid #8a8a8a;border-bottom:1px solid #e8e8e8;border-right:1px solid #e8e8e8;box-sizing:border-box;"></div>
<div class="t" style="left:85px;top:119.34px;font-size:6.1px;color:#000;;-webkit-text-stroke:0.1px #000;transform:scaleX(0.79);transform-origin:0 50%">SUPER.FS</div>
<div style="left:180px;top:120.3px;width:8px;height:7.5px;background:radial-gradient(circle at 40% 35%,#70d060,#1a8a20 60%,#0a5010);border-radius:45% 50% 40% 50%;border:0.5px solid #0a4a10"></div>
<div style="left:40px;top:138.3px;width:148px;height:99px;border:1px solid #fff;border-right-color:#a0a0a0;border-bottom-color:#a0a0a0;"></div>
<div class="t" style="left:42px;top:129.84px;font-size:6.1px;color:#000;;-webkit-text-stroke:0.1px #000;transform:scaleX(0.79);transform-origin:0 50%">Contours</div>
<div style="left:63px;top:130.5px;width:0.8px;height:7px;background:#555"></div>
<div class="t" style="left:66px;top:129.84px;font-size:6.1px;color:#000;;-webkit-text-stroke:0.1px #000;transform:scaleX(0.79);transform-origin:0 50%">Major Contours</div>
<div style="left:101.3px;top:129.7px;width:20.7px;height:8.6px;background:#0078d7"></div>
<div class="t" style="left:103.5px;top:129.64px;font-size:6.1px;color:#fff;;-webkit-text-stroke:0.1px #fff;transform:scaleX(0.79);transform-origin:0 50%">Range</div>
<div class="t" style="left:124px;top:129.84px;font-size:6.1px;color:#000;;-webkit-text-stroke:0.1px #000;transform:scaleX(0.79);transform-origin:0 50%">Labels</div>
<div style="left:138.5px;top:130.5px;width:0.8px;height:7px;background:#555"></div>
<div class="t" style="left:41.5px;top:139.54px;font-size:6.1px;color:#a8a8a8;;-webkit-text-stroke:0.1px #a8a8a8;transform:scaleX(0.79);transform-origin:0 50%">Contour minimum</div>
<div style="left:86.3px;top:141px;width:88.7px;height:7.2px;background:#fff;border-top:1px solid #8a8a8a;border-left:1px solid #8a8a8a;border-bottom:1px solid #e8e8e8;border-right:1px solid #e8e8e8;box-sizing:border-box;"></div>
<div style="left:176.8px;top:140.3px;width:8.5px;height:8.5px;background:#f0f0f0;border-top:1px solid #fff;border-left:1px solid #fff;border-bottom:1px solid #696969;border-right:1px solid #696969;box-sizing:border-box;border-top-color:#fff;border-left-color:#fff;border-right-color:#888;border-bottom-color:#888"></div>
<div style="left:178.0px;top:141.5px;width:6px;height:6px;background:radial-gradient(circle at 35% 35%,#a8d8ff,#1a5fc0 70%,#0a3a80);border-radius:50%"></div>
<div class="t" style="left:41.5px;top:148.84px;font-size:6.1px;color:#a8a8a8;;-webkit-text-stroke:0.1px #a8a8a8;transform:scaleX(0.79);transform-origin:0 50%">Contour maximum</div>
<div style="left:86.3px;top:150.2px;width:88.7px;height:7.2px;background:#fff;border-top:1px solid #8a8a8a;border-left:1px solid #8a8a8a;border-bottom:1px solid #e8e8e8;border-right:1px solid #e8e8e8;box-sizing:border-box;"></div>
<div style="left:176.8px;top:149.5px;width:8.5px;height:8.5px;background:#f0f0f0;border-top:1px solid #fff;border-left:1px solid #fff;border-bottom:1px solid #696969;border-right:1px solid #696969;box-sizing:border-box;border-top-color:#fff;border-left-color:#fff;border-right-color:#888;border-bottom-color:#888"></div>
<div style="left:178.0px;top:150.7px;width:6px;height:6px;background:radial-gradient(circle at 35% 35%,#a8d8ff,#1a5fc0 70%,#0a3a80);border-radius:50%"></div>
<div class="t" style="left:41.5px;top:158.14px;font-size:6.1px;color:#000;;-webkit-text-stroke:0.1px #000;transform:scaleX(0.79);transform-origin:0 50%">Contour reference</div>
<div style="left:86.3px;top:159.4px;width:88.7px;height:7.2px;background:#fff;border-top:1px solid #8a8a8a;border-left:1px solid #8a8a8a;border-bottom:1px solid #e8e8e8;border-right:1px solid #e8e8e8;box-sizing:border-box;"></div>
<div class="t" style="left:87.5px;top:158.64px;font-size:6.1px;color:#000;;-webkit-text-stroke:0.1px #000;transform:scaleX(0.79);transform-origin:0 50%">0</div>
<div style="left:176.8px;top:158.7px;width:8.5px;height:8.5px;background:#f0f0f0;border-top:1px solid #fff;border-left:1px solid #fff;border-bottom:1px solid #696969;border-right:1px solid #696969;box-sizing:border-box;border-top-color:#fff;border-left-color:#fff;border-right-color:#888;border-bottom-color:#888"></div>
<div style="left:178.0px;top:159.89999999999998px;width:6px;height:6px;background:radial-gradient(circle at 35% 35%,#a8d8ff,#1a5fc0 70%,#0a3a80);border-radius:50%"></div>
<div style="left:41.7px;top:171.5px;width:143px;height:34px;border:1px solid #d8d8d8;border-radius:1px;box-shadow:inset 1px 1px 0 #fff"></div>
<div style="left:43.5px;top:168.5px;width:46px;height:6px;background:#f0f0f0"></div>
<div class="t" style="left:44.6px;top:167.24px;font-size:6.1px;color:#000;;-webkit-text-stroke:0.1px #000;transform:scaleX(0.79);transform-origin:0 50%">Colour by range</div>
<div style="left:83.5px;top:169.3px;width:5px;height:5px;border-top:1px solid #505050;border-left:1px solid #505050;border-right:0.6px solid #fff;border-bottom:0.6px solid #fff"></div>
<svg style="position:absolute;left:83.5px;top:169.3px" width="5" height="5"><path d="M1.2 2.0 L2.2 3.6 L4.4 1.3" stroke="#111" stroke-width="1.1" fill="none"/></svg>
<div class="t" style="left:44px;top:176.04px;font-size:6.1px;color:#000;;-webkit-text-stroke:0.1px #000;transform:scaleX(0.79);transform-origin:0 50%">Height range file</div>
<div style="left:88px;top:177.4px;width:84px;height:7.5px;background:#fff;border-top:1px solid #8a8a8a;border-left:1px solid #8a8a8a;border-bottom:1px solid #e8e8e8;border-right:1px solid #e8e8e8;box-sizing:border-box;"></div>
<div class="t" style="left:89.3px;top:176.84px;font-size:6.1px;color:#000;;-webkit-text-stroke:0.1px #000;transform:scaleX(0.79);transform-origin:0 50%">ary\Range_Heights_at_1m_interval.hrf</div>
<svg style="position:absolute;left:173.8px;top:176.5px" width="9" height="9" viewBox="0 0 9 9"><path d="M0.5 3 L2 2 L4 2 L4.5 2.8 L8.5 2.5 L8 8 L0.8 8.3Z" fill="#f2dc10" stroke="#b8a000" stroke-width="0.4"/><path d="M0.8 8.3 L2 4.5 L8.8 4.3 L8 8Z" fill="#f8e820"/></svg>
<div class="t" style="left:44px;top:185.54px;font-size:6.1px;color:#000;;-webkit-text-stroke:0.1px #000;transform:scaleX(0.79);transform-origin:0 50%">Interpolate colours</div>
<div style="left:177.3px;top:187.5px;width:5px;height:5px;border-top:1px solid #505050;border-left:1px solid #505050;border-right:0.6px solid #fff;border-bottom:0.6px solid #fff"></div>
<div class="t" style="left:44px;top:195.04px;font-size:6.1px;color:#000;;-webkit-text-stroke:0.1px #000;transform:scaleX(0.79);transform-origin:0 50%">Colour text labels</div>
<div style="left:177.3px;top:197px;width:5px;height:5px;border-top:1px solid #505050;border-left:1px solid #505050;border-right:0.6px solid #fff;border-bottom:0.6px solid #fff"></div>
<svg style="position:absolute;left:177.3px;top:197px" width="5" height="5"><path d="M1.2 2.0 L2.2 3.6 L4.4 1.3" stroke="#111" stroke-width="1.1" fill="none"/></svg>
<div style="left:39.5px;top:238.4px;width:146.5px;height:7.4px;border-top:1px solid #a0a0a0;border-left:1px solid #a0a0a0;border-bottom:1px solid #fff;border-right:1px solid #fff"></div>
<div class="t" style="left:41.5px;top:237.94px;font-size:6.1px;color:#000;;-webkit-text-stroke:0.1px #000;transform:scaleX(0.79);transform-origin:0 50%">ok - field is optional</div>
<div style="left:59.8px;top:246.7px;width:21.0px;height:8.100000000000023px;background:#f0f0f0;border-top:1px solid #fff;border-left:1px solid #fff;border-right:1px solid #9a9a9a;border-bottom:1px solid #9a9a9a;box-shadow:0.6px 0.6px 0 #cfcfcf"></div>
<div class="t" style="left:59.8px;top:247.0px;width:21.0px;height:8.100000000000023px;font-size:6.1px;line-height:7.100000000000023px;text-align:center;color:#111;transform:scaleX(0.79);transform-origin:50% 50%">Process</div>
<div style="left:102.7px;top:246.7px;width:20.299999999999997px;height:8.100000000000023px;background:#f0f0f0;border-top:1px solid #fff;border-left:1px solid #fff;border-right:1px solid #9a9a9a;border-bottom:1px solid #9a9a9a;box-shadow:0.6px 0.6px 0 #cfcfcf"></div>
<div class="t" style="left:102.7px;top:247.0px;width:20.299999999999997px;height:8.100000000000023px;font-size:6.1px;line-height:7.100000000000023px;text-align:center;color:#111;transform:scaleX(0.79);transform-origin:50% 50%">Finish</div>
<div style="left:145.6px;top:246.7px;width:21.0px;height:8.100000000000023px;background:#f0f0f0;border-top:1px solid #fff;border-left:1px solid #fff;border-right:1px solid #9a9a9a;border-bottom:1px solid #9a9a9a;box-shadow:0.6px 0.6px 0 #cfcfcf"></div>
<div class="t" style="left:145.6px;top:247.0px;width:21.0px;height:8.100000000000023px;font-size:6.1px;line-height:7.100000000000023px;text-align:center;color:#111;transform:scaleX(0.79);transform-origin:50% 50%">Help</div>
<div style="left:475.4px;top:93.6px;width:153.6px;height:213px;background:#f0f0f0;border:1px solid #fafafa"></div>
<div style="left:476.4px;top:94.6px;width:151.6px;height:11.5px;background:#fff"></div>
<svg style="position:absolute;left:479.4px;top:96.6px" width="6" height="7"><path d="M0.5 1.5 L3 0.3 L5.5 1.5 L5.5 5 L3 6.5 L0.5 5Z" fill="#2f5a48"/><path d="M0.5 1.5 L3 2.7 L5.5 1.5" stroke="#8fb0a0" stroke-width="0.6" fill="none"/></svg>
<div class="t" style="left:487.4px;top:96.44px;font-size:5.6px;color:#a5a5a5;;transform:scaleX(0.9);transform-origin:0 50%">Write Google Earth</div>
<div style="left:582.0px;top:99.6px;width:4.5px;height:0.8px;background:#999"></div>
<div style="left:599.0px;top:97.6px;width:4px;height:4px;border:0.7px solid #ccc"></div>
<svg style="position:absolute;left:616.5px;top:97.1px" width="5" height="5"><path d="M0.5 0.5 L4.5 4.5 M4.5 0.5 L0.5 4.5" stroke="#666" stroke-width="0.7"/></svg>
<div style="left:478px;top:110.8px;width:148.4px;height:28px;border:1px solid #d8d8d8;box-shadow:inset 1px 1px 0 #fff"></div>
<div style="left:480px;top:108px;width:30px;height:5px;background:#f0f0f0"></div>
<div class="t" style="left:481px;top:106.44px;font-size:6.1px;color:#000;;-webkit-text-stroke:0.1px #000;transform:scaleX(0.79);transform-origin:0 50%">Data to export</div>
<div style="left:480.7px;top:115.5px;width:11.2px;height:11.2px;background:#f0f0f0;border-top:1px solid #fff;border-left:1px solid #fff;border-bottom:1px solid #696969;border-right:1px solid #696969;box-sizing:border-box;"></div>
<svg style="position:absolute;left:482.2px;top:117px" width="8" height="8"><path d="M1 1 L6.5 6.5" stroke="#e03030" stroke-width="1.2"/><path d="M6.8 6.8 L4 6.5 L6.5 4Z" fill="#e03030"/></svg>
<div style="left:492.65px;top:115.5px;width:11.2px;height:11.2px;background:#f0f0f0;border-top:1px solid #fff;border-left:1px solid #fff;border-bottom:1px solid #696969;border-right:1px solid #696969;box-sizing:border-box;"></div>
<svg style="position:absolute;left:494.15px;top:117px" width="8" height="8" viewBox="0 0 8 8"><path d="M0.5 4 L4 2 L7.5 4 L4 6Z" fill="#9a8acb"/><path d="M0.5 4.8 L4 6.8 L7.5 4.8 L7.5 4 L4 6 L0.5 4Z" fill="#3a3060"/></svg>
<div style="left:504.59999999999997px;top:115.5px;width:11.2px;height:11.2px;background:#f0f0f0;border-top:1px solid #fff;border-left:1px solid #fff;border-bottom:1px solid #696969;border-right:1px solid #696969;box-sizing:border-box;"></div>
<div style="left:506.59999999999997px;top:117.5px;width:7px;height:7px;background:linear-gradient(135deg,#3a8a30,#8fd070);border:0.5px solid #333"></div>
<div style="left:516.55px;top:115.5px;width:11.2px;height:11.2px;background:#f0f0f0;border-top:1px solid #fff;border-left:1px solid #fff;border-bottom:1px solid #696969;border-right:1px solid #696969;box-sizing:border-box;"></div>
<svg style="position:absolute;left:518.05px;top:117px" width="8" height="8"><path d="M1 1 L7 7 M7 1 L1 7" stroke="#e04040" stroke-width="1" stroke-dasharray="1.5 1"/></svg>
<div style="left:528.5px;top:115.5px;width:11.2px;height:11.2px;background:#f0f0f0;border-top:1px solid #fff;border-left:1px solid #fff;border-bottom:1px solid #696969;border-right:1px solid #696969;box-sizing:border-box;"></div>
<div style="left:530.7px;top:118.3px;width:6.5px;height:5.5px;border:1px solid #1a5ab0;background:#8ab8e8;border-radius:1px"></div>
<div style="left:540.45px;top:115.5px;width:11.2px;height:11.2px;background:#f0f0f0;border-top:1px solid #fff;border-left:1px solid #fff;border-bottom:1px solid #696969;border-right:1px solid #696969;box-sizing:border-box;"></div>
<svg style="position:absolute;left:541.95px;top:117px" width="8" height="8"><path d="M2 1.5 L7.5 1.5 L6 6.5 L0.5 6.5Z" fill="#8ab8e8" stroke="#1a5ab0" stroke-width="0.8"/></svg>
<div style="left:552.4px;top:115.5px;width:11.2px;height:11.2px;background:#f0f0f0;border-top:1px solid #fff;border-left:1px solid #fff;border-bottom:1px solid #696969;border-right:1px solid #696969;box-sizing:border-box;"></div>
<svg style="position:absolute;left:553.9px;top:117px" width="8" height="8"><path d="M0.5 6.5 L7.5 1 L7.5 6.5Z" fill="#8ab8e8" stroke="#1a5ab0" stroke-width="0.8"/></svg>
<div style="left:564.35px;top:115.5px;width:11.2px;height:11.2px;background:#f0f0f0;border-top:1px solid #fff;border-left:1px solid #fff;border-bottom:1px solid #696969;border-right:1px solid #696969;box-sizing:border-box;"></div>
<svg style="position:absolute;left:565.85px;top:117px" width="8" height="8"><path d="M1 6.5 L1.5 2 L7 1 L6 6.5Z" fill="#f4f4f4" stroke="#555" stroke-width="0.7"/></svg>
<div style="left:576.3px;top:115.5px;width:11.2px;height:11.2px;background:#f0f0f0;border-top:1px solid #fff;border-left:1px solid #fff;border-bottom:1px solid #696969;border-right:1px solid #696969;box-sizing:border-box;"></div>
<svg style="position:absolute;left:577.8px;top:117px" width="8" height="8"><circle cx="4.5" cy="3.5" r="2.6" fill="#dff" stroke="#333" stroke-width="0.7"/><path d="M2.5 5.5 L1 7" stroke="#333" stroke-width="0.8"/></svg>
<div style="left:588.25px;top:115.5px;width:11.2px;height:11.2px;background:#f0f0f0;border-top:1px solid #fff;border-left:1px solid #fff;border-bottom:1px solid #696969;border-right:1px solid #696969;box-sizing:border-box;"></div>
<svg style="position:absolute;left:589.75px;top:117px" width="8" height="8"><rect x="1.5" y="1" width="6" height="5" fill="#a0c0f0" stroke="#3060c0" stroke-width="0.6"/><path d="M0.5 5 L6.5 5 L6.5 7.5 L0.5 7.5Z" fill="#d06090"/></svg>
<div style="left:600.2px;top:115.5px;width:11.2px;height:11.2px;background:#f0f0f0;border-top:1px solid #fff;border-left:1px solid #fff;border-bottom:1px solid #696969;border-right:1px solid #696969;box-sizing:border-box;"></div>
<svg style="position:absolute;left:601.7px;top:117px" width="8" height="8"><path d="M0.5 1 L7.5 1 L4.8 4 L4.8 7.5 L3.2 6.5 L3.2 4Z" fill="#1f6fd0"/></svg>
<div style="left:612.15px;top:115.5px;width:11.2px;height:11.2px;background:#f0f0f0;border-top:1px solid #fff;border-left:1px solid #fff;border-bottom:1px solid #696969;border-right:1px solid #696969;box-sizing:border-box;"></div>
<svg style="position:absolute;left:613.75px;top:117.2px" width="8" height="8" viewBox="0 0 8 8"><path d="M4 0.5 L5 3 L7.6 3 L5.5 4.7 L6.3 7.4 L4 5.8 L1.7 7.4 L2.5 4.7 L0.4 3 L3 3Z" fill="#f0c010" stroke="#c09000" stroke-width="0.3"/></svg>
<div class="t" style="left:479.5px;top:126.64px;font-size:6.1px;color:#000;;-webkit-text-stroke:0.1px #000;transform:scaleX(0.79);transform-origin:0 50%">View</div>
<div style="left:531.9px;top:128.4px;width:81.6px;height:7.3px;background:#fff;border-top:1px solid #8a8a8a;border-left:1px solid #8a8a8a;border-bottom:1px solid #e8e8e8;border-right:1px solid #e8e8e8;box-sizing:border-box;"></div>
<div class="t" style="left:533.5px;top:127.64px;font-size:6.1px;color:#000;;-webkit-text-stroke:0.1px #000;transform:scaleX(0.79);transform-origin:0 50%">Contours</div>
<div style="left:616px;top:128px;width:8.5px;height:8.5px;background:linear-gradient(135deg,#2a7a30,#90d070);border:0.6px solid #333"></div>
<div class="t" style="left:478px;top:138.54px;font-size:6.1px;color:#000;;-webkit-text-stroke:0.1px #000;transform:scaleX(0.79);transform-origin:0 50%">Projection</div>
<div style="left:529px;top:140.6px;width:88px;height:7px;background:#fff;border-top:1px solid #8a8a8a;border-left:1px solid #8a8a8a;border-bottom:1px solid #e8e8e8;border-right:1px solid #e8e8e8;box-sizing:border-box;"></div>
<div class="t" style="left:530.5px;top:139.64px;font-size:6.1px;color:#000;;-webkit-text-stroke:0.1px #000;transform:scaleX(0.79);transform-origin:0 50%">MGA94 Zone 56</div>
<div style="left:618px;top:139.8px;width:8.5px;height:8.5px;background:#f0f0f0;border-top:1px solid #fff;border-left:1px solid #fff;border-bottom:1px solid #696969;border-right:1px solid #696969;box-sizing:border-box;"></div>
<svg style="position:absolute;left:619px;top:141.8px" width="7" height="5"><path d="M0.3 0.5 L6.7 0.5 L3.5 4.3Z" fill="#1f6fc0"/></svg>
<div class="t" style="left:478px;top:147.64px;font-size:6.1px;color:#000;;-webkit-text-stroke:0.1px #000;transform:scaleX(0.79);transform-origin:0 50%">Elevation mode</div>
<div style="left:529px;top:149.7px;width:88px;height:7px;background:#fff;border-top:1px solid #8a8a8a;border-left:1px solid #8a8a8a;border-bottom:1px solid #e8e8e8;border-right:1px solid #e8e8e8;box-sizing:border-box;"></div>
<div class="t" style="left:530.5px;top:148.74px;font-size:6.1px;color:#000;;-webkit-text-stroke:0.1px #000;transform:scaleX(0.79);transform-origin:0 50%">Absolute</div>
<div style="left:618px;top:148.9px;width:8.5px;height:8.5px;background:#f0f0f0;border-top:1px solid #fff;border-left:1px solid #fff;border-bottom:1px solid #696969;border-right:1px solid #696969;box-sizing:border-box;"></div>
<svg style="position:absolute;left:619px;top:150.9px" width="7" height="5"><path d="M0.3 0.5 L6.7 0.5 L3.5 4.3Z" fill="#1f6fc0"/></svg>
<div class="t" style="left:478px;top:156.84px;font-size:6.1px;color:#a8a8a8;;-webkit-text-stroke:0.1px #a8a8a8;transform:scaleX(0.79);transform-origin:0 50%">Elevation offset</div>
<div style="left:529px;top:158.9px;width:88px;height:7px;background:#fff;border-top:1px solid #8a8a8a;border-left:1px solid #8a8a8a;border-bottom:1px solid #e8e8e8;border-right:1px solid #e8e8e8;box-sizing:border-box;background:#f0f0f0"></div>
<div style="left:618.5px;top:158.3px;width:8px;height:8px;background:#a5a5a5;border:0.6px solid #888"></div>
<div class="t" style="left:478.5px;top:166.44px;font-size:6.1px;color:#000;;-webkit-text-stroke:0.1px #000;transform:scaleX(0.79);transform-origin:0 50%">Extend sides to ground</div>
<div style="left:621.5px;top:168.5px;width:5px;height:5px;border-top:1px solid #505050;border-left:1px solid #505050;border-right:0.6px solid #fff;border-bottom:0.6px solid #fff"></div>
<div class="t" style="left:478.5px;top:175.94px;font-size:6.1px;color:#a8a8a8;;-webkit-text-stroke:0.1px #a8a8a8;transform:scaleX(0.79);transform-origin:0 50%">Drape between points</div>
<div style="left:621.5px;top:178px;width:5px;height:5px;border-top:1px solid #505050;border-left:1px solid #505050;border-right:0.6px solid #fff;border-bottom:0.6px solid #fff"></div>
<div class="t" style="left:478px;top:184.84px;font-size:6.1px;color:#a8a8a8;;-webkit-text-stroke:0.1px #a8a8a8;transform:scaleX(0.79);transform-origin:0 50%">Attribute Group Name</div>
<div style="left:529px;top:186px;width:87.7px;height:6.8px;background:#fff;border-top:1px solid #8a8a8a;border-left:1px solid #8a8a8a;border-bottom:1px solid #e8e8e8;border-right:1px solid #e8e8e8;box-sizing:border-box;"></div>
<div style="left:618px;top:185.5px;width:8.5px;height:8px;background:#f0f0f0;border-top:1px solid #fff;border-left:1px solid #fff;border-bottom:1px solid #696969;border-right:1px solid #696969;box-sizing:border-box;"></div>
<div class="t" style="left:619px;top:186.62px;font-size:4.8px;color:#b02020;font-weight:bold">ab</div>
<div class="t" style="left:478.6px;top:194.34px;font-size:6.1px;color:#000;;-webkit-text-stroke:0.1px #000;transform:scaleX(0.79);transform-origin:0 50%">Write string attributes</div>
<div style="left:621.5px;top:196.29999999999998px;width:5px;height:5px;border-top:1px solid #505050;border-left:1px solid #505050;border-right:0.6px solid #fff;border-bottom:0.6px solid #fff"></div>
<svg style="position:absolute;left:621.5px;top:196.29999999999998px" width="5" height="5"><path d="M1.2 2.0 L2.2 3.6 L4.4 1.3" stroke="#111" stroke-width="1.1" fill="none"/></svg>
<div class="t" style="left:478.6px;top:203.64px;font-size:6.1px;color:#000;;-webkit-text-stroke:0.1px #000;transform:scaleX(0.79);transform-origin:0 50%">Write vertex attributes</div>
<div style="left:621.5px;top:205.6px;width:5px;height:5px;border-top:1px solid #505050;border-left:1px solid #505050;border-right:0.6px solid #fff;border-bottom:0.6px solid #fff"></div>
<svg style="position:absolute;left:621.5px;top:205.6px" width="5" height="5"><path d="M1.2 2.0 L2.2 3.6 L4.4 1.3" stroke="#111" stroke-width="1.1" fill="none"/></svg>
<div class="t" style="left:478.6px;top:212.94px;font-size:6.1px;color:#000;;-webkit-text-stroke:0.1px #000;transform:scaleX(0.79);transform-origin:0 50%">Write line styles</div>
<div style="left:621.5px;top:214.9px;width:5px;height:5px;border-top:1px solid #505050;border-left:1px solid #505050;border-right:0.6px solid #fff;border-bottom:0.6px solid #fff"></div>
<svg style="position:absolute;left:621.5px;top:214.9px" width="5" height="5"><path d="M1.2 2.0 L2.2 3.6 L4.4 1.3" stroke="#111" stroke-width="1.1" fill="none"/></svg>
<div class="t" style="left:478.6px;top:222.14px;font-size:6.1px;color:#000;;-webkit-text-stroke:0.1px #000;transform:scaleX(0.79);transform-origin:0 50%">Write vertices</div>
<div style="left:621.5px;top:224.1px;width:5px;height:5px;border-top:1px solid #505050;border-left:1px solid #505050;border-right:0.6px solid #fff;border-bottom:0.6px solid #fff"></div>
<div class="t" style="left:478.6px;top:231.24px;font-size:6.1px;color:#000;;-webkit-text-stroke:0.1px #000;transform:scaleX(0.79);transform-origin:0 50%">Hide point labels</div>
<div style="left:621.5px;top:233.2px;width:5px;height:5px;border-top:1px solid #505050;border-left:1px solid #505050;border-right:0.6px solid #fff;border-bottom:0.6px solid #fff"></div>
<svg style="position:absolute;left:621.5px;top:233.2px" width="5" height="5"><path d="M1.2 2.0 L2.2 3.6 L4.4 1.3" stroke="#111" stroke-width="1.1" fill="none"/></svg>
<div class="t" style="left:478.6px;top:240.44px;font-size:6.1px;color:#000;;-webkit-text-stroke:0.1px #000;transform:scaleX(0.79);transform-origin:0 50%">Use fast text mode</div>
<div style="left:621.5px;top:242.4px;width:5px;height:5px;border-top:1px solid #505050;border-left:1px solid #505050;border-right:0.6px solid #fff;border-bottom:0.6px solid #fff"></div>
<svg style="position:absolute;left:621.5px;top:242.4px" width="5" height="5"><path d="M1.2 2.0 L2.2 3.6 L4.4 1.3" stroke="#111" stroke-width="1.1" fill="none"/></svg>
<div class="t" style="left:478.6px;top:249.54px;font-size:6.1px;color:#000;;-webkit-text-stroke:0.1px #000;transform:scaleX(0.79);transform-origin:0 50%">White exports black</div>
<div style="left:621.5px;top:251.5px;width:5px;height:5px;border-top:1px solid #505050;border-left:1px solid #505050;border-right:0.6px solid #fff;border-bottom:0.6px solid #fff"></div>
<div class="t" style="left:478px;top:258.64px;font-size:6.1px;color:#000;;-webkit-text-stroke:0.1px #000;transform:scaleX(0.79);transform-origin:0 50%">Plot scale</div>
<div style="left:529px;top:260.3px;width:87.7px;height:7px;background:#fff;border-top:1px solid #8a8a8a;border-left:1px solid #8a8a8a;border-bottom:1px solid #e8e8e8;border-right:1px solid #e8e8e8;box-sizing:border-box;"></div>
<div class="t" style="left:530.5px;top:259.64px;font-size:6.1px;color:#000;;-webkit-text-stroke:0.1px #000;transform:scaleX(0.79);transform-origin:0 50%">1000</div>
<div style="left:617.8px;top:259.3px;width:8.5px;height:8.5px;background:#f0f0f0;border-top:1px solid #fff;border-left:1px solid #fff;border-bottom:1px solid #696969;border-right:1px solid #696969;box-sizing:border-box;border-top-color:#fff;border-left-color:#fff;border-right-color:#888;border-bottom-color:#888"></div>
<div style="left:619.0px;top:260.5px;width:6px;height:6px;background:radial-gradient(circle at 35% 35%,#a8d8ff,#1a5fc0 70%,#0a3a80);border-radius:50%"></div>
<div class="t" style="left:478px;top:267.74px;font-size:6.1px;color:#000;;-webkit-text-stroke:0.1px #000;transform:scaleX(0.79);transform-origin:0 50%">Format</div>
<div style="left:529px;top:269.5px;width:87.7px;height:7px;background:#fff;border-top:1px solid #8a8a8a;border-left:1px solid #8a8a8a;border-bottom:1px solid #e8e8e8;border-right:1px solid #e8e8e8;box-sizing:border-box;"></div>
<div class="t" style="left:530.5px;top:268.64px;font-size:6.1px;color:#000;;-webkit-text-stroke:0.1px #000;transform:scaleX(0.79);transform-origin:0 50%">kmz</div>
<div style="left:618px;top:268.5px;width:8.5px;height:8.5px;background:#f0f0f0;border-top:1px solid #fff;border-left:1px solid #fff;border-bottom:1px solid #696969;border-right:1px solid #696969;box-sizing:border-box;"></div>
<svg style="position:absolute;left:619px;top:270.5px" width="7" height="5"><path d="M0.3 0.5 L6.7 0.5 L3.5 4.3Z" fill="#1f6fc0"/></svg>
<div class="t" style="left:478px;top:276.74px;font-size:6.1px;color:#000;;-webkit-text-stroke:0.1px #000;transform:scaleX(0.79);transform-origin:0 50%">File</div>
<div style="left:529px;top:278.6px;width:87.7px;height:7px;background:#fff;border-top:1px solid #8a8a8a;border-left:1px solid #8a8a8a;border-bottom:1px solid #e8e8e8;border-right:1px solid #e8e8e8;box-sizing:border-box;"></div>
<div class="t" style="left:530.5px;top:277.84px;font-size:6.1px;color:#000;;-webkit-text-stroke:0.1px #000;transform:scaleX(0.79);transform-origin:0 50%">Contours.KMZ</div>
<svg style="position:absolute;left:617.8px;top:277.6px" width="9" height="9" viewBox="0 0 9 9"><path d="M0.5 3 L2 2 L4 2 L4.5 2.8 L8.5 2.5 L8 8 L0.8 8.3Z" fill="#f2dc10" stroke="#b8a000" stroke-width="0.4"/><path d="M0.8 8.3 L2 4.5 L8.8 4.3 L8 8Z" fill="#f8e820"/></svg>
<div style="left:478px;top:288.2px;width:148.4px;height:6.6px;border-top:1px solid #a0a0a0;border-left:1px solid #a0a0a0;border-bottom:1px solid #fff;border-right:1px solid #fff"></div>
<div class="t" style="left:480px;top:287.24px;font-size:6.1px;color:#000;;-webkit-text-stroke:0.1px #000;transform:scaleX(0.79);transform-origin:0 50%">choice ok</div>
<div style="left:503.3px;top:296.2px;width:14.999999999999943px;height:8.600000000000023px;background:#f0f0f0;border-top:1px solid #fff;border-left:1px solid #fff;border-right:1px solid #9a9a9a;border-bottom:1px solid #9a9a9a;box-shadow:0.6px 0.6px 0 #cfcfcf"></div>
<div class="t" style="left:503.3px;top:296.5px;width:14.999999999999943px;height:8.600000000000023px;font-size:6.1px;line-height:7.600000000000023px;text-align:center;color:#111;transform:scaleX(0.79);transform-origin:50% 50%">Write</div>
<div style="left:544.8px;top:296.2px;width:15.0px;height:8.600000000000023px;background:#f0f0f0;border-top:1px solid #fff;border-left:1px solid #fff;border-right:1px solid #9a9a9a;border-bottom:1px solid #9a9a9a;box-shadow:0.6px 0.6px 0 #cfcfcf"></div>
<div class="t" style="left:544.8px;top:296.5px;width:15.0px;height:8.600000000000023px;font-size:6.1px;line-height:7.600000000000023px;text-align:center;color:#111;transform:scaleX(0.79);transform-origin:50% 50%">Finish</div>
<div style="left:586px;top:296.2px;width:15px;height:8.600000000000023px;background:#f0f0f0;border-top:1px solid #fff;border-left:1px solid #fff;border-right:1px solid #9a9a9a;border-bottom:1px solid #9a9a9a;box-shadow:0.6px 0.6px 0 #cfcfcf"></div>
<div class="t" style="left:586px;top:296.5px;width:15px;height:8.600000000000023px;font-size:6.1px;line-height:7.600000000000023px;text-align:center;color:#111;transform:scaleX(0.79);transform-origin:50% 50%">Help</div>
</body></html>
